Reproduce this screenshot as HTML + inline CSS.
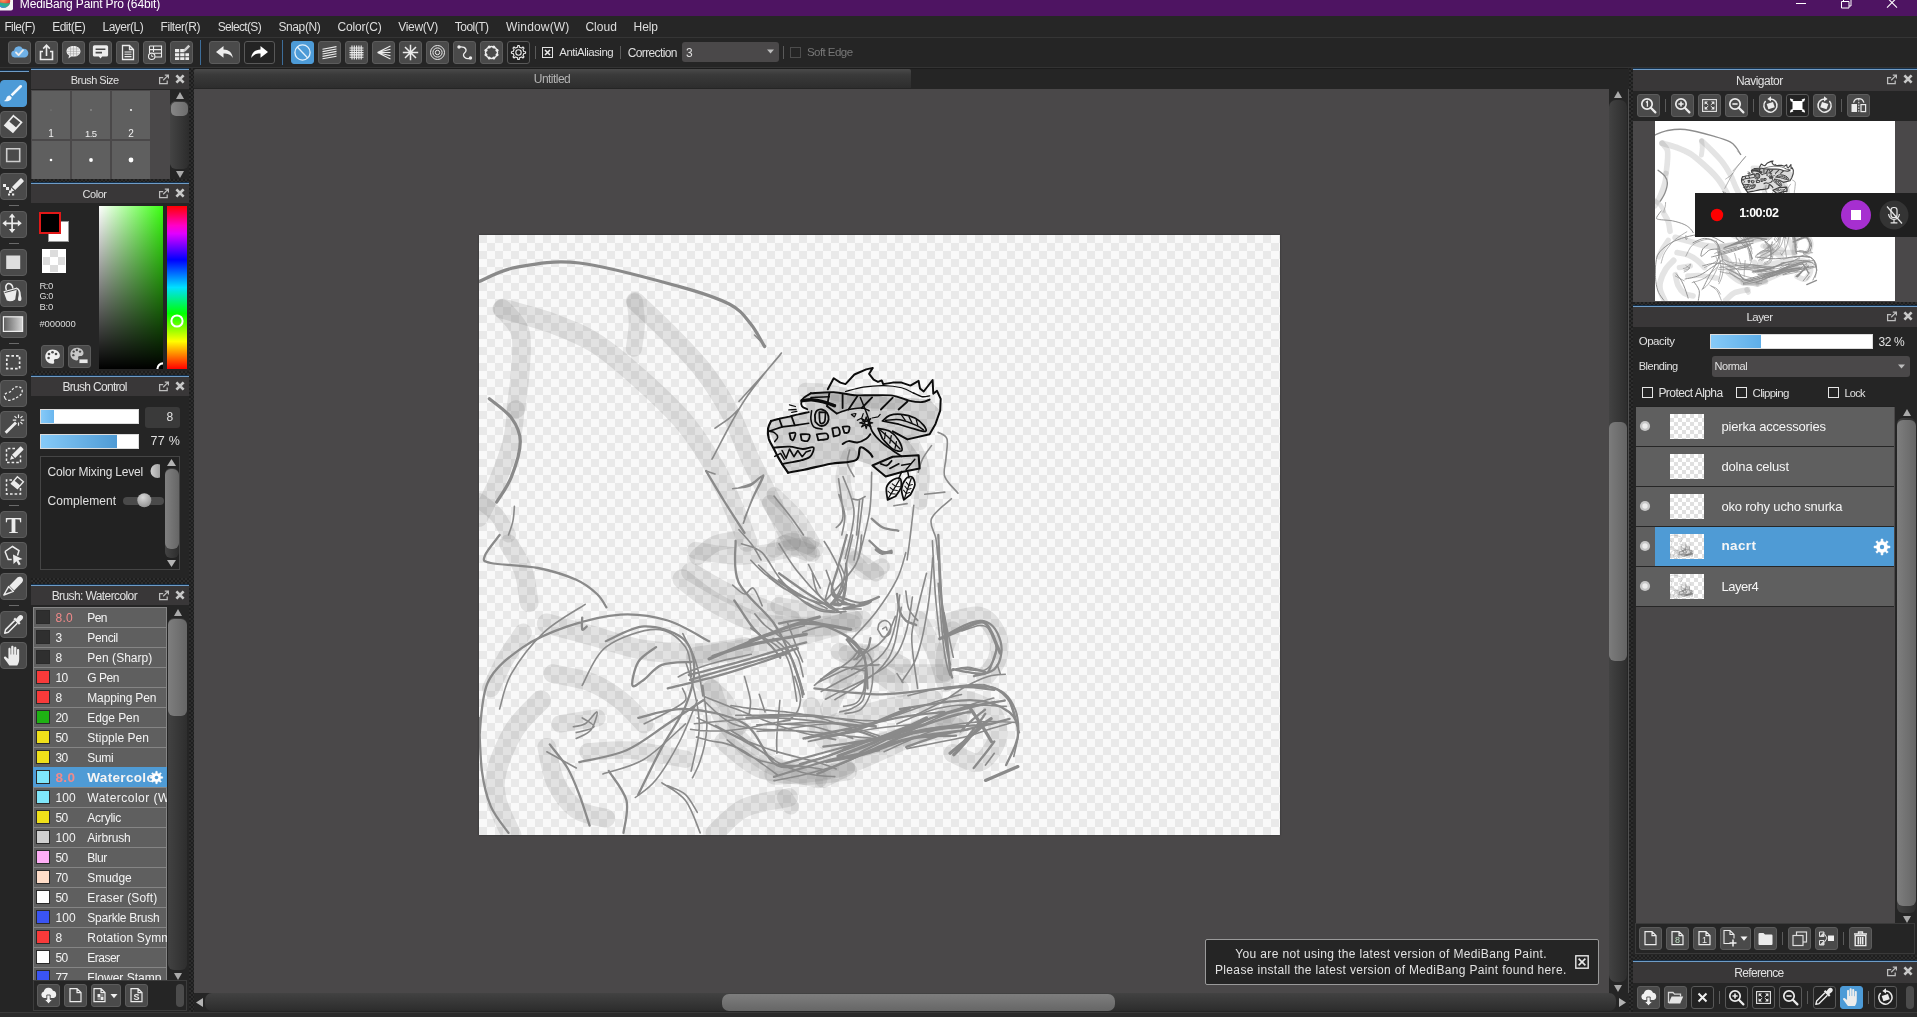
<!DOCTYPE html><html><head><meta charset="utf-8"><title>MediBang Paint Pro</title><style>
*{box-sizing:border-box}
html,body{margin:0;padding:0}
body{width:1917px;height:1017px;overflow:hidden;background:#252525;position:relative;font-family:"Liberation Sans",sans-serif;font-size:12px;color:#e6e6e6}
div,svg{position:absolute}
.b svg{left:-1px;top:-1px}
.t{white-space:nowrap}
.b{border-radius:3px;border:1px solid #5c5c5c;background:#4a4a4a}
.b.kd{background:#232323;border-color:#585858}
.b.kb{background:#4d9bd7;border-color:#4d9bd7}
.pt{background:#353334;border-top:0}
.bl{background:#3f78a6;height:1px}

.row{background:#5f5f5f;border:1px solid #858585}
.sw{border:1px solid #2a2a2a}
</style></head><body><div id="root" style="left:0;top:0;width:1917px;height:1017px;will-change:transform"><div style="left:0px;top:0px;width:1917px;height:16px;background:#4e1462"></div>
<svg style="left:0px;top:0px;" width="14" height="12" viewBox="0 0 14 12"><defs><radialGradient id="ai" cx=".45" cy=".3" r=".8"><stop offset="0" stop-color="#ffb060"/><stop offset=".45" stop-color="#e84a3a"/><stop offset="1" stop-color="#a02848"/></radialGradient><clipPath id="cpi"><circle cx="3.6" cy="1.2" r="6.6"/></clipPath></defs><path d="M0 0 h13 v8.5 a2 2 0 0 1 -2 2 h-11 z" fill="#f4f4f4"/><g clip-path="url(#cpi)"><rect x="-4" y="-6" width="16" height="16" fill="url(#ai)"/><path d="M-3 3 C1 1 5 5 10.5 2.5 V10 H-3 Z" fill="#2fae8e"/><path d="M-3 5 C0 4 3 8 8 6.5 V10 H-3 Z" fill="#3a8fd8"/></g></svg>
<div class="t" style="left:19.8px;top:-1.7px;font-size:12px;line-height:12px;color:#ffffff;letter-spacing:-0.15px;">MediBang Paint Pro (64bit)</div>
<svg style="left:1780px;top:0px;" width="137" height="16" viewBox="0 0 137 16"><path d="M16 3.5 h10" stroke="#fff" stroke-width="1"/><path d="M61.5 1.5 h7.5 v6.5 h-7.5 z M63.5 1.5 v-2.5 h7.5 v7 h-2" stroke="#fff" stroke-width="1" fill="none"/><path d="M107 -2.4 l10 10 M117 -2.4 l-10 10" stroke="#fff" stroke-width="1.1"/></svg>
<div style="left:0px;top:16px;width:1917px;height:21px;background:#262626"></div>
<div class="t" style="left:4.4px;top:21.0px;font-size:12px;line-height:12px;color:#dedede;letter-spacing:-0.60px;">File(F)</div>
<div class="t" style="left:52.3px;top:21.0px;font-size:12px;line-height:12px;color:#dedede;letter-spacing:-0.55px;">Edit(E)</div>
<div class="t" style="left:102.5px;top:21.0px;font-size:12px;line-height:12px;color:#dedede;letter-spacing:-0.50px;">Layer(L)</div>
<div class="t" style="left:160.5px;top:21.0px;font-size:12px;line-height:12px;color:#dedede;letter-spacing:-0.43px;">Filter(R)</div>
<div class="t" style="left:217.8px;top:21.0px;font-size:12px;line-height:12px;color:#dedede;letter-spacing:-0.69px;">Select(S)</div>
<div class="t" style="left:278.5px;top:21.0px;font-size:12px;line-height:12px;color:#dedede;letter-spacing:-0.41px;">Snap(N)</div>
<div class="t" style="left:337.4px;top:21.0px;font-size:12px;line-height:12px;color:#dedede;letter-spacing:-0.14px;">Color(C)</div>
<div class="t" style="left:398.3px;top:21.0px;font-size:12px;line-height:12px;color:#dedede;letter-spacing:-0.32px;">View(V)</div>
<div class="t" style="left:454.7px;top:21.0px;font-size:12px;line-height:12px;color:#dedede;letter-spacing:-0.49px;">Tool(T)</div>
<div class="t" style="left:506.0px;top:21.0px;font-size:12px;line-height:12px;color:#dedede;letter-spacing:0.17px;">Window(W)</div>
<div class="t" style="left:585.4px;top:21.0px;font-size:12px;line-height:12px;color:#dedede;letter-spacing:0.06px;">Cloud</div>
<div class="t" style="left:633.6px;top:21.0px;font-size:12px;line-height:12px;color:#dedede;letter-spacing:-0.10px;">Help</div>
<div style="left:0px;top:37px;width:1917px;height:1px;background:#353535"></div>
<div style="left:0px;top:38px;width:1917px;height:30px;background:#252525"></div>
<div style="left:0px;top:67px;width:1917px;height:1px;background:#333"></div>
<div class="b kg" style="left:8px;top:41px;width:23px;height:23px"><svg width="23" height="23" viewBox="0 0 23 23"><path d="M6.5 16.5 a3.6 3.6 0 0 1 -.4 -7.1 a4.6 4.6 0 0 1 8.6 -1.6 a4.2 4.2 0 0 1 2.3 8.7 z" fill="#6fb0e6" /><path d="M8 11.5 l2.6 2.6 l4.4 -5" fill="none" stroke="#ececec" stroke-width="1.8" stroke-linecap="round" stroke-linejoin="round"/></svg></div>
<div class="b kg" style="left:35px;top:41px;width:23px;height:23px"><svg width="23" height="23" viewBox="0 0 23 23"><path d="M8 10.5 h-2.5 v8 h12 v-8 h-2.5" fill="none" stroke="#ececec" stroke-width="1.6" /><path d="M11.5 15 v-10 M8.2 7.6 l3.3 -3.4 l3.3 3.4" fill="none" stroke="#ececec" stroke-width="1.6" /></svg></div>
<div class="b kg" style="left:62px;top:41px;width:23px;height:23px"><svg width="23" height="23" viewBox="0 0 23 23"><path d="M11.5 5 c4.2 0 7 2.3 7 5.3 s-2.8 5.3 -7 5.3 c-.8 0 -1.5 -.1 -2.2 -.2 l-3 2.2 l.9 -3 c-1.7 -1 -2.7 -2.5 -2.7 -4.3 c0 -3 2.8 -5.3 7 -5.3 z" fill="#ececec" /><path d="M6 8 h11 M5 10.4 h13 M6 12.8 h11 M8.5 5.5 v10 M11.5 5 v10.5 M14.5 5.5 v10" stroke="#9a9a9a" stroke-width=".5" fill="none"/></svg></div>
<div class="b kg" style="left:89px;top:41px;width:23px;height:23px"><svg width="23" height="23" viewBox="0 0 23 23"><path d="M5.5 4.2 h12 a1.6 1.6 0 0 1 1.6 1.6 v8.2 a1.6 1.6 0 0 1 -1.6 1.6 h-4.3 l-1.7 2 l-1.7 -2 h-4.3 a1.6 1.6 0 0 1 -1.6 -1.6 v-8.2 a1.6 1.6 0 0 1 1.6 -1.6 z" fill="#ececec" /><path d="M6.6 8.2 h9.8 M6.6 11.6 h6.4" stroke="#4a4a4a" stroke-width="1.6"/></svg></div>
<div class="b kg" style="left:116px;top:41px;width:23px;height:23px"><svg width="23" height="23" viewBox="0 0 23 23"><path d="M6.5 4.5 h7 l4 4 v10 h-11 z M13.5 4.5 v4 h4" fill="none" stroke="#ececec" stroke-width="1.3" /><path d="M8.5 11 h7 M8.5 13.3 h7 M8.5 15.6 h7" fill="none" stroke="#ececec" stroke-width="1.1" /></svg></div>
<div class="b kg" style="left:143px;top:41px;width:23px;height:23px"><svg width="23" height="23" viewBox="0 0 23 23"><path d="M6.5 5 h12 v11 h-7 M6.5 5 v7 M6.5 8.6 h12 M10.5 5 v6 M10.5 12.3 h8" fill="none" stroke="#ececec" stroke-width="1.1" /><circle cx="8.7" cy="15.3" r="3.2" fill="#4a4a4a" stroke="#ececec" stroke-width="1.1"/><path d="M8.7 13.5 v1.9 h1.6" fill="none" stroke="#ececec" stroke-width="0.9" /></svg></div>
<div class="b kg" style="left:170px;top:41px;width:23px;height:23px"><svg width="23" height="23" viewBox="0 0 23 23"><path d="M5 8 h4.2 v3.2 h-4.2 z M10.2 8 h4.2 v3.2 h-4.2 z M5 12.2 h4.2 v3 h-4.2 z M10.2 12.2 h4.2 v3 h-4.2 z M15.4 12.2 h3.6 v3 h-3.6 z M5 16.2 h4.2 v2.8 h-4.2 z M10.2 16.2 h4.2 v2.8 h-4.2 z M15.4 16.2 h3.6 v2.8 h-3.6 z" fill="#ececec" /><path d="M13.2 10.8 l.6 -2.4 l4.6 -4.6 l1.8 1.8 l-4.6 4.6 z" fill="#cfcfcf" /></svg></div>
<div style="left:200px;top:40px;width:1px;height:25px;background:#3d6d99"></div>
<div class="b kg" style="left:209px;top:41px;width:31px;height:23px"><svg width="31" height="23" viewBox="0 0 30 23"><path d="M6.5 11 l7.5 -6 v3.6 c5 .2 8.6 2.6 9.4 8.4 c-2.3 -3.3 -5 -4.4 -9.4 -4.4 v4.2 z" fill="#ececec" /></svg></div>
<div class="b kd" style="left:244px;top:41px;width:31px;height:23px"><svg width="31" height="23" viewBox="0 0 30 23"><path d="M23.5 11 l-7.5 -6 v3.6 c-5 .2 -8.6 2.6 -9.4 8.4 c2.3 -3.3 5 -4.4 9.4 -4.4 v4.2 z" fill="#ffffff" /></svg></div>
<div style="left:282px;top:40px;width:1px;height:25px;background:#3d6d99"></div>
<div class="b kb" style="left:291px;top:41px;width:23px;height:23px"><svg width="23" height="23" viewBox="0 0 23 23"><circle cx="11.5" cy="11.5" r="7.6" fill="none" stroke="#e4f1fb" stroke-width="1.3"/><path d="M6.3 6 l10.4 11" stroke="#e4f1fb" stroke-width="1.3"/></svg></div>
<div class="b kg" style="left:318px;top:41px;width:23px;height:23px"><svg width="23" height="23" viewBox="0 0 23 23"><path d="M4.5 8.2 l14 -2.6 M4.5 10.6 l14 -2.6 M4.5 13 l14 -2.6 M4.5 15.4 l14 -2.6 M4.5 17.8 l14 -2.6" fill="none" stroke="#ececec" stroke-width="1.1" /></svg></div>
<div class="b kg" style="left:345px;top:41px;width:23px;height:23px"><svg width="23" height="23" viewBox="0 0 23 23"><path d="M4.5 7 h14 M4.5 9.3 h14 M4.5 11.6 h14 M4.5 13.9 h14 M4.5 16.2 h14 M7 4.5 v14 M9.3 4.5 v14 M11.6 4.5 v14 M13.9 4.5 v14 M16.2 4.5 v14" fill="none" stroke="#ececec" stroke-width="1.1" /></svg></div>
<div class="b kg" style="left:372px;top:41px;width:23px;height:23px"><svg width="23" height="23" viewBox="0 0 23 23"><path d="M5.5 11.5 l13 -6.5 M5.5 11.5 l13 -3.2 M5.5 11.5 h13 M5.5 11.5 l13 3.2 M5.5 11.5 l13 6.5" fill="none" stroke="#ececec" stroke-width="1.1" /></svg></div>
<div class="b kg" style="left:399px;top:41px;width:23px;height:23px"><svg width="23" height="23" viewBox="0 0 23 23"><path d="M11.5 3.8 v15.4 M3.8 11.5 h15.4 M6 6 l11 11 M17 6 l-11 11" fill="none" stroke="#ececec" stroke-width="1.5" /></svg></div>
<div class="b kg" style="left:426px;top:41px;width:23px;height:23px"><svg width="23" height="23" viewBox="0 0 23 23"><circle cx="11.5" cy="11.5" r="2.2" fill="none" stroke="#ececec" stroke-width="1"/><circle cx="11.5" cy="11.5" r="4.6" fill="none" stroke="#ececec" stroke-width="1"/><circle cx="11.5" cy="11.5" r="7" fill="none" stroke="#ececec" stroke-width="1"/></svg></div>
<div class="b kg" style="left:453px;top:41px;width:23px;height:23px"><svg width="23" height="23" viewBox="0 0 23 23"><path d="M6 6 c8 -1 8 4 5.5 6 c-3 2.5 1 7 6 5.2" fill="none" stroke="#ececec" stroke-width="1.3" /><circle cx="6" cy="6" r="1.7" fill="#ececec"/><circle cx="17.5" cy="17" r="1.7" fill="#ececec"/></svg></div>
<div class="b kg" style="left:480px;top:41px;width:23px;height:23px"><svg width="23" height="23" viewBox="0 0 23 23"><circle cx="11.5" cy="11.5" r="6" fill="none" stroke="#ececec" stroke-width="1.4"/><circle cx="17.04" cy="13.80" r="1.5" fill="#ececec"/><circle cx="13.80" cy="17.04" r="1.5" fill="#ececec"/><circle cx="9.20" cy="17.04" r="1.5" fill="#ececec"/><circle cx="5.96" cy="13.80" r="1.5" fill="#ececec"/><circle cx="5.96" cy="9.20" r="1.5" fill="#ececec"/><circle cx="9.20" cy="5.96" r="1.5" fill="#ececec"/><circle cx="13.80" cy="5.96" r="1.5" fill="#ececec"/><circle cx="17.04" cy="9.20" r="1.5" fill="#ececec"/></svg></div>
<div class="b kd" style="left:507px;top:41px;width:23px;height:23px"><svg width="23" height="23" viewBox="0 0 23 23"><path d="M16.82 10.57 L18.56 10.72 L18.56 12.28 L16.82 12.43 L15.92 14.61 L17.04 15.94 L15.94 17.04 L14.61 15.92 L12.43 16.82 L12.28 18.56 L10.72 18.56 L10.57 16.82 L8.39 15.92 L7.06 17.04 L5.96 15.94 L7.08 14.61 L6.18 12.43 L4.44 12.28 L4.44 10.72 L6.18 10.57 L7.08 8.39 L5.96 7.06 L7.06 5.96 L8.39 7.08 L10.57 6.18 L10.72 4.44 L12.28 4.44 L12.43 6.18 L14.61 7.08 L15.94 5.96 L17.04 7.06 L15.92 8.39Z" fill="none" stroke="#ececec" stroke-width="1.1" stroke-linejoin="round"/><circle cx="11.5" cy="11.5" r="2.7" fill="none" stroke="#ececec" stroke-width="1.1"/></svg></div>
<div style="left:535px;top:46px;width:1px;height:13px;background:#5a5a5a"></div>
<svg style="left:542px;top:47px;" width="11" height="11" viewBox="0 0 11 11"><rect x=".5" y=".5" width="10" height="10" fill="none" stroke="#e0e0e0"/><path d="M3 3 l5 5 M8 3 l-5 5" stroke="#e8e8e8" stroke-width="1.6"/></svg>
<div class="t" style="left:559.3px;top:47.4px;font-size:11.5px;line-height:11.5px;color:#dedede;letter-spacing:-0.52px;">AntiAliasing</div>
<div style="left:620px;top:46px;width:1px;height:13px;background:#5a5a5a"></div>
<div class="t" style="left:627.7px;top:46.9px;font-size:12px;line-height:12px;color:#dedede;letter-spacing:-0.62px;">Correction</div>
<div style="left:682px;top:42px;width:97px;height:20px;background:#4a4849;border-radius:3px"></div>
<div class="t" style="left:686.0px;top:46.9px;font-size:12px;line-height:12px;color:#dedede;letter-spacing:0.00px;">3</div>
<svg style="left:767px;top:49px;" width="8" height="6" viewBox="0 0 8 6"><path d="M0 .5 h7 l-3.5 4 z" fill="#bdbdbd"/></svg>
<div style="left:783px;top:46px;width:1px;height:13px;background:#5a5a5a"></div>
<svg style="left:790px;top:47px;" width="11" height="11" viewBox="0 0 11 11"><rect x=".5" y=".5" width="10" height="10" fill="none" stroke="#4c4c4c"/></svg>
<div class="t" style="left:807.0px;top:47.4px;font-size:11.5px;line-height:11.5px;color:#777777;letter-spacing:-0.56px;">Soft Edge</div>
<div style="left:0px;top:68px;width:29px;height:944px;background:#252525"></div>
<div style="left:0px;top:70px;width:29px;height:1px;background:#14304c"></div>
<div style="left:0px;top:71px;width:29px;height:1px;background:#6f9cc6"></div>
<div class="b kb" style="left:0px;top:80px;width:27px;height:27px;border-radius:4px"><svg width="27" height="27" viewBox="0 0 27 27"><path d="M21.5 5.2 c.9 .6 .7 1.5 .2 2.1 l-9.2 9 l-1.9 -1.8 l8.9 -9 c.6 -.6 1.3 -.8 2 -.3 z" fill="#f4f9fd" /><path d="M9.6 15.4 l2 1.9 c.3 2.6 -2.6 4.6 -7.8 3.8 c1.7 -.8 2.2 -1.7 2.6 -3.2 c.4 -1.6 1.6 -2.5 3.2 -2.5 z" fill="#f4f9fd" /></svg></div>
<div class="b kg" style="left:0px;top:111px;width:27px;height:27px;border-radius:4px"><svg width="27" height="27" viewBox="0 0 27 27"><path d="M13.5 4.8 l8 6.6 l-8.6 9.6 l-8 -6.6 z" fill="none" stroke="#ececec" stroke-width="1.7" stroke-linejoin="miter"/><path d="M5.2 14.5 l3.7 -4.2 l7.9 6.6 l-3.8 4.2 z" fill="#ececec" /></svg></div>
<div class="b kg" style="left:0px;top:142px;width:27px;height:27px;border-radius:4px"><svg width="27" height="27" viewBox="0 0 27 27"><path d="M6.7 6.7 h13 v12.8 h-13 z" fill="none" stroke="#cdcdcd" stroke-width="1.6"/></svg></div>
<div class="b kg" style="left:0px;top:173px;width:27px;height:27px;border-radius:4px"><svg width="27" height="27" viewBox="0 0 27 27"><path d="M21.6 5.6 l1.9 1.9 c.4 .4 .4 .9 0 1.3 l-8.3 8.3 l-3.2 -3.2 l8.3 -8.3 c.4 -.4 .9 -.4 1.3 0 z" fill="#ececec" /><path d="M11.3 14.8 l2.9 2.9 l-3.9 1 z" fill="#ececec" /><path d="M3 11 h3 v3 h-3z M6 14 h3 v3 h-3z M9 17.5 h2.6 v2.6 h-2.6z M12 20.4 h2.2 v2.2 h-2.2z M8 20.4 h2 v2 h-2z" fill="#ececec" /></svg></div>
<div style="left:9px;top:205px;width:10px;height:1px;background:#6a6a6a"></div>
<div class="b kg" style="left:0px;top:211px;width:27px;height:27px;border-radius:4px"><svg width="27" height="27" viewBox="0 0 27 27"><g transform="translate(-.6,-.4) scale(.94)"><path d="M13.5 3.2 l3.4 4.2 h-2.5 v5.2 h5.2 v-2.5 l4.2 3.4 l-4.2 3.4 v-2.5 h-5.2 v5.2 h2.5 l-3.4 4.2 l-3.4 -4.2 h2.5 v-5.2 h-5.2 v2.5 l-4.2 -3.4 l4.2 -3.4 v2.5 h5.2 v-5.2 h-2.5 z" fill="#ececec" /></g></svg></div>
<div style="left:9px;top:243px;width:10px;height:1px;background:#6a6a6a"></div>
<div class="b kg" style="left:0px;top:249px;width:27px;height:27px;border-radius:4px"><svg width="27" height="27" viewBox="0 0 27 27"><path d="M6.2 6.5 h14 v13.5 h-14 z" fill="#dedede" /></svg></div>
<div class="b kg" style="left:0px;top:280px;width:27px;height:27px;border-radius:4px"><svg width="27" height="27" viewBox="0 0 27 27"><path d="M3.4 11.2 L17 7.4 L15.2 19.4 Q11 22.6 6.8 20.6 Z" fill="#ececec" /><path d="M4.6 12.6 L16.6 9.4" stroke="#4a4a4a" stroke-width="1" fill="none"/><path d="M6.4 10.2 C4.4 5.4 7.6 2.6 10.4 4 C12 4.8 12.8 6.8 12.8 8.4" fill="none" stroke="#ececec" stroke-width="1.4" /><path d="M16.6 7.6 C19.6 8.6 20.8 11.6 20.8 14.6 C20.8 16.6 21.8 17.8 21.4 19.4 A1.7 1.7 0 0 1 18 19.4 C18 17.4 18.9 16 18.7 13 C18.6 11 17.8 9.6 16.6 9 Z" fill="#ececec" /></svg></div>
<div class="b kg" style="left:0px;top:311px;width:27px;height:27px;border-radius:4px"><svg width="27" height="27" viewBox="0 0 27 27"><defs><linearGradient id="gr1" x1="0" x2="1"><stop offset="0" stop-color="#5e5e5e"/><stop offset="1" stop-color="#d6d6d6"/></linearGradient></defs><rect x="3.4" y="5.8" width="19.2" height="14.6" fill="url(#gr1)" stroke="#eeeeee" stroke-width="1.2"/></svg></div>
<div style="left:9px;top:343px;width:10px;height:1px;background:#6a6a6a"></div>
<div class="b kg" style="left:0px;top:349px;width:27px;height:27px;border-radius:4px"><svg width="27" height="27" viewBox="0 0 27 27"><path d="M6.8 6.8 h12.8 v12.8 h-12.8 z" fill="none" stroke="#ececec" stroke-width="1.7" stroke-dasharray="2.6 2"/></svg></div>
<div class="b kg" style="left:0px;top:380px;width:27px;height:27px;border-radius:4px"><svg width="27" height="27" viewBox="0 0 27 27"><path d="M5 18.2 C3 15 5.6 13 8.6 12.5 C11.6 12 12 9 14.6 7.4 C18 5.4 22.2 7 22.2 11 C22.2 15 18 17 15 18.5 C12 20 7 21.8 5 18.2 Z" fill="none" stroke="#ececec" stroke-width="1.3" stroke-dasharray="2.4 1.8"/></svg></div>
<div class="b kg" style="left:0px;top:411px;width:27px;height:27px;border-radius:4px"><svg width="27" height="27" viewBox="0 0 27 27"><path d="M4.6 20.8 l10.4 -10.4 l2 2 l-10.4 10.4 z" fill="#ececec" /><path d="M18.5 3.5 v3.4 M18.5 11.4 v3.4 M12.8 9.1 h3.4 M20.8 9.1 h3.4 M14.5 5.1 l2.1 2.1 M20.4 11 l2.1 2.1 M22.5 5.1 l-2.1 2.1" fill="none" stroke="#ececec" stroke-width="1.2" /></svg></div>
<div class="b kg" style="left:0px;top:442px;width:27px;height:27px;border-radius:4px"><svg width="27" height="27" viewBox="0 0 27 27"><path d="M15 6.5 h-8.5 v14 h14 v-7" fill="none" stroke="#ececec" stroke-width="1.5" stroke-dasharray="2.6 2"/><path d="M21 4.6 l2.2 2.2 c.4 .4 .4 .8 0 1.2 l-8 8 l-3.2 -3.2 l8 -8 c.4 -.4 .8 -.4 1 -.2 z" fill="#ececec" /><path d="M11.3 13.6 l3 3 l-4.2 1.2 z" fill="#ececec" /></svg></div>
<div class="b kg" style="left:0px;top:473px;width:27px;height:27px;border-radius:4px"><svg width="27" height="27" viewBox="0 0 27 27"><path d="M12 7 h-5.5 v14 h14 v-6" fill="none" stroke="#ececec" stroke-width="1.5" stroke-dasharray="2.6 2"/><path d="M17.4 3.8 l6 5 l-6 6.8 l-6 -5 z" fill="none" stroke="#ececec" stroke-width="1.4" /><path d="M11.7 10.4 l2.6 -3 l6 5 l-2.7 3 z" fill="#ececec" /></svg></div>
<div style="left:9px;top:505px;width:10px;height:1px;background:#6a6a6a"></div>
<div class="b kg" style="left:0px;top:511px;width:27px;height:27px;border-radius:4px"><svg width="27" height="27" viewBox="0 0 27 27"><text x="13.5" y="22" font-family="Liberation Serif" font-weight="bold" font-size="24" text-anchor="middle" fill="#ececec">T</text></svg></div>
<div class="b kg" style="left:0px;top:542px;width:27px;height:27px;border-radius:4px"><svg width="27" height="27" viewBox="0 0 27 27"><path d="M5 9.5 l7.5 -5 l6.5 4 l-1.5 5 M5 9.5 l3.2 8 h3.5" fill="none" stroke="#ececec" stroke-width="1.5" /><path d="M13 12.5 l9.5 4.6 l-4 1.2 l2.2 4 l-2 1 l-2.2 -4 l-3 2.6 z" fill="#ececec" /></svg></div>
<div class="b kg" style="left:0px;top:573px;width:27px;height:27px;border-radius:4px"><svg width="27" height="27" viewBox="0 0 27 27"><path d="M17.4 4.6 c1.6 -1.4 3.8 -.8 4.8 .4 c1 1.2 1.2 3 -.2 4.6 l-7.8 8 l-4.8 -4.8 z" fill="#ececec" /><path d="M8.6 13.6 l4.8 4.8 l-9.6 3.6 z" fill="none" stroke="#ececec" stroke-width="1.4" stroke-linejoin="round"/></svg></div>
<div style="left:9px;top:605px;width:10px;height:1px;background:#6a6a6a"></div>
<div class="b kg" style="left:0px;top:611px;width:27px;height:27px;border-radius:4px"><svg width="27" height="27" viewBox="0 0 27 27"><path d="M14.6 9.6 l-9 9 l-.9 3.6 l3.6 -.9 l9 -9" fill="none" stroke="#ececec" stroke-width="1.5" stroke-linejoin="round"/><path d="M13.4 8.2 l1.6 -1.6 l1.2 1.2 l2.4 -2.8 c1.2 -1.2 2.8 -1.2 3.8 -.2 c1 1 1 2.6 -.2 3.8 l-2.8 2.4 l1.2 1.2 l-1.6 1.6 z" fill="#ececec" /></svg></div>
<div class="b kg" style="left:0px;top:642px;width:27px;height:27px;border-radius:4px"><svg width="27" height="27" viewBox="0 0 27 27"><path d="M9.4 23.5 c-1.4 -1.8 -3 -4.4 -5.2 -7 c-1 -1.2 .4 -2.6 1.8 -1.6 l2.4 2 v-10 c0 -1.6 2.2 -1.6 2.2 0 v5.6 h.6 v-7.6 c0 -1.6 2.3 -1.6 2.3 0 v7.6 h.6 v-6.6 c0 -1.6 2.3 -1.6 2.3 0 v6.8 h.6 v-4.6 c0 -1.5 2.2 -1.5 2.2 0 v8.8 c0 3 -1 5 -2 6.6 z" fill="#ececec" /></svg></div>
<div style="left:189px;top:68px;width:5px;height:944px;background:repeating-conic-gradient(#2d2d2d 0 25%,#1e1e1e 0 50%) 0 0/4px 4px"></div>
<div style="left:31px;top:179px;width:158px;height:3px;background:repeating-conic-gradient(#2d2d2d 0 25%,#1e1e1e 0 50%) 0 0/4px 4px"></div>
<div style="left:31px;top:371px;width:158px;height:4px;background:repeating-conic-gradient(#2d2d2d 0 25%,#1e1e1e 0 50%) 0 0/4px 4px"></div>
<div style="left:31px;top:578px;width:158px;height:6px;background:repeating-conic-gradient(#2d2d2d 0 25%,#1e1e1e 0 50%) 0 0/4px 4px"></div>
<div style="left:31px;top:68px;width:158px;height:1px;background:#14304c"></div>
<div style="left:31px;top:69px;width:158px;height:1px;background:#6f9cc6"></div>
<div style="left:31px;top:70px;width:158px;height:19px;background:#393738"></div>
<div class="t" style="left:70.8px;top:75.3px;font-size:11.0px;line-height:11.0px;color:#e0e0e0;letter-spacing:-0.54px;">Brush Size</div>
<svg style="left:158px;top:74px;" width="11" height="11" viewBox="0 0 11 11"><path d="M5.2 3.6 H1.6 V9.6 H9.2 V6.6 M5.2 6.2 L10 1.4 M6.8 1 H10.4 V4.6" fill="none" stroke="#bebebe" stroke-width="1.25"/></svg>
<svg style="left:175px;top:74px;" width="10" height="10" viewBox="0 0 10 10"><path d="M1.4 1.4 l7.2 7.2 M8.6 1.4 l-7.2 7.2" stroke="#c9c9c9" stroke-width="2.7"/></svg>
<div style="left:31px;top:90px;width:158px;height:89px;background:#4a4849"></div>
<div style="left:32px;top:91px;width:38px;height:48px;background:#5f5f5f"></div>
<div style="left:72px;top:91px;width:38px;height:48px;background:#5f5f5f"></div>
<div style="left:112px;top:91px;width:38px;height:48px;background:#5f5f5f"></div>
<div style="left:32px;top:141px;width:38px;height:38px;background:#5f5f5f"></div>
<div style="left:72px;top:141px;width:38px;height:38px;background:#5f5f5f"></div>
<div style="left:112px;top:141px;width:38px;height:38px;background:#5f5f5f"></div>
<svg style="left:48px;top:107px;" width="6" height="6" viewBox="0 0 6 6"><circle cx="3" cy="3" r="0.6" fill="#8a8a8a"/></svg>
<div class="t" style="left:48.2px;top:128.7px;font-size:10px;line-height:10px;color:#f0f0f0;letter-spacing:0.00px;">1</div>
<svg style="left:88px;top:107px;" width="6" height="6" viewBox="0 0 6 6"><circle cx="3" cy="3" r="0.8" fill="#a5a5a5"/></svg>
<div class="t" style="left:85.0px;top:129.2px;font-size:9.5px;line-height:9.5px;color:#f0f0f0;letter-spacing:-0.60px;">1.5</div>
<svg style="left:128px;top:107px;" width="6" height="6" viewBox="0 0 6 6"><circle cx="3" cy="3" r="1.1" fill="#f0f0f0"/></svg>
<div class="t" style="left:128.2px;top:128.7px;font-size:10px;line-height:10px;color:#f0f0f0;letter-spacing:0.00px;">2</div>
<svg style="left:47px;top:156px;" width="8" height="8" viewBox="0 0 8 8"><circle cx="4" cy="4" r="1.3" fill="#fff"/></svg>
<svg style="left:87px;top:156px;" width="8" height="8" viewBox="0 0 8 8"><circle cx="4" cy="4" r="1.9" fill="#fff"/></svg>
<svg style="left:127px;top:156px;" width="8" height="8" viewBox="0 0 8 8"><circle cx="4" cy="4" r="2.4" fill="#fff"/></svg>
<div style="left:170px;top:90px;width:19px;height:89px;background:#252525"></div>
<svg style="left:175.5px;top:91.5px;" width="8" height="7" viewBox="0 0 8 7"><path d="M4 0 L8 7 H0 Z" fill="#aaaaaa"/></svg>
<svg style="left:175.5px;top:170.5px;" width="8" height="7" viewBox="0 0 8 7"><path d="M0 0 H8 L4 7 Z" fill="#aaaaaa"/></svg>
<div style="left:170px;top:101px;width:19px;height:67px;background:linear-gradient(90deg,#424242,#2e2e2e);border-radius:6px"></div>
<div style="left:170px;top:103px;width:19px;height:13px;background:linear-gradient(90deg,#7e7e7e,#666);border-radius:6px"></div>
<div style="left:170px;top:101px;width:19px;height:68px;background:linear-gradient(90deg,#444,#2c2c2c);border-radius:6px"></div>
<div style="left:171px;top:102px;width:17px;height:14px;background:linear-gradient(90deg,#868686,#6c6c6c);border-radius:5px"></div>
<div style="left:31px;top:182px;width:158px;height:1px;background:#14304c"></div>
<div style="left:31px;top:183px;width:158px;height:1px;background:#6f9cc6"></div>
<div style="left:31px;top:184px;width:158px;height:19px;background:#393738"></div>
<div class="t" style="left:82.6px;top:189.3px;font-size:11.0px;line-height:11.0px;color:#e0e0e0;letter-spacing:-0.47px;">Color</div>
<svg style="left:158px;top:188px;" width="11" height="11" viewBox="0 0 11 11"><path d="M5.2 3.6 H1.6 V9.6 H9.2 V6.6 M5.2 6.2 L10 1.4 M6.8 1 H10.4 V4.6" fill="none" stroke="#bebebe" stroke-width="1.25"/></svg>
<svg style="left:175px;top:188px;" width="10" height="10" viewBox="0 0 10 10"><path d="M1.4 1.4 l7.2 7.2 M8.6 1.4 l-7.2 7.2" stroke="#c9c9c9" stroke-width="2.7"/></svg>
<div style="left:31px;top:204px;width:158px;height:167px;background:#252525"></div>
<div style="left:48px;top:221px;width:21px;height:21px;background:#fff;border:1px solid #999"></div>
<div style="left:39px;top:212px;width:22px;height:22px;background:#000;border:2px solid #e01818"></div>
<div style="left:42px;top:249px;width:24px;height:24px;background:#fff;border:1px solid #fff;background-image:linear-gradient(45deg,#dcdcdc 25%,transparent 25%,transparent 75%,#dcdcdc 75%),linear-gradient(45deg,#dcdcdc 25%,transparent 25%,transparent 75%,#dcdcdc 75%);background-size:16px 16px;background-position:-1px -1px,7px 7px"></div>
<div class="t" style="left:39.4px;top:280.7px;font-size:9.5px;line-height:9.5px;color:#dcdcdc;letter-spacing:-0.49px;">R:0</div>
<div class="t" style="left:39.4px;top:291.9px;font-size:9.0px;line-height:9.0px;color:#dcdcdc;letter-spacing:-0.35px;">G:0</div>
<div class="t" style="left:39.4px;top:302.3px;font-size:9.5px;line-height:9.5px;color:#dcdcdc;letter-spacing:-0.23px;">B:0</div>
<div class="t" style="left:39.4px;top:319.4px;font-size:9.5px;line-height:9.5px;color:#dcdcdc;letter-spacing:-0.09px;">#000000</div>
<div class="b kg" style="left:41px;top:345px;width:23px;height:23px"><svg width="23" height="23" viewBox="0 0 23 23"><path d="M11.5 4.6 c4.4 0 7.4 2.8 7.4 6 c0 2.6 -2 3.6 -3.8 3.4 c-1.8 -.2 -2.6 .8 -2 2.2 c.6 1.6 -.4 2.6 -1.8 2.6 c-4 0 -7 -3 -7 -7 c0 -4 3.2 -7.2 7.2 -7.2 z" fill="#f0f0f0"/><circle cx="8" cy="9" r="1.3" fill="#4a4a4a"/><circle cx="11.5" cy="7.2" r="1.3" fill="#4a4a4a"/><circle cx="15" cy="9" r="1.3" fill="#4a4a4a"/><circle cx="7.6" cy="13" r="1.3" fill="#4a4a4a"/></svg></div>
<div class="b kg" style="left:68px;top:345px;width:23px;height:23px"><svg width="23" height="23" viewBox="0 0 23 23"><g transform="translate(-1.5,-1.5) scale(.9)"><path d="M11.5 4.6 c4.4 0 7.4 2.8 7.4 6 c0 2.6 -2 3.6 -3.8 3.4 c-1.8 -.2 -2.6 .8 -2 2.2 c.6 1.6 -.4 2.6 -1.8 2.6 c-4 0 -7 -3 -7 -7 c0 -4 3.2 -7.2 7.2 -7.2 z" fill="#c8c8c8"/><circle cx="8" cy="9" r="1.3" fill="#4a4a4a"/><circle cx="11.5" cy="7.2" r="1.3" fill="#4a4a4a"/><circle cx="15" cy="9" r="1.3" fill="#4a4a4a"/><circle cx="7.6" cy="13" r="1.3" fill="#4a4a4a"/></g><rect x="11" y="14" width="9" height="4.4" fill="#e8e8e8" stroke="#4a4a4a" stroke-width=".8"/></svg></div>
<div style="left:99px;top:206px;width:64px;height:163px;background:linear-gradient(to top,#000,rgba(0,0,0,0)),linear-gradient(to right,#fff,#3bff12)"></div>
<svg style="left:151px;top:357px;overflow:hidden" width="12" height="12" viewBox="0 0 12 12"><circle cx="12" cy="12" r="5.6" fill="none" stroke="#fff" stroke-width="2.1"/></svg>
<div style="left:167px;top:206px;width:20px;height:163px;background:linear-gradient(to bottom,#ff0000 0%,#ff00c8 12%,#e000ff 17%,#0000ff 33%,#00e0ff 50%,#00ff00 66%,#ffff00 83%,#ff0000 100%)"></div>
<svg style="left:169.3px;top:313.3px;" width="16" height="16" viewBox="0 0 16 16"><circle cx="8" cy="8" r="5.6" fill="none" stroke="#fff" stroke-width="2"/></svg>
<div style="left:31px;top:375px;width:158px;height:1px;background:#14304c"></div>
<div style="left:31px;top:376px;width:158px;height:1px;background:#6f9cc6"></div>
<div style="left:31px;top:377px;width:158px;height:19px;background:#393738"></div>
<div class="t" style="left:62.5px;top:381.4px;font-size:12px;line-height:12px;color:#e0e0e0;letter-spacing:-0.70px;">Brush Control</div>
<svg style="left:158px;top:381px;" width="11" height="11" viewBox="0 0 11 11"><path d="M5.2 3.6 H1.6 V9.6 H9.2 V6.6 M5.2 6.2 L10 1.4 M6.8 1 H10.4 V4.6" fill="none" stroke="#bebebe" stroke-width="1.25"/></svg>
<svg style="left:175px;top:381px;" width="10" height="10" viewBox="0 0 10 10"><path d="M1.4 1.4 l7.2 7.2 M8.6 1.4 l-7.2 7.2" stroke="#c9c9c9" stroke-width="2.7"/></svg>
<div style="left:31px;top:397px;width:158px;height:181px;background:#252525"></div>
<div style="left:40px;top:409px;width:99px;height:15px;background:#fff;border:1px solid #dcdcdc"></div>
<div style="left:41px;top:410px;width:13px;height:13px;background:linear-gradient(90deg,#86caf8,#6ab6ee)"></div>
<div style="left:145px;top:407px;width:35px;height:21px;background:#3a3a3a;border-radius:3px"></div>
<div class="t" style="left:166.5px;top:411.4px;font-size:12px;line-height:12px;color:#e0e0e0;letter-spacing:0.00px;">8</div>
<div style="left:40px;top:434px;width:99px;height:15px;background:#fff;border:1px solid #dcdcdc"></div>
<div style="left:41px;top:435px;width:76px;height:13px;background:linear-gradient(90deg,#86caf8,#4f9bd5)"></div>
<div class="t" style="left:150.5px;top:435.1px;font-size:12.5px;line-height:12.5px;color:#e0e0e0;letter-spacing:0.31px;">77 %</div>
<div style="left:40px;top:456px;width:140px;height:114px;border:1px solid #454545;background:#222"></div>
<div class="t" style="left:47.6px;top:465.8px;font-size:12px;line-height:12px;color:#e0e0e0;letter-spacing:-0.18px;">Color Mixing Level</div>
<div class="t" style="left:47.6px;top:495.4px;font-size:12px;line-height:12px;color:#e0e0e0;letter-spacing:0.05px;">Complement</div>
<svg style="left:150px;top:464px;overflow:hidden" width="10" height="14" viewBox="0 0 10 14"><defs><linearGradient id="kn" x1="0" x2="1"><stop offset="0" stop-color="#d0d0d0"/><stop offset="1" stop-color="#8a8a8a"/></linearGradient></defs><circle cx="7.5" cy="7" r="7" fill="url(#kn)"/></svg>
<div style="left:123px;top:497px;width:41px;height:8px;background:#4a4a4a;border-radius:4px"></div>
<svg style="left:136.7px;top:493px;" width="15" height="15" viewBox="0 0 15 15"><defs><radialGradient id="kn2" cx=".4" cy=".3" r=".8"><stop offset="0" stop-color="#d8d8d8"/><stop offset="1" stop-color="#8c8c8c"/></radialGradient></defs><circle cx="7.3" cy="7.2" r="7" fill="url(#kn2)"/></svg>
<svg style="left:167px;top:459px;" width="9" height="7" viewBox="0 0 9 7"><path d="M4.5 0 L9 7 H0 Z" fill="#b4b4b4"/></svg>
<svg style="left:167px;top:560px;" width="9" height="7" viewBox="0 0 9 7"><path d="M0 0 H9 L4.5 7 Z" fill="#b4b4b4"/></svg>
<div style="left:165px;top:468px;width:14px;height:90px;background:linear-gradient(90deg,#444,#2c2c2c);border-radius:6px"></div>
<div style="left:165px;top:469px;width:14px;height:80px;background:linear-gradient(90deg,#808080,#666);border-radius:6px"></div>
<div style="left:31px;top:584px;width:158px;height:1px;background:#14304c"></div>
<div style="left:31px;top:585px;width:158px;height:1px;background:#6f9cc6"></div>
<div style="left:31px;top:586px;width:158px;height:19px;background:#393738"></div>
<div class="t" style="left:51.7px;top:590.4px;font-size:12px;line-height:12px;color:#e0e0e0;letter-spacing:-0.60px;">Brush: Watercolor</div>
<svg style="left:158px;top:590px;" width="11" height="11" viewBox="0 0 11 11"><path d="M5.2 3.6 H1.6 V9.6 H9.2 V6.6 M5.2 6.2 L10 1.4 M6.8 1 H10.4 V4.6" fill="none" stroke="#bebebe" stroke-width="1.25"/></svg>
<svg style="left:175px;top:590px;" width="10" height="10" viewBox="0 0 10 10"><path d="M1.4 1.4 l7.2 7.2 M8.6 1.4 l-7.2 7.2" stroke="#c9c9c9" stroke-width="2.7"/></svg>
<div style="left:31px;top:606px;width:158px;height:406px;background:#252525"></div>
<div style="left:33px;top:607px;width:134px;height:373px;overflow:hidden"><div class="row" style="left:0;top:0px;width:134px;height:21px;"></div><div class="sw" style="left:3px;top:3px;width:14px;height:14px;background:#2f2f2f"></div><div class="t" style="left:22.4px;top:4.8px;font-size:12px;line-height:12px;color:#f08a8a;letter-spacing:0.36px;">8.0</div><div class="t" style="left:54.3px;top:4.8px;font-size:12px;line-height:12px;color:#f4f4f4;letter-spacing:-0.67px;">Pen</div><div class="row" style="left:0;top:20px;width:134px;height:21px;"></div><div class="sw" style="left:3px;top:23px;width:14px;height:14px;background:#2f2f2f"></div><div class="t" style="left:22.4px;top:24.8px;font-size:12px;line-height:12px;color:#f2f2f2;letter-spacing:0.00px;">3</div><div class="t" style="left:54.3px;top:24.8px;font-size:12px;line-height:12px;color:#f4f4f4;letter-spacing:-0.34px;">Pencil</div><div class="row" style="left:0;top:40px;width:134px;height:21px;"></div><div class="sw" style="left:3px;top:43px;width:14px;height:14px;background:#2f2f2f"></div><div class="t" style="left:22.4px;top:44.8px;font-size:12px;line-height:12px;color:#f2f2f2;letter-spacing:0.00px;">8</div><div class="t" style="left:54.3px;top:44.8px;font-size:12px;line-height:12px;color:#f4f4f4;letter-spacing:0.03px;">Pen (Sharp)</div><div class="row" style="left:0;top:60px;width:134px;height:21px;"></div><div class="sw" style="left:3px;top:63px;width:14px;height:14px;background:#f83a3a"></div><div class="t" style="left:22.4px;top:64.8px;font-size:12px;line-height:12px;color:#f2f2f2;letter-spacing:-0.44px;">10</div><div class="t" style="left:54.3px;top:64.8px;font-size:12px;line-height:12px;color:#f4f4f4;letter-spacing:-0.50px;">G Pen</div><div class="row" style="left:0;top:80px;width:134px;height:21px;"></div><div class="sw" style="left:3px;top:83px;width:14px;height:14px;background:#f83a3a"></div><div class="t" style="left:22.4px;top:84.8px;font-size:12px;line-height:12px;color:#f2f2f2;letter-spacing:0.00px;">8</div><div class="t" style="left:54.3px;top:84.8px;font-size:12px;line-height:12px;color:#f4f4f4;letter-spacing:-0.17px;">Mapping Pen</div><div class="row" style="left:0;top:100px;width:134px;height:21px;"></div><div class="sw" style="left:3px;top:103px;width:14px;height:14px;background:#1fb214"></div><div class="t" style="left:22.4px;top:104.8px;font-size:12px;line-height:12px;color:#f2f2f2;letter-spacing:-0.44px;">20</div><div class="t" style="left:54.3px;top:104.8px;font-size:12px;line-height:12px;color:#f4f4f4;letter-spacing:-0.10px;">Edge Pen</div><div class="row" style="left:0;top:120px;width:134px;height:21px;"></div><div class="sw" style="left:3px;top:123px;width:14px;height:14px;background:#efe01a"></div><div class="t" style="left:22.4px;top:124.8px;font-size:12px;line-height:12px;color:#f2f2f2;letter-spacing:-0.44px;">50</div><div class="t" style="left:54.3px;top:124.8px;font-size:12px;line-height:12px;color:#f4f4f4;letter-spacing:0.03px;">Stipple Pen</div><div class="row" style="left:0;top:140px;width:134px;height:21px;"></div><div class="sw" style="left:3px;top:143px;width:14px;height:14px;background:#efe01a"></div><div class="t" style="left:22.4px;top:144.8px;font-size:12px;line-height:12px;color:#f2f2f2;letter-spacing:-0.44px;">30</div><div class="t" style="left:54.3px;top:144.8px;font-size:12px;line-height:12px;color:#f4f4f4;letter-spacing:-0.31px;">Sumi</div><div class="row" style="left:0;top:160px;width:134px;height:21px;background:#4f9bd5;border-color:#4f9bd5;"></div><div class="sw" style="left:3px;top:163px;width:14px;height:14px;background:#7fe6fa"></div><div class="t" style="left:22.4px;top:163.6px;font-size:13.5px;line-height:13.5px;color:#f08a8a;letter-spacing:0.41px;font-weight:bold;">8.0</div><div class="t" style="left:54.3px;top:163.6px;font-size:13.5px;line-height:13.5px;color:#f4f4f4;letter-spacing:0.33px;font-weight:bold;">Watercolor</div><svg style="left:116px;top:163px" width="15" height="15" viewBox="0 0 15 15"><path d="M11.83 6.74 L13.66 6.82 L13.66 8.18 L11.83 8.26 L11.10 10.03 L12.34 11.38 L11.38 12.34 L10.03 11.10 L8.26 11.83 L8.18 13.66 L6.82 13.66 L6.74 11.83 L4.97 11.10 L3.62 12.34 L2.66 11.38 L3.90 10.03 L3.17 8.26 L1.34 8.18 L1.34 6.82 L3.17 6.74 L3.90 4.97 L2.66 3.62 L3.62 2.66 L4.97 3.90 L6.74 3.17 L6.82 1.34 L8.18 1.34 L8.26 3.17 L10.03 3.90 L11.38 2.66 L12.34 3.62 L11.10 4.97Z" fill="#ffffff" stroke="#ffffff" stroke-width="0.6" stroke-linejoin="round"/><circle cx="7.5" cy="7.5" r="1.8" fill="#4f9bd5"/></svg><div class="row" style="left:0;top:180px;width:134px;height:21px;"></div><div class="sw" style="left:3px;top:183px;width:14px;height:14px;background:#7fe6fa"></div><div class="t" style="left:22.4px;top:184.8px;font-size:12px;line-height:12px;color:#f2f2f2;letter-spacing:0.14px;">100</div><div class="t" style="left:54.3px;top:184.8px;font-size:12px;line-height:12px;color:#f4f4f4;letter-spacing:0.48px;">Watercolor (W</div><div class="row" style="left:0;top:200px;width:134px;height:21px;"></div><div class="sw" style="left:3px;top:203px;width:14px;height:14px;background:#efe01a"></div><div class="t" style="left:22.4px;top:204.8px;font-size:12px;line-height:12px;color:#f2f2f2;letter-spacing:-0.44px;">50</div><div class="t" style="left:54.3px;top:204.8px;font-size:12px;line-height:12px;color:#f4f4f4;letter-spacing:-0.22px;">Acrylic</div><div class="row" style="left:0;top:220px;width:134px;height:21px;"></div><div class="sw" style="left:3px;top:223px;width:14px;height:14px;background:#cfcfcf"></div><div class="t" style="left:22.4px;top:224.8px;font-size:12px;line-height:12px;color:#f2f2f2;letter-spacing:0.14px;">100</div><div class="t" style="left:54.3px;top:224.8px;font-size:12px;line-height:12px;color:#f4f4f4;letter-spacing:-0.18px;">Airbrush</div><div class="row" style="left:0;top:240px;width:134px;height:21px;"></div><div class="sw" style="left:3px;top:243px;width:14px;height:14px;background:#ffaef6"></div><div class="t" style="left:22.4px;top:244.8px;font-size:12px;line-height:12px;color:#f2f2f2;letter-spacing:-0.44px;">50</div><div class="t" style="left:54.3px;top:244.8px;font-size:12px;line-height:12px;color:#f4f4f4;letter-spacing:-0.45px;">Blur</div><div class="row" style="left:0;top:260px;width:134px;height:21px;"></div><div class="sw" style="left:3px;top:263px;width:14px;height:14px;background:#ffddc8"></div><div class="t" style="left:22.4px;top:264.8px;font-size:12px;line-height:12px;color:#f2f2f2;letter-spacing:-0.44px;">70</div><div class="t" style="left:54.3px;top:264.8px;font-size:12px;line-height:12px;color:#f4f4f4;letter-spacing:-0.06px;">Smudge</div><div class="row" style="left:0;top:280px;width:134px;height:21px;"></div><div class="sw" style="left:3px;top:283px;width:14px;height:14px;background:#ffffff"></div><div class="t" style="left:22.4px;top:284.8px;font-size:12px;line-height:12px;color:#f2f2f2;letter-spacing:-0.44px;">50</div><div class="t" style="left:54.3px;top:284.8px;font-size:12px;line-height:12px;color:#f4f4f4;letter-spacing:0.17px;">Eraser (Soft)</div><div class="row" style="left:0;top:300px;width:134px;height:21px;"></div><div class="sw" style="left:3px;top:303px;width:14px;height:14px;background:#3a54f2"></div><div class="t" style="left:22.4px;top:304.8px;font-size:12px;line-height:12px;color:#f2f2f2;letter-spacing:0.14px;">100</div><div class="t" style="left:54.3px;top:304.8px;font-size:12px;line-height:12px;color:#f4f4f4;letter-spacing:-0.25px;">Sparkle Brush</div><div class="row" style="left:0;top:320px;width:134px;height:21px;"></div><div class="sw" style="left:3px;top:323px;width:14px;height:14px;background:#f83a3a"></div><div class="t" style="left:22.4px;top:324.8px;font-size:12px;line-height:12px;color:#f2f2f2;letter-spacing:0.00px;">8</div><div class="t" style="left:54.3px;top:324.8px;font-size:12px;line-height:12px;color:#f4f4f4;letter-spacing:0.17px;">Rotation Symm</div><div class="row" style="left:0;top:340px;width:134px;height:21px;"></div><div class="sw" style="left:3px;top:343px;width:14px;height:14px;background:#ffffff"></div><div class="t" style="left:22.4px;top:344.8px;font-size:12px;line-height:12px;color:#f2f2f2;letter-spacing:-0.44px;">50</div><div class="t" style="left:54.3px;top:344.8px;font-size:12px;line-height:12px;color:#f4f4f4;letter-spacing:-0.51px;">Eraser</div><div class="row" style="left:0;top:360px;width:134px;height:21px;"></div><div class="sw" style="left:3px;top:363px;width:14px;height:14px;background:#3a54f2"></div><div class="t" style="left:22.4px;top:364.8px;font-size:12px;line-height:12px;color:#f2f2f2;letter-spacing:-0.44px;">77</div><div class="t" style="left:54.3px;top:364.8px;font-size:12px;line-height:12px;color:#f4f4f4;letter-spacing:-0.00px;">Flower Stamp</div></div>
<div style="left:168px;top:607px;width:19px;height:374px;background:#252525"></div>
<svg style="left:173.5px;top:608.5px;" width="8" height="7" viewBox="0 0 8 7"><path d="M4 0 L8 7 H0 Z" fill="#aaaaaa"/></svg>
<svg style="left:173.5px;top:972.5px;" width="8" height="7" viewBox="0 0 8 7"><path d="M0 0 H8 L4 7 Z" fill="#aaaaaa"/></svg>
<div style="left:168px;top:618px;width:19px;height:352px;background:linear-gradient(90deg,#424242,#2e2e2e);border-radius:6px"></div>
<div style="left:168px;top:619px;width:19px;height:97px;background:linear-gradient(90deg,#7e7e7e,#666);border-radius:6px"></div>
<div style="left:33px;top:980px;width:154px;height:31px;border:1px solid #3c3c3c"></div>
<div class="b kg" style="left:37px;top:984px;width:23px;height:23px"><svg width="23" height="23" viewBox="0 0 23 23"><path d="M7 14 a3.4 3.4 0 0 1 -.2 -6.6 a4.8 4.8 0 0 1 9.2 -.6 a3.7 3.7 0 0 1 .6 7.2 z" fill="#f0f0f0"/><path d="M9.8 11 h3.4 v4.4 h2.6 l-4.3 4.4 l-4.3 -4.4 h2.6 z" fill="#f0f0f0" stroke="#4a4a4a" stroke-width=".9"/></svg></div>
<div class="b kg" style="left:64px;top:984px;width:23px;height:23px"><svg width="23" height="23" viewBox="0 0 23 23"><path d="M6 4.6 h7 l4 4 v9 h-11 z M13 4.6 v4 h4" fill="none" stroke="#ececec" stroke-width="1.2" /></svg></div>
<div class="b kg" style="left:91px;top:984px;width:30px;height:23px"><svg width="30" height="23" viewBox="0 0 30 23"><g transform="translate(-3,0)"><path d="M6 4.6 h7 l4 4 v9 h-11 z M13 4.6 v4 h4" fill="none" stroke="#ececec" stroke-width="1.2" /><path d="M9.5 10 h3 v3 h-3z M12.5 13 h3 v3 h-3z" fill="#ececec"/><path d="M12.5 10 h3 v3 h-3z M9.5 13 h3 v3 h-3z" fill="#858585"/></g><path d="M19.5 10 h7 l-3.5 4.2 z" fill="#f0f0f0"/></svg></div>
<div class="b kg" style="left:125px;top:984px;width:23px;height:23px"><svg width="23" height="23" viewBox="0 0 23 23"><path d="M6 4.6 h7 l4 4 v9 h-11 z M13 4.6 v4 h4" fill="none" stroke="#ececec" stroke-width="1.2" /><text x="11.5" y="16.2" font-size="9" font-weight="bold" text-anchor="middle" fill="#ececec" font-family="Liberation Sans">S</text></svg></div>
<div style="left:176px;top:984px;width:8px;height:23px;background:#4c4c4c;border-radius:4px"></div>
<div style="left:194px;top:68px;width:1434px;height:21px;background:#252525"></div>
<div style="left:194px;top:68px;width:1434px;height:1px;background:#1c1c1c"></div>
<div style="left:194px;top:69px;width:717px;height:19px;background:linear-gradient(#4a4a4a,#3a3a3a 30%,#2d2d2d);border-radius:2px 2px 0 0"></div>
<div class="t" style="left:533.8px;top:72.7px;font-size:12px;line-height:12px;color:#b4b4b4;letter-spacing:-0.54px;">Untitled</div>
<div style="left:194px;top:89px;width:1415px;height:904px;background:#4a4849"></div>
<div style="left:479px;top:235px;width:801px;height:600px;background-color:#f9f9f9;background-image:linear-gradient(45deg,#e9e9e9 25%,transparent 25%,transparent 75%,#e9e9e9 75%),linear-gradient(45deg,#e9e9e9 25%,transparent 25%,transparent 75%,#e9e9e9 75%);background-size:16px 16px;background-position:8px 0,0 8px;overflow:hidden;box-shadow:0 0 2px rgba(0,0,0,.35)"><svg style="left:0;top:0" width="801" height="600" viewBox="0 0 801 600"><path d="M23.6 73.7 C32.0 76.2 58.0 82.6 73.7 88.5 C89.5 94.4 102.8 99.3 118.0 109.1 C133.2 119.0 150.4 134.2 165.2 147.5 C179.9 160.8 194.7 174.5 206.5 188.8 C218.3 203.0 227.6 218.3 236.0 233.0 C244.3 247.8 251.2 265.0 256.6 277.3 C262.0 289.6 266.5 301.9 268.4 306.8" fill="none" stroke="#6e6e6e" stroke-opacity="0.165" stroke-width="20.0" stroke-linecap="round" stroke-linejoin="round"/><path d="M23.6 73.7 C26.5 77.7 38.3 87.0 41.3 97.3 C44.2 107.7 42.0 122.9 41.3 135.7 C40.6 148.5 37.6 167.6 36.9 174.0" fill="none" stroke="#6e6e6e" stroke-opacity="0.165" stroke-width="18.75" stroke-linecap="round" stroke-linejoin="round"/><path d="M156.3 66.4 C161.8 71.5 177.5 85.8 188.8 97.3 C200.1 108.9 213.9 122.4 224.2 135.7 C234.5 149.0 242.9 162.2 250.7 177.0 C258.6 191.7 264.0 208.5 271.4 224.2 C278.8 239.9 288.1 257.6 295.0 271.4 C301.9 285.2 309.7 300.9 312.7 306.8" fill="none" stroke="#6e6e6e" stroke-opacity="0.165" stroke-width="18.75" stroke-linecap="round" stroke-linejoin="round"/><path d="M155.8 66.4 C156.1 70.1 158.0 80.6 157.8 88.5 C157.7 96.4 155.4 109.4 154.9 113.6" fill="none" stroke="#6e6e6e" stroke-opacity="0.165" stroke-width="16.25" stroke-linecap="round" stroke-linejoin="round"/><path d="M36.9 174.0 C36.1 179.4 35.6 194.2 32.4 206.5 C29.3 218.8 23.1 235.0 17.7 247.8 C12.3 260.6 2.9 277.3 0.0 283.2" fill="none" stroke="#6e6e6e" stroke-opacity="0.165" stroke-width="17.5" stroke-linecap="round" stroke-linejoin="round"/><path d="M0.0 265.5 C2.9 267.9 12.8 274.5 17.7 280.2 C22.6 286.0 27.5 296.7 29.5 300.0" fill="none" stroke="#6e6e6e" stroke-opacity="0.165" stroke-width="15.0" stroke-linecap="round" stroke-linejoin="round"/><path d="M295.0 259.6 C298.9 263.5 312.2 275.3 318.6 283.2 C325.0 291.1 330.9 302.9 333.3 306.8" fill="none" stroke="#6e6e6e" stroke-opacity="0.165" stroke-width="15.0" stroke-linecap="round" stroke-linejoin="round"/><path d="M29.5 308.8 C32.0 313.3 40.8 325.6 44.2 335.4 C47.7 345.2 49.2 362.4 50.1 367.8" fill="none" stroke="#6e6e6e" stroke-opacity="0.165" stroke-width="18.75" stroke-linecap="round" stroke-linejoin="round"/><path d="M67.8 388.5 C75.2 390.5 95.9 395.9 112.1 400.3 C128.3 404.7 146.5 412.1 165.2 415.0 C183.9 418.0 207.5 418.5 224.2 418.0 C240.9 417.5 258.6 413.1 265.5 412.1" fill="none" stroke="#6e6e6e" stroke-opacity="0.165" stroke-width="20.0" stroke-linecap="round" stroke-linejoin="round"/><path d="M44.2 397.3 C41.3 401.8 32.0 414.6 26.5 423.9 C21.1 433.2 14.3 448.5 11.8 453.4" fill="none" stroke="#6e6e6e" stroke-opacity="0.165" stroke-width="17.5" stroke-linecap="round" stroke-linejoin="round"/><path d="M73.7 438.6 C80.1 440.1 100.8 443.1 112.1 447.5 C123.4 451.9 132.7 458.3 141.6 465.2 C150.4 472.1 161.3 484.9 165.2 488.8" fill="none" stroke="#6e6e6e" stroke-opacity="0.165" stroke-width="18.75" stroke-linecap="round" stroke-linejoin="round"/><path d="M61.9 465.2 C57.5 470.1 42.8 482.9 35.4 494.7 C28.0 506.5 20.6 524.2 17.7 536.0 C14.7 547.8 15.2 554.8 17.7 565.5 C20.2 576.2 30.0 594.2 32.4 600.0" fill="none" stroke="#6e6e6e" stroke-opacity="0.165" stroke-width="20.0" stroke-linecap="round" stroke-linejoin="round"/><path d="M81.1 488.8 L118.0 482.9" fill="none" stroke="#6e6e6e" stroke-opacity="0.165" stroke-width="17.5" stroke-linecap="round" stroke-linejoin="round"/><path d="M109.1 516.8 C116.5 516.6 137.2 514.1 153.4 515.3 C169.6 516.6 197.6 522.7 206.5 524.2" fill="none" stroke="#6e6e6e" stroke-opacity="0.165" stroke-width="17.5" stroke-linecap="round" stroke-linejoin="round"/><path d="M67.8 512.4 C69.3 518.3 71.8 537.5 76.7 547.8 C81.6 558.1 89.0 568.4 97.3 574.3 C105.7 580.2 121.9 581.7 126.8 583.2" fill="none" stroke="#6e6e6e" stroke-opacity="0.165" stroke-width="18.75" stroke-linecap="round" stroke-linejoin="round"/><path d="M236.0 597.9 C240.9 593.8 253.2 578.8 265.5 572.9 C277.8 567.0 302.4 564.3 309.7 562.5" fill="none" stroke="#6e6e6e" stroke-opacity="0.165" stroke-width="18.75" stroke-linecap="round" stroke-linejoin="round"/><path d="M203.5 344.2 C208.9 348.2 222.7 360.5 236.0 367.8 C249.3 375.2 266.0 384.6 283.2 388.5 C300.4 392.4 322.5 391.9 339.2 391.4 C355.9 391.0 376.1 386.5 383.5 385.5" fill="none" stroke="#6e6e6e" stroke-opacity="0.165" stroke-width="20.0" stroke-linecap="round" stroke-linejoin="round"/><path d="M218.3 322.1 C221.2 319.9 229.6 311.8 236.0 308.8 C242.4 305.9 253.2 305.2 256.6 304.4" fill="none" stroke="#6e6e6e" stroke-opacity="0.165" stroke-width="16.25" stroke-linecap="round" stroke-linejoin="round"/><path d="M295.0 314.7 C297.9 313.3 305.8 305.9 312.7 305.9 C319.6 305.9 332.4 313.3 336.3 314.7" fill="none" stroke="#6e6e6e" stroke-opacity="0.165" stroke-width="16.25" stroke-linecap="round" stroke-linejoin="round"/><path d="M224.2 447.5 C227.6 450.4 238.9 457.8 244.8 465.2 C250.7 472.6 257.1 487.3 259.6 491.7" fill="none" stroke="#6e6e6e" stroke-opacity="0.165" stroke-width="17.5" stroke-linecap="round" stroke-linejoin="round"/><path d="M244.8 506.5 C250.7 510.9 267.0 527.4 280.2 533.0 C293.5 538.7 309.7 539.9 324.5 540.4 C339.2 540.9 361.4 536.7 368.7 536.0" fill="none" stroke="#6e6e6e" stroke-opacity="0.165" stroke-width="18.75" stroke-linecap="round" stroke-linejoin="round"/><path d="M305.9 308.8 L329.5 317.7" fill="none" stroke="#6e6e6e" stroke-opacity="0.165" stroke-width="17.5" stroke-linecap="round" stroke-linejoin="round"/><path d="M376.7 323.6 L397.3 338.3" fill="none" stroke="#6e6e6e" stroke-opacity="0.165" stroke-width="16.25" stroke-linecap="round" stroke-linejoin="round"/><path d="M300.0 370.8 C304.9 371.8 317.2 373.7 329.5 376.7 C341.8 379.6 366.4 386.5 373.7 388.5" fill="none" stroke="#6e6e6e" stroke-opacity="0.165" stroke-width="17.5" stroke-linecap="round" stroke-linejoin="round"/><path d="M367.8 418.0 C372.8 418.0 388.0 416.0 397.3 418.0 C406.7 420.0 419.5 427.8 423.9 429.8" fill="none" stroke="#6e6e6e" stroke-opacity="0.165" stroke-width="16.25" stroke-linecap="round" stroke-linejoin="round"/><path d="M359.0 444.5 C363.9 443.6 377.2 439.6 388.5 438.6 C399.8 437.7 414.1 438.6 426.8 438.6 C439.6 438.6 458.8 438.6 465.2 438.6" fill="none" stroke="#6e6e6e" stroke-opacity="0.165" stroke-width="18.75" stroke-linecap="round" stroke-linejoin="round"/><path d="M465.2 388.5 C471.1 387.3 491.7 379.2 500.6 381.1 C509.4 383.1 515.3 393.2 518.3 400.3 C521.2 407.4 520.3 417.0 518.3 423.9 C516.3 430.8 508.5 438.6 506.5 441.6" fill="none" stroke="#6e6e6e" stroke-opacity="0.165" stroke-width="18.75" stroke-linecap="round" stroke-linejoin="round"/><path d="M465.2 438.6 C465.2 435.2 463.7 425.4 465.2 418.0 C466.7 410.6 472.6 398.3 474.0 394.4" fill="none" stroke="#6e6e6e" stroke-opacity="0.165" stroke-width="16.25" stroke-linecap="round" stroke-linejoin="round"/><path d="M332.4 471.1 C334.9 477.0 338.8 499.6 347.2 506.5 C355.6 513.4 376.7 511.4 382.6 512.4" fill="none" stroke="#6e6e6e" stroke-opacity="0.165" stroke-width="17.5" stroke-linecap="round" stroke-linejoin="round"/><path d="M382.6 512.4 C390.5 510.4 414.1 504.0 429.8 500.6 C445.5 497.1 469.1 493.2 477.0 491.7" fill="none" stroke="#6e6e6e" stroke-opacity="0.165" stroke-width="18.75" stroke-linecap="round" stroke-linejoin="round"/><path d="M465.2 482.9 C468.1 479.9 475.0 466.2 482.9 465.2 C490.8 464.2 506.5 470.6 512.4 477.0 C518.3 483.4 520.3 495.2 518.3 503.5 C516.3 511.9 508.0 524.7 500.6 527.1 C493.2 529.6 478.5 519.8 474.0 518.3" fill="none" stroke="#6e6e6e" stroke-opacity="0.165" stroke-width="18.75" stroke-linecap="round" stroke-linejoin="round"/><path d="M344.2 544.8 L367.8 533.0" fill="none" stroke="#6e6e6e" stroke-opacity="0.165" stroke-width="16.25" stroke-linecap="round" stroke-linejoin="round"/><path d="M305.9 562.5 L311.8 571.4" fill="none" stroke="#6e6e6e" stroke-opacity="0.165" stroke-width="16.25" stroke-linecap="round" stroke-linejoin="round"/><path d="M326.4 155.3 C330.8 155.7 343.3 155.7 352.9 157.5 C362.5 159.4 378.7 164.9 383.9 166.4" fill="none" stroke="#6e6e6e" stroke-opacity="0.165" stroke-width="15.0" stroke-linecap="round" stroke-linejoin="round"/><path d="M370.6 219.5 C369.5 223.2 364.4 233.5 364.0 241.6 C363.6 249.7 367.7 263.7 368.4 268.1" fill="none" stroke="#6e6e6e" stroke-opacity="0.165" stroke-width="15.0" stroke-linecap="round" stroke-linejoin="round"/><path d="M432.6 206.2 C434.4 210.6 442.2 222.4 443.6 232.7 C445.1 243.1 441.8 262.2 441.4 268.1" fill="none" stroke="#6e6e6e" stroke-opacity="0.165" stroke-width="13.75" stroke-linecap="round" stroke-linejoin="round"/><path d="M291.0 268.1 C293.9 272.6 301.7 286.2 308.7 294.7 C315.7 303.2 329.0 315.0 333.0 319.0" fill="none" stroke="#6e6e6e" stroke-opacity="0.165" stroke-width="16.25" stroke-linecap="round" stroke-linejoin="round"/><path d="M216.9 421.8 C227.5 420.0 258.5 416.1 280.6 411.2 C302.8 406.3 334.2 397.0 349.7 392.6 C365.1 388.2 369.6 386.0 373.6 384.6" fill="none" stroke="#6e6e6e" stroke-opacity="0.165" stroke-width="20.0" stroke-linecap="round" stroke-linejoin="round"/><path d="M296.6 538.6 C307.2 537.3 336.4 537.7 360.3 530.6 C384.2 523.6 420.0 504.5 439.9 496.1 C459.8 487.7 473.1 482.9 479.7 480.2" fill="none" stroke="#6e6e6e" stroke-opacity="0.165" stroke-width="22.5" stroke-linecap="round" stroke-linejoin="round"/><path d="M349.7 490.8 C358.5 488.2 385.5 479.3 402.8 474.9 C420.0 470.5 444.8 466.0 453.2 464.3" fill="none" stroke="#6e6e6e" stroke-opacity="0.165" stroke-width="20.0" stroke-linecap="round" stroke-linejoin="round"/><path d="M360.3 416.5 C364.7 418.7 376.6 423.6 386.8 429.8 C397.0 436.0 415.6 449.7 421.3 453.7" fill="none" stroke="#6e6e6e" stroke-opacity="0.165" stroke-width="17.5" stroke-linecap="round" stroke-linejoin="round"/><path d="M349.7 474.9 C352.3 469.6 359.4 452.3 365.6 443.0 C371.8 433.7 383.3 423.1 386.8 419.1" fill="none" stroke="#6e6e6e" stroke-opacity="0.165" stroke-width="17.5" stroke-linecap="round" stroke-linejoin="round"/><path d="M439.9 384.6 C442.6 389.9 451.4 405.9 455.8 416.5 C460.3 427.1 464.7 443.0 466.5 448.4" fill="none" stroke="#6e6e6e" stroke-opacity="0.165" stroke-width="17.5" stroke-linecap="round" stroke-linejoin="round"/><path d="M211.6 336.9 C218.7 340.8 237.3 352.8 254.1 360.7 C270.9 368.7 302.8 380.7 312.5 384.6" fill="none" stroke="#6e6e6e" stroke-opacity="0.165" stroke-width="18.75" stroke-linecap="round" stroke-linejoin="round"/><path d="M216.9 315.6 C224.9 316.5 246.1 321.8 264.7 320.9 C283.3 320.0 317.8 312.1 328.4 310.3" fill="none" stroke="#6e6e6e" stroke-opacity="0.165" stroke-width="17.5" stroke-linecap="round" stroke-linejoin="round"/><path d="M232.9 453.7 C235.5 459.9 239.5 478.4 248.8 490.8 C258.1 503.2 273.6 519.1 288.6 528.0 C303.6 536.8 330.6 541.3 339.0 543.9" fill="none" stroke="#6e6e6e" stroke-opacity="0.165" stroke-width="18.75" stroke-linecap="round" stroke-linejoin="round"/><path d="M370.9 320.9 C373.6 323.6 381.5 335.1 386.8 336.9 C392.1 338.6 400.1 332.4 402.8 331.5" fill="none" stroke="#6e6e6e" stroke-opacity="0.165" stroke-width="16.25" stroke-linecap="round" stroke-linejoin="round"/><path d="M302.4 118.0 C296.2 125.9 277.0 147.5 265.5 165.2 C253.9 182.9 238.4 214.4 233.0 224.2 M236.0 193.2 C238.4 191.5 246.8 186.1 250.7 182.9 C254.7 179.7 258.1 175.5 259.6 174.0 M227.1 236.0 L236.0 238.9 M253.7 253.7 C256.6 253.2 266.2 252.9 271.4 250.7 C276.5 248.5 284.2 238.4 284.7 240.4 C285.2 242.4 277.5 255.4 274.3 262.5 C271.1 269.7 267.0 279.7 265.5 283.2 M35.4 271.4 C35.2 273.8 34.9 281.4 33.9 286.1 C32.9 290.9 30.2 297.7 29.5 300.0 M295.0 261.1 C297.9 264.7 307.8 276.7 312.7 283.2 C317.6 289.7 322.5 297.2 324.5 300.0 M359.9 259.6 C360.9 263.0 365.3 273.5 365.8 280.2 C366.3 287.0 363.3 296.7 362.8 300.0 M380.5 265.5 L377.6 300.0 M106.2 369.3 C99.3 374.0 77.2 385.8 64.9 397.3 C52.6 408.9 39.8 425.9 32.4 438.6 C25.1 451.4 22.6 468.1 20.6 474.0 M103.2 450.4 C107.2 444.1 114.6 421.4 126.8 412.1 C139.1 402.8 163.7 394.4 177.0 394.4 C190.3 394.4 200.6 404.2 206.5 412.1 C212.4 420.0 211.4 436.7 212.4 441.6 M67.8 516.8 L97.3 533.0 M123.9 538.9 C130.8 536.5 151.4 532.5 165.2 524.2 C179.0 515.8 199.6 494.7 206.5 488.8 M165.2 488.8 C169.1 486.8 181.9 480.9 188.8 477.0 C195.7 473.1 204.0 469.1 206.5 465.2 C208.9 461.3 204.0 455.4 203.5 453.4 M182.9 547.8 C186.8 550.7 200.1 557.1 206.5 565.5 C212.9 573.8 218.8 592.5 221.2 597.9 M156.3 562.5 C159.8 559.6 169.6 554.2 177.0 544.8 C184.4 535.5 193.7 519.8 200.6 506.5 C207.5 493.2 215.3 472.1 218.3 465.2 M253.7 350.1 C255.7 351.6 262.0 358.5 265.5 359.0 C268.9 359.5 271.4 351.1 274.3 353.1 C277.3 355.1 281.7 367.8 283.2 370.8 M262.5 308.8 C266.0 310.3 275.8 310.8 283.2 317.7 C290.6 324.6 296.0 340.8 306.8 350.1 C317.6 359.5 341.2 369.8 348.1 373.7 M215.3 488.8 C228.6 487.8 267.0 482.4 295.0 482.9 C323.0 483.4 368.7 490.3 383.5 491.7 M224.2 465.2 C229.1 469.1 241.9 483.9 253.7 488.8 C265.5 493.7 278.3 494.7 295.0 494.7 C311.7 494.7 336.5 487.8 354.0 488.8 C371.5 489.8 392.3 498.6 400.0 500.6 M218.3 482.9 C226.2 486.8 252.7 499.6 265.5 506.5 C278.3 513.4 290.1 521.2 295.0 524.2 M94.4 491.7 C96.4 491.2 102.3 491.2 106.2 488.8 C110.1 486.3 117.0 476.0 118.0 477.0 C119.0 478.0 115.5 490.3 112.1 494.7 C108.7 499.1 99.8 502.1 97.3 503.5 M103.2 482.9 C105.2 484.4 116.0 489.3 115.0 491.7 C114.1 494.2 100.3 496.7 97.3 497.6 M265.5 441.6 C266.5 445.5 270.6 458.8 271.4 465.2 C272.1 471.6 270.2 477.5 269.9 479.9 M280.2 459.3 L286.1 477.0 M300.9 465.2 C300.4 471.1 298.4 491.7 297.9 500.6 C297.4 509.4 297.9 515.3 297.9 518.3 M315.6 441.6 C316.6 445.5 322.0 458.3 321.5 465.2 C321.0 472.1 318.1 479.0 312.7 482.9 C307.3 486.8 293.0 487.8 289.1 488.8 M188.8 550.7 C191.7 552.2 201.6 555.2 206.5 559.6 C211.4 564.0 216.3 574.3 218.3 577.3 M333.3 338.3 C334.3 341.8 334.8 352.6 339.2 359.0 C343.7 365.4 356.4 373.7 359.9 376.7 M339.2 447.5 C344.6 445.0 361.6 435.7 371.7 432.7 C381.8 429.8 395.3 430.3 400.0 429.8 M373.7 300.0 C372.8 304.4 369.6 317.7 367.8 326.5 C366.1 335.4 364.2 348.7 363.4 353.1 M382.6 300.0 C381.6 304.9 382.6 318.7 376.7 329.5 C370.8 340.3 352.1 359.0 347.2 364.9 M453.4 305.9 C453.9 314.7 455.1 342.8 456.3 359.0 C457.6 375.2 460.0 395.9 460.8 403.2 M447.5 338.3 C446.0 344.2 441.1 362.9 438.6 373.7 C436.2 384.6 432.7 390.0 432.7 403.2 C432.7 416.5 437.7 445.0 438.6 453.4 M426.8 317.7 C425.4 322.1 422.9 334.4 418.0 344.2 C413.1 354.1 404.7 366.9 397.3 376.7 C390.0 386.5 377.7 398.8 373.7 403.2 M518.3 429.8 L521.2 438.6 M300.0 488.8 C305.9 489.3 323.1 489.3 335.4 491.7 C347.7 494.2 367.4 501.6 373.7 503.5 M329.5 506.5 C339.3 504.5 369.8 497.6 388.5 494.7 C407.2 491.7 432.7 489.8 441.6 488.8 M506.5 530.1 L515.3 518.3 M398.8 394.4 C399.1 393.4 399.1 390.0 400.3 388.5 C401.5 387.0 404.3 385.3 406.2 385.5 C408.1 385.8 410.8 387.8 411.5 390.0 C412.2 392.2 411.9 396.9 410.6 398.8 C409.3 400.8 405.8 402.5 403.8 401.8 C401.9 401.0 399.7 395.6 398.8 394.4 M403.8 393.8 C404.3 393.5 406.1 391.8 406.8 392.0 C407.5 392.2 407.8 394.5 408.0 395.0 M426.8 356.0 C427.3 359.0 427.8 368.8 429.8 373.7 C431.8 378.7 437.2 383.6 438.6 385.5 M335.4 450.4 C339.3 447.5 350.6 435.2 359.0 432.7 C367.4 430.3 381.1 435.2 385.5 435.7 M314.7 429.8 C315.7 432.7 319.2 442.1 320.6 447.5 C322.1 452.9 323.1 459.8 323.6 462.2 M323.6 397.3 C327.0 396.4 336.4 391.9 344.2 391.4 C352.1 391.0 366.4 393.9 370.8 394.4 M308.8 388.5 C310.3 392.4 315.2 405.7 317.7 412.1 C320.2 418.5 322.6 424.4 323.6 426.8 M418.0 438.6 L423.9 447.5 M530.1 465.2 C531.1 468.1 534.3 477.5 536.0 482.9 C537.7 488.3 539.7 495.2 540.4 497.6 M347.2 335.4 L359.0 367.8 M329.5 329.5 L341.3 353.1 M300.0 308.8 C302.9 313.3 310.3 326.1 317.7 335.4 C325.1 344.7 336.9 357.8 344.2 364.9 C351.6 372.0 359.0 376.0 361.9 378.2 M302.0 118.8 C298.7 122.7 289.1 134.1 282.1 142.0 C275.1 150.0 263.7 162.3 260.0 166.4 M275.5 100.0 L286.5 111.1 M260.0 252.7 C262.2 251.9 269.4 250.1 273.3 248.2 C277.1 246.4 283.2 239.0 283.2 241.6 C283.2 244.2 276.4 256.0 273.3 263.7 C270.1 271.5 265.9 284.0 264.4 288.1 M260.0 294.7 C262.2 297.3 269.6 305.1 273.3 310.2 C277.0 315.2 280.6 322.5 282.1 325.0 M459.1 197.3 C460.6 198.5 466.7 199.6 468.0 204.0 C469.3 208.4 467.2 217.6 466.9 223.9 C466.5 230.2 463.7 235.9 465.8 241.6 C467.8 247.3 476.8 255.4 479.0 258.2 M445.8 259.3 L465.8 257.1 M472.4 263.7 C469.1 267.0 455.1 277.0 452.5 283.6 C449.9 290.3 455.8 296.6 456.9 303.5 C458.0 310.4 458.7 321.4 459.1 325.0 M414.9 270.8 L428.1 268.6 M364.0 241.6 C365.8 247.5 374.7 263.3 375.0 277.0 C375.4 290.6 367.7 315.7 366.2 323.5 M359.6 243.8 C360.3 250.1 364.4 273.3 364.0 281.4 C363.6 289.5 358.5 290.6 357.3 292.5 M392.7 237.2 C392.4 243.8 392.7 262.6 390.5 277.0 C388.3 291.4 381.3 315.7 379.5 323.5 M383.9 263.7 C383.2 269.6 380.9 288.9 379.5 299.1 C378.0 309.3 375.8 320.7 375.0 325.0 M434.8 270.4 C434.2 275.1 432.6 290.0 431.5 299.1 C430.4 308.2 428.7 320.7 428.1 325.0 M452.5 210.6 C451.0 212.8 445.8 219.5 443.6 223.9 C441.4 228.3 439.9 235.0 439.2 237.2 M372.8 263.7 C373.9 263.9 377.3 265.2 379.5 264.8 C381.7 264.5 385.0 262.1 386.1 261.5 M370.6 215.0 C370.3 217.3 367.7 223.9 368.4 228.3 C369.1 232.7 373.9 239.4 375.0 241.6 M320.7 528.7 C327.0 526.9 345.5 522.3 358.6 517.9 C371.7 513.6 385.9 507.6 399.2 502.5 C412.6 497.4 427.2 491.3 438.7 487.4 C450.1 483.4 459.2 481.1 468.1 478.7 C477.1 476.2 484.4 474.6 492.4 472.5 C500.3 470.5 511.8 467.5 515.7 466.5 M417.9 488.9 C423.6 486.6 441.9 478.4 452.1 475.3 C462.3 472.2 470.4 471.1 479.1 470.3 C487.9 469.4 496.4 470.1 504.5 470.3 C512.5 470.5 523.5 471.2 527.4 471.3 M295.0 545.6 C299.8 544.6 312.5 542.8 323.7 540.0 C334.9 537.2 349.2 533.6 362.4 528.7 C375.5 523.8 389.6 516.8 402.6 510.6 C415.6 504.4 429.3 496.9 440.2 491.6 C451.1 486.3 459.6 482.4 468.2 478.8 C476.7 475.2 483.8 472.4 491.6 469.8 C499.4 467.2 510.9 464.2 514.8 463.1 M405.1 516.7 C411.5 513.9 432.1 504.2 443.2 499.8 C454.3 495.4 462.7 492.6 471.5 490.5 C480.4 488.4 488.2 487.8 496.4 487.1 C504.6 486.5 513.9 486.6 521.0 486.7 C528.1 486.7 535.9 487.3 538.9 487.5 M436.0 480.2 C440.8 477.8 456.1 470.8 464.5 466.0 C472.9 461.2 479.1 455.6 486.5 451.5 C494.0 447.4 502.5 443.5 509.1 441.4 C515.7 439.4 523.5 439.7 526.3 439.3 M427.9 513.6 C433.6 512.5 452.2 508.7 462.1 506.7 C472.1 504.7 479.6 503.6 487.7 501.5 C495.9 499.4 503.6 496.3 510.9 494.1 C518.3 491.8 528.2 489.1 531.7 488.1 M396.1 487.2 C400.0 485.9 411.9 482.1 419.5 479.6 C427.1 477.0 435.2 473.9 441.8 471.7 C448.4 469.4 454.0 467.5 459.2 465.9 C464.3 464.3 468.8 463.0 472.7 461.9 C476.6 460.9 480.9 459.9 482.5 459.5 M251.5 495.4 C254.0 496.9 261.4 501.1 266.7 504.8 C272.0 508.4 277.6 513.1 283.3 517.1 C289.0 521.1 294.8 525.5 301.2 528.8 C307.6 532.1 314.9 534.9 321.7 536.9 C328.5 538.9 336.2 540.0 341.9 540.8 C347.6 541.6 353.5 541.5 355.8 541.6 M236.5 490.4 C238.8 491.6 245.5 495.5 250.5 498.0 C255.5 500.5 260.7 503.0 266.5 505.4 C272.2 507.7 278.7 510.2 284.9 512.4 C291.2 514.6 297.4 516.6 304.0 518.4 C310.6 520.3 317.7 521.9 324.4 523.6 C331.0 525.3 338.6 527.1 344.0 528.9 C349.5 530.6 355.0 533.1 357.2 534.0 M251.9 470.5 C254.7 470.9 262.7 472.3 268.7 473.1 C274.7 473.8 281.5 474.4 287.9 475.1 C294.2 475.7 300.8 476.3 306.8 476.9 C312.7 477.6 317.6 478.1 323.5 479.2 C329.5 480.3 336.6 481.9 342.5 483.5 C348.5 485.1 356.6 487.8 359.4 488.7 M226.0 461.8 C227.8 462.6 233.0 464.7 237.2 466.3 C241.5 468.0 246.4 469.9 251.4 471.9 C256.3 473.8 261.4 475.7 266.9 477.9 C272.4 480.1 278.4 482.6 284.3 484.9 C290.2 487.1 296.3 489.5 302.1 491.5 C308.0 493.5 313.3 495.1 319.5 496.7 C325.7 498.3 333.1 499.8 339.3 501.1 C345.5 502.5 353.7 504.1 356.6 504.6 M217.4 502.1 C219.6 502.7 226.1 504.7 231.0 505.8 C235.9 506.9 241.4 507.1 246.8 508.6 C252.1 510.1 257.4 511.9 262.9 514.9 C268.4 517.9 274.1 522.4 280.0 526.5 C285.9 530.6 295.2 537.5 298.2 539.7 M248.1 504.9 C250.5 506.7 257.1 512.6 262.5 516.0 C267.9 519.4 274.1 522.9 280.5 525.2 C286.9 527.4 293.9 528.7 300.9 529.7 C308.0 530.7 315.8 530.5 322.8 531.3 C329.8 532.0 339.7 533.8 343.1 534.3 M277.8 489.9 C281.4 489.8 292.3 489.6 299.8 489.3 C307.2 489.0 314.7 488.2 322.4 487.9 C330.1 487.5 337.7 487.1 346.2 487.3 C354.7 487.5 365.1 488.4 373.6 489.2 C382.0 490.0 393.0 491.6 396.9 492.1 M278.1 496.2 C281.8 496.1 292.8 495.4 300.2 495.4 C307.6 495.3 314.9 495.6 322.3 496.1 C329.7 496.5 336.5 497.4 344.6 498.3 C352.7 499.1 362.6 500.6 370.9 501.4 C379.2 502.2 390.5 503.0 394.4 503.3 M256.7 480.2 C260.1 480.2 270.1 480.4 277.2 480.3 C284.2 480.2 291.5 479.7 299.1 479.6 C306.6 479.5 314.5 479.1 322.5 479.4 C330.5 479.8 338.4 480.5 347.1 481.7 C355.7 482.8 365.8 484.9 374.1 486.5 C382.5 488.1 393.3 490.3 397.2 491.1 M267.1 482.5 C270.6 482.4 280.7 481.8 288.0 481.5 C295.3 481.2 303.0 481.0 310.7 481.0 C318.4 481.0 325.9 481.0 334.3 481.5 C342.6 481.9 351.8 482.9 360.7 483.6 C369.5 484.3 379.8 485.3 387.4 485.6 C395.0 486.0 403.0 485.7 406.2 485.7 M211.6 494.4 C213.9 494.6 219.9 495.6 225.6 495.8 C231.4 496.0 239.0 496.2 245.9 495.8 C252.9 495.4 260.3 494.5 267.4 493.3 C274.5 492.2 281.3 490.2 288.6 488.9 C295.8 487.6 307.2 485.9 310.9 485.3 M251.5 415.5 C254.8 414.0 265.0 409.3 271.4 406.8 C277.7 404.3 283.5 402.4 289.6 400.5 C295.7 398.6 301.9 397.1 307.9 395.5 C313.9 393.8 322.5 391.5 325.4 390.7 M199.2 441.9 C200.9 441.1 205.0 438.8 209.1 437.1 C213.1 435.3 218.3 433.2 223.5 431.5 C228.7 429.7 234.7 427.9 240.3 426.5 C245.9 425.0 251.9 423.8 257.2 422.6 C262.5 421.4 269.7 419.8 272.2 419.3 M345.2 306.4 C346.2 308.1 349.1 312.4 351.3 316.4 C353.6 320.5 356.7 326.1 358.7 330.9 C360.6 335.6 362.9 340.5 363.1 344.9 C363.3 349.4 361.4 353.8 359.8 357.4 C358.3 361.1 355.0 364.6 353.7 366.6 C352.4 368.5 351.0 368.3 352.1 369.0 C353.1 369.7 358.8 370.5 360.2 370.8 M365.9 352.6 C365.3 355.0 363.5 363.8 362.8 366.7 C362.0 369.6 362.4 370.7 361.4 370.0 C360.3 369.3 355.4 363.5 356.4 362.5 C357.4 361.5 365.8 363.7 367.6 364.0 M351.0 347.4 C350.5 349.0 349.0 353.6 348.2 357.1 C347.4 360.5 345.3 365.4 346.2 368.2 C347.0 370.9 349.9 372.5 353.4 373.5 C357.0 374.5 362.8 373.8 367.6 373.9 C372.4 374.0 379.8 374.0 382.2 374.0 M361.4 330.2 C362.3 332.6 366.2 339.9 367.0 345.1 C367.7 350.2 366.7 356.6 365.7 360.9 C364.8 365.1 362.6 370.2 361.2 370.7 C359.9 371.1 358.3 364.8 357.7 363.6 M459.2 348.3 C459.5 351.6 460.2 361.1 460.7 367.9 C461.3 374.7 461.8 382.3 462.4 389.0 C463.0 395.8 463.7 403.0 464.3 408.7 C465.0 414.4 465.7 419.0 466.4 423.2 C467.1 427.3 467.9 430.5 468.7 433.4 C469.5 436.2 470.7 439.2 471.1 440.3 M459.6 310.5 C459.6 313.4 459.5 321.5 459.7 327.7 C459.9 334.0 460.1 341.5 460.7 348.2 C461.2 354.8 462.0 360.9 463.0 367.7 C464.1 374.4 465.6 381.8 467.0 388.5 C468.3 395.2 470.0 402.3 471.2 407.9 C472.4 413.5 473.8 419.9 474.3 422.3 M420.8 360.0 C420.3 363.6 419.0 375.2 417.9 381.7 C416.7 388.2 415.5 393.7 413.9 398.9 C412.3 404.1 410.7 408.6 408.3 412.7 C405.8 416.8 403.5 419.9 399.1 423.7 C394.7 427.4 388.3 431.2 381.6 435.2 C374.9 439.1 365.5 443.6 358.9 447.2 C352.3 450.8 345.0 455.1 342.2 456.6 M422.3 372.2 C421.8 375.4 420.1 385.5 419.0 391.5 C417.9 397.4 417.2 402.7 415.7 407.9 C414.1 413.0 412.9 417.6 409.9 422.5 C406.9 427.3 403.3 432.0 397.7 437.0 C392.1 441.9 383.4 447.5 376.4 452.1 C369.5 456.7 359.3 462.6 355.9 464.7 M416.4 381.3 C415.2 384.0 412.2 393.0 409.6 397.5 C406.9 402.1 403.6 405.7 400.5 408.6 C397.3 411.6 394.8 412.6 390.5 415.3 C386.3 418.0 377.5 423.2 374.9 424.7 M453.7 322.9 C453.5 325.8 453.0 333.1 452.4 340.1 C451.8 347.0 451.0 356.8 449.9 364.9 C448.9 373.1 447.4 381.8 446.0 388.9 C444.7 396.1 443.7 401.3 442.0 407.6 C440.2 413.9 438.8 420.3 435.6 426.8 C432.3 433.3 424.8 443.4 422.7 446.7 M433.4 362.1 C432.8 365.9 431.3 378.1 429.9 384.8 C428.6 391.5 427.3 396.9 425.4 402.5 C423.5 408.0 421.6 413.2 418.5 418.0 C415.4 422.8 412.1 427.0 406.9 431.3 C401.6 435.5 394.3 439.6 387.1 443.7 C379.8 447.7 370.2 452.0 363.4 455.4 C356.7 458.8 349.3 462.7 346.5 464.2 M372.6 434.5 C374.3 432.7 380.9 425.8 382.9 423.4 C385.0 420.9 384.2 417.1 384.9 419.9 C385.6 422.7 387.0 432.8 386.9 440.2 C386.8 447.6 386.8 458.8 384.3 464.4 C381.9 470.0 376.4 471.6 372.4 473.7 C368.5 475.8 362.7 476.3 360.7 476.9 M385.1 419.4 C385.3 420.7 386.5 421.5 386.5 427.2 C386.4 432.9 386.3 447.0 384.9 453.8 C383.4 460.5 381.2 464.7 377.8 467.7 C374.5 470.6 366.8 470.8 364.6 471.4 M341.6 444.3 C344.7 442.5 355.1 436.7 360.3 433.3 C365.6 429.9 369.3 427.2 373.0 423.9 C376.7 420.7 379.3 413.3 382.7 413.8 C386.0 414.3 391.5 420.0 393.1 426.9 C394.7 433.7 394.0 447.0 392.2 454.9 C390.4 462.8 386.6 470.2 382.2 474.2 C377.9 478.1 368.8 477.9 366.1 478.6 M482.9 395.9 C485.8 395.0 496.1 390.8 500.6 390.5 C505.2 390.2 507.4 391.0 510.1 394.0 C512.8 397.0 515.9 403.4 516.7 408.4 C517.6 413.4 517.2 419.3 515.3 423.8 C513.4 428.2 511.0 433.5 505.4 435.2 C499.9 436.8 485.9 433.8 482.0 433.5 M294.1 403.3 C296.0 404.9 302.0 409.0 305.2 412.6 C308.5 416.2 311.1 420.0 313.6 425.0 C316.1 430.0 318.1 437.0 320.0 442.6 C321.8 448.3 323.9 456.2 324.7 458.9 M271.8 393.0 C274.0 394.6 280.6 399.6 284.9 402.5 C289.1 405.4 293.7 407.6 297.3 410.5 C300.9 413.4 304.0 415.8 306.6 419.8 C309.1 423.9 310.9 429.3 312.4 434.8 C313.9 440.3 314.9 447.6 315.8 452.8 C316.7 458.0 317.5 463.9 317.8 466.1 M275.8 378.8 C277.4 380.7 282.0 386.6 285.6 390.0 C289.3 393.4 293.7 396.0 297.7 399.2 C301.8 402.3 306.3 405.0 309.9 408.9 C313.5 412.9 316.7 417.4 319.1 422.9 C321.5 428.4 323.4 438.5 324.2 441.7 M271.8 325.2 C273.9 327.3 279.8 333.7 284.1 337.4 C288.3 341.2 292.6 344.1 297.4 347.6 C302.2 351.1 307.7 354.8 312.8 358.2 C317.9 361.6 323.2 365.2 328.0 367.8 C332.7 370.4 336.7 372.6 341.2 373.9 C345.8 375.3 352.8 375.7 355.1 376.1 M290.4 342.8 C292.7 344.6 299.4 350.3 304.6 353.4 C309.8 356.5 316.4 359.2 321.7 361.4 C327.0 363.5 332.0 365.1 336.5 366.5 C341.0 367.9 346.6 369.1 348.7 369.6 M299.6 344.9 C301.8 347.0 308.6 353.5 313.3 357.5 C317.9 361.5 322.8 365.8 327.4 368.9 C332.0 371.9 336.3 374.3 340.9 375.8 C345.5 377.2 350.8 377.2 355.1 377.4 C359.5 377.5 365.0 376.6 366.9 376.4 M279.4 330.0 C281.5 331.9 287.2 337.8 291.6 341.4 C296.1 344.9 301.0 348.1 306.1 351.3 C311.1 354.6 317.0 358.1 322.1 360.7 C327.1 363.4 331.8 365.7 336.3 367.1 C340.7 368.5 344.5 368.9 348.7 369.3 C352.9 369.6 357.5 369.2 361.2 369.1 C364.9 369.0 369.3 368.7 370.9 368.7 M206.8 427.3 C207.7 430.0 210.2 437.5 211.9 443.4 C213.5 449.3 215.4 456.4 216.7 462.9 C218.1 469.4 219.4 476.2 219.9 482.3 C220.4 488.4 220.4 493.1 219.8 499.2 C219.1 505.2 217.4 512.4 216.1 518.5 C214.8 524.7 212.8 533.1 212.1 536.1 M203.8 398.6 C204.7 400.4 207.2 405.5 209.2 409.7 C211.2 413.9 214.0 418.8 215.8 424.0 C217.7 429.1 219.0 434.6 220.4 440.8 C221.7 446.9 223.3 457.7 223.8 461.0 M223.7 450.2 C224.2 453.7 225.7 464.5 226.4 471.3 C227.0 478.0 228.0 484.3 227.9 490.8 C227.7 497.3 226.8 504.0 225.5 510.4 C224.1 516.9 221.7 524.4 219.7 529.8 C217.6 535.2 214.5 540.7 213.4 542.9 M429.0 460.6 C433.0 459.6 445.2 456.4 453.5 454.8 C461.7 453.3 470.0 452.0 478.5 451.2 C487.0 450.4 496.8 448.8 504.5 450.0 C512.2 451.1 519.4 454.0 524.7 458.2 C530.0 462.4 534.0 468.7 536.4 475.1 C538.9 481.5 538.8 493.1 539.3 496.7 M504.6 449.6 C508.0 451.0 519.7 453.5 525.1 457.8 C530.4 462.0 534.2 468.5 536.6 475.0 C539.1 481.5 539.8 488.9 539.5 496.7 C539.2 504.4 535.6 517.3 534.8 521.5" fill="none" stroke="#8a8a8a" stroke-width="1.6099999999999999" stroke-linecap="round" stroke-linejoin="round"/><path d="M227.1 236.0 C230.1 240.9 238.4 255.2 244.8 265.5 C251.2 275.8 262.0 292.5 265.5 297.9 M20.6 300.0 C18.2 303.4 7.4 316.0 5.9 320.6 C4.4 325.3 2.9 326.0 11.8 328.0 C20.6 330.1 44.7 330.2 59.0 333.0 C73.3 335.8 87.5 340.5 97.3 344.8 C107.2 349.2 113.0 354.4 118.0 359.0 C123.0 363.6 125.9 370.1 127.4 372.3 M0.0 506.5 C1.5 496.7 1.5 463.2 8.8 447.5 C16.2 431.8 31.0 421.4 44.2 412.1 C57.5 402.8 72.3 396.9 88.5 391.4 C104.7 386.0 124.9 380.6 141.6 379.6 C158.3 378.7 174.0 381.1 188.8 385.5 C203.5 390.0 223.2 402.8 230.1 406.2 M103.2 382.6 C103.2 384.6 102.5 392.9 103.2 394.4 C104.0 395.9 106.9 391.9 107.7 391.4 M126.8 406.2 C133.2 403.7 152.4 391.9 165.2 391.4 C178.0 391.0 195.2 396.4 203.5 403.2 C211.9 410.1 214.8 421.4 215.3 432.7 C215.8 444.1 211.9 457.8 206.5 471.1 C201.1 484.4 190.8 497.6 182.9 512.4 C175.0 527.1 163.2 551.7 159.3 559.6 M177.0 412.1 C174.0 414.6 163.2 420.5 159.3 426.8 C155.4 433.2 152.4 447.5 153.4 450.4 C154.4 453.4 160.3 448.0 165.2 444.5 C170.1 441.1 175.0 432.7 182.9 429.8 C190.8 426.8 207.5 427.3 212.4 426.8 M188.8 453.4 C196.7 451.4 223.2 445.0 236.0 441.6 C248.8 438.2 253.2 436.7 265.5 432.7 C277.8 428.8 302.4 420.5 309.7 418.0 M0.0 482.9 C0.5 491.7 1.0 521.2 2.9 536.0 C4.9 550.7 7.4 561.1 11.8 571.4 C16.2 581.7 26.5 593.5 29.5 597.9 M70.8 509.4 C73.7 513.4 83.6 524.7 88.5 533.0 C93.4 541.4 96.6 550.0 100.3 559.6 C104.0 569.2 108.9 585.4 110.6 590.6 M129.8 536.0 C132.7 540.9 145.0 555.2 147.5 565.5 C150.0 575.8 145.0 592.5 144.5 597.9 M100.3 527.1 C108.2 525.2 132.7 521.7 147.5 515.3 C162.2 508.9 176.0 497.1 188.8 488.8 C201.6 480.4 218.3 469.1 224.2 465.2 M159.3 482.9 C167.2 481.4 188.8 473.1 206.5 474.0 C224.2 475.0 250.2 479.4 265.5 488.8 C280.7 498.1 285.6 524.2 297.9 530.1 C310.2 536.0 325.0 528.1 339.2 524.2 C353.5 520.3 376.1 509.4 383.5 506.5 M256.6 305.9 C257.1 312.8 253.2 333.4 259.6 347.2 C266.0 361.0 286.1 375.7 295.0 388.5 C303.8 401.3 307.8 412.1 312.7 423.9 C317.6 435.7 322.5 453.4 324.5 459.3 M295.0 541.9 C304.8 538.9 336.5 528.6 354.0 524.2 C371.5 519.8 392.3 516.8 400.0 515.3 M354.0 359.0 C358.4 360.5 372.9 367.4 380.5 367.8 C388.2 368.3 396.8 362.9 400.0 361.9 M324.5 503.5 C331.9 502.1 356.1 494.7 368.7 494.7 C381.3 494.7 394.8 502.1 400.0 503.5 M368.7 403.2 C370.7 405.2 379.1 411.6 380.5 415.0 C382.0 418.5 378.1 422.4 377.6 423.9 M367.8 300.0 C366.4 305.4 361.5 322.6 359.0 332.4 C356.5 342.3 350.6 352.6 353.1 359.0 C355.6 365.4 370.3 368.8 373.7 370.8 M459.3 300.0 C459.7 308.4 460.7 333.9 461.7 350.1 C462.6 366.4 463.6 384.1 465.2 397.3 C466.8 410.6 470.1 424.4 471.1 429.8 M518.3 412.1 C517.3 415.0 514.4 425.4 512.4 429.8 C510.4 434.2 510.4 437.4 506.5 438.6 C502.6 439.9 494.2 437.9 488.8 437.2 C483.4 436.4 476.5 434.7 474.0 434.2 M335.4 453.4 C346.7 454.4 379.6 459.5 403.2 459.3 C426.8 459.0 458.3 452.7 477.0 451.9 C495.7 451.2 508.9 454.4 515.3 454.9 M420.9 474.0 C432.7 472.6 473.5 464.7 491.7 465.2 C509.9 465.7 522.2 471.1 530.1 477.0 C538.0 482.9 539.4 491.7 538.9 500.6 C538.4 509.4 529.1 525.2 527.1 530.1 M300.0 530.1 C314.7 526.2 359.0 512.9 388.5 506.5 C418.0 500.1 462.2 494.2 477.0 491.7 M338.3 538.9 C351.6 533.5 392.9 513.9 418.0 506.5 C443.1 499.1 477.0 496.7 488.8 494.7 M326.5 503.5 C341.8 500.1 394.9 487.3 418.0 482.9 C441.1 478.5 457.3 478.0 465.2 477.0 M347.2 527.1 C354.1 525.7 374.2 522.2 388.5 518.3 C402.8 514.4 418.0 506.5 432.7 503.5 C447.5 500.6 469.6 501.1 477.0 500.6 M494.7 533.0 C496.7 530.6 503.0 522.7 506.5 518.3 C509.9 513.9 513.9 508.5 515.3 506.5 M418.0 359.0 C418.5 361.9 419.5 372.3 420.9 376.7 C422.4 381.1 424.1 383.3 426.8 385.5 C429.5 387.8 435.4 389.2 437.2 390.0 M300.0 338.3 C304.9 341.8 319.7 352.6 329.5 359.0 C339.3 365.4 354.1 373.7 359.0 376.7 M300.0 388.5 C304.9 388.0 317.7 383.1 329.5 385.5 C341.3 388.0 361.5 396.9 370.8 403.2 C380.1 409.6 382.6 415.5 385.5 423.9 C388.5 432.3 388.0 448.5 388.5 453.4 M367.8 404.7 C369.8 406.9 376.2 416.5 379.6 418.0 C383.1 419.5 386.5 416.0 388.5 413.6 C390.5 411.1 391.0 405.0 391.4 403.2 M471.1 435.7 C474.0 435.2 482.9 432.5 488.8 432.7 C494.7 433.0 503.5 436.4 506.5 437.2 M392.7 283.6 C394.6 285.1 399.4 290.4 403.8 292.5 C408.2 294.5 416.7 295.2 419.3 295.8 M390.5 305.8 C392.4 307.4 397.9 313.7 401.6 315.7 C405.3 317.7 410.8 317.6 412.7 317.9 M381.7 519.8 C388.6 516.8 410.5 506.4 423.1 501.8 C435.8 497.3 447.3 494.4 457.6 492.6 C467.9 490.8 476.2 491.6 484.9 491.1 C493.5 490.5 505.5 489.5 509.6 489.1 M380.8 517.7 C387.6 514.4 409.1 503.4 421.4 497.5 C433.6 491.6 444.5 486.1 454.3 482.2 C464.1 478.3 471.9 476.3 480.2 474.1 C488.5 471.9 496.6 470.7 504.2 469.2 C511.8 467.8 522.2 466.1 525.8 465.5 M427.2 512.0 C432.7 510.1 450.4 503.6 460.2 500.7 C470.0 497.9 477.7 496.8 485.9 494.9 C494.2 493.0 502.2 491.3 509.7 489.4 C517.1 487.6 527.1 484.7 530.6 483.8 M344.4 511.6 C348.0 511.2 358.6 510.0 366.1 508.9 C373.5 507.8 381.3 506.6 389.1 505.0 C396.8 503.4 404.7 501.3 412.6 499.1 C420.5 496.9 429.3 494.2 436.6 492.0 C444.0 489.8 450.9 487.7 456.7 486.0 C462.6 484.2 467.4 482.9 471.9 481.7 C476.3 480.4 480.3 479.3 483.5 478.5 C486.8 477.6 490.1 476.7 491.4 476.4 M389.1 505.3 C393.1 504.4 405.0 502.3 413.0 500.2 C421.0 498.2 429.7 495.3 437.0 493.0 C444.3 490.6 451.0 488.1 456.8 486.2 C462.6 484.2 467.3 482.5 471.7 481.2 C476.1 479.8 480.1 478.7 483.4 478.1 C486.7 477.4 490.3 477.4 491.7 477.3 M209.9 440.0 C212.4 439.4 219.5 437.7 224.8 436.3 C230.2 435.0 236.2 433.4 241.9 431.9 C247.5 430.4 253.3 428.8 258.5 427.4 C263.8 425.9 268.3 424.5 273.4 423.0 C278.4 421.5 283.8 419.9 289.0 418.3 C294.2 416.8 299.6 415.1 304.4 413.7 C309.2 412.3 313.9 410.9 317.8 409.8 C321.6 408.8 325.7 407.8 327.2 407.4 M211.2 444.9 C213.7 444.1 220.7 442.0 226.0 440.4 C231.3 438.9 237.3 437.1 242.9 435.5 C248.5 433.9 254.3 432.3 259.5 430.8 C264.8 429.3 269.3 428.0 274.4 426.6 C279.5 425.1 284.9 423.6 290.1 422.0 C295.3 420.5 300.8 418.9 305.5 417.4 C310.3 416.0 316.6 414.0 318.8 413.3 M367.1 328.6 C367.2 331.4 368.4 340.1 367.5 345.1 C366.5 350.0 363.5 354.7 361.4 358.4 C359.4 362.1 356.4 365.8 355.1 367.3 C353.7 368.8 352.7 367.3 353.6 367.6 C354.4 367.8 356.7 368.4 360.3 368.8 C363.9 369.1 372.8 369.7 375.3 369.9 M464.7 378.0 C465.2 381.5 466.8 392.5 467.6 398.8 C468.4 405.2 468.9 411.2 469.3 416.2 C469.8 421.1 470.0 424.9 470.3 428.4 C470.7 431.9 471.1 434.7 471.5 437.1 C472.0 439.4 472.9 441.7 473.2 442.6 M468.7 398.9 C472.6 397.0 485.8 389.6 492.3 387.6 C498.7 385.6 503.2 385.3 507.6 387.0 C511.9 388.7 515.9 392.9 518.4 397.9 C520.8 402.8 523.0 410.7 522.5 416.7 C521.9 422.8 519.8 430.3 515.2 434.4 C510.7 438.5 498.3 440.1 495.0 441.2 M483.0 509.1 C483.9 507.9 486.7 504.3 488.5 502.1 C490.2 499.8 492.1 497.5 493.6 495.6 C495.1 493.7 496.3 492.3 497.6 490.7 C498.8 489.1 500.0 487.7 501.0 486.2 C502.1 484.8 503.1 483.4 504.0 482.2 C504.8 480.9 505.9 479.3 506.3 478.8 M481.5 496.5 C482.5 495.5 485.5 492.2 487.2 490.5 C488.9 488.7 490.4 487.4 492.0 486.1 C493.5 484.7 495.0 483.5 496.4 482.4 C497.8 481.2 499.2 480.2 500.4 479.2 C501.6 478.2 502.7 477.3 503.7 476.6 C504.6 475.8 505.6 475.0 506.0 474.6 M255.3 365.5 C256.7 367.6 260.9 374.0 263.9 378.3 C266.8 382.7 269.9 387.5 273.2 391.7 C276.6 395.9 280.6 399.8 284.1 403.5 C287.6 407.1 291.5 410.2 294.4 413.4 C297.3 416.7 300.1 421.2 301.3 422.8 M466.2 454.1 C470.5 453.6 483.5 451.3 491.7 451.1 C500.0 451.0 509.0 450.5 515.5 453.1 C522.0 455.7 527.2 461.2 530.8 466.6 C534.3 471.9 535.9 482.2 536.9 485.3" fill="none" stroke="#8a8a8a" stroke-width="2.3" stroke-linecap="round" stroke-linejoin="round"/><path d="M0.0 46.6 C6.1 44.2 20.2 35.5 36.9 32.4 C53.6 29.4 73.0 24.8 100.3 28.0 C127.6 31.2 175.5 44.7 200.6 51.6 C225.7 58.5 238.9 63.2 250.7 69.3 C262.5 75.5 265.6 81.5 271.4 88.5 C277.2 95.5 283.2 107.7 285.5 111.5 M10.3 163.7 C14.0 166.9 27.3 175.8 32.4 182.9 C37.6 190.0 41.3 196.7 41.3 206.5 C41.3 216.3 36.4 231.8 32.4 241.9 C28.5 252.0 20.2 262.8 17.7 267.0 M230.1 423.9 C238.4 420.5 264.5 409.1 280.2 403.2 C296.0 397.3 309.2 390.0 324.5 388.5 C339.7 387.0 363.8 393.4 371.7 394.4 M460.8 403.8 C464.5 402.3 475.8 397.2 482.9 394.4 C490.0 391.6 498.6 386.5 503.5 387.0 C508.5 387.5 509.9 393.2 512.4 397.3 C514.8 401.5 517.3 409.6 518.3 412.1 M512.4 397.3 L521.2 418.0 M491.7 474.0 C493.7 477.0 500.1 486.3 503.5 491.7 C507.0 497.1 510.9 504.0 512.4 506.5 M506.5 545.4 L538.9 531.6 M359.0 521.2 C365.4 518.8 382.6 512.9 397.3 506.5 C412.1 500.1 439.1 486.8 447.5 482.9 M409.1 503.5 C415.5 502.1 435.2 496.7 447.5 494.7 C459.8 492.7 477.0 492.2 482.9 491.7 M471.1 518.3 C474.0 515.8 482.9 508.5 488.8 503.5 C494.7 498.6 503.5 491.2 506.5 488.8 M397.3 314.7 C398.3 315.3 400.8 318.0 403.2 318.3 C405.7 318.5 410.6 316.6 412.1 316.2 M364.9 373.7 C368.3 373.0 381.1 370.6 385.5 369.3 C390.0 368.1 390.5 366.9 391.4 366.4 M343.0 502.4 C346.5 501.7 357.0 500.1 364.1 498.3 C371.3 496.6 378.5 494.4 385.7 491.8 C392.9 489.2 400.0 485.9 407.4 482.8 C414.8 479.7 426.5 474.8 430.3 473.2 M271.0 405.7 C274.0 404.6 283.2 401.4 289.3 399.3 C295.3 397.1 301.3 394.8 307.2 392.6 C313.1 390.5 318.9 388.3 324.4 386.5 C329.9 384.7 337.6 382.7 340.3 382.0 M233.9 421.3 C236.8 420.3 245.1 417.4 251.5 415.5 C257.9 413.5 265.7 411.2 272.3 409.6 C278.9 408.0 284.8 406.9 291.0 405.7 C297.3 404.6 303.6 403.6 309.6 402.5 C315.7 401.4 324.4 399.7 327.3 399.2 M474.8 519.8 C475.5 519.2 477.2 517.5 478.8 515.9 C480.3 514.2 482.2 512.0 484.1 509.9 C486.0 507.8 488.1 505.4 489.9 503.2 C491.8 501.1 493.8 498.9 495.5 497.2 C497.2 495.4 498.6 494.1 500.0 492.7 C501.5 491.4 503.0 490.1 504.4 489.0 C505.8 487.9 507.2 486.9 508.5 486.0 C509.8 485.1 511.5 484.0 512.1 483.6" fill="none" stroke="#8a8a8a" stroke-width="3.2199999999999998" stroke-linecap="round" stroke-linejoin="round"/><path d="M292.1 186.0 L329.7 177.1 L323.8 163.9 L331.9 158.0 L393.1 160.2 L450.6 164.6 L461.2 175.7 L450.6 199.3 L428.5 204.4 L439.6 219.9 L440.3 233.2 L406.4 241.3 L393.1 230.2 L376.9 225.1 L309.0 237.6 L289.1 193.4 Z" fill="#7c7c7c" fill-opacity=".3"/><path d="M331.9 158.3 L393.1 160.2 L430.0 165.6 L419.6 174.5 L382.8 173.0 L357.7 178.6 L348.1 171.2 Z" fill="#6c6c6c" fill-opacity=".2"/><path d="M348.8 154.3 L354.7 143.2 L361.4 147.6 L366.5 149.1 L375.4 139.5 L387.2 134.4 L393.8 132.9 L390.1 138.8 L394.6 144.7 L399.0 146.9 L402.7 145.4 L404.2 149.1 L413.7 147.6 L422.6 147.6 L431.4 150.6 L439.6 145.9 L441.0 153.5 L444.7 156.5 L453.6 145.0 L454.3 158.7 L458.0 155.8 L461.7 163.9 L461.2 175.7 L456.5 188.9 L450.6 199.3 L428.5 204.4 L413.7 196.3" fill="none" stroke="#0c0c0c" stroke-width="1.9549999999999998" stroke-linecap="round" stroke-linejoin="round"/><path d="M331.9 158.3 C335.7 158.1 347.5 156.9 354.7 157.2 C362.0 157.6 369.0 159.7 375.4 160.2 C381.8 160.7 386.7 160.1 393.1 160.2 C399.5 160.3 407.6 159.7 413.7 160.6 C419.9 161.5 425.1 164.6 430.0 165.6 C434.9 166.7 439.8 167.3 443.2 167.1 C446.7 166.9 449.4 165.0 450.6 164.6" fill="none" stroke="#0c0c0c" stroke-width="1.9549999999999998" stroke-linecap="round" stroke-linejoin="round"/><path d="M331.9 158.3 C330.8 159.0 326.8 161.2 325.2 162.4 C323.7 163.6 323.0 164.2 322.6 165.6 C322.2 167.1 322.1 169.8 323.0 171.2 C324.0 172.7 327.3 173.7 328.2 174.2" fill="none" stroke="#0c0c0c" stroke-width="1.8399999999999999" stroke-linecap="round" stroke-linejoin="round"/><path d="M323.0 165.6 C324.6 165.5 329.1 164.6 332.6 164.8 C336.2 165.0 340.6 165.8 344.4 166.8 C348.2 167.8 353.6 170.0 355.5 170.7" fill="none" stroke="#0c0c0c" stroke-width="3.4499999999999997" stroke-linecap="round" stroke-linejoin="round"/><path d="M292.1 186.0 C293.4 185.6 297.1 184.5 300.2 183.8 C303.2 183.0 307.3 182.3 310.5 181.6 C313.7 180.8 316.2 180.1 319.3 179.4 C322.5 178.6 328.0 177.5 329.7 177.1" fill="none" stroke="#0c0c0c" stroke-width="1.9549999999999998" stroke-linecap="round" stroke-linejoin="round"/><path d="M292.1 186.0 C291.6 187.2 289.5 190.4 289.1 193.4 C288.7 196.3 288.9 200.3 289.8 203.7 C290.8 207.1 293.5 211.1 295.0 214.0 C296.5 217.0 297.3 218.9 298.7 221.4 C300.1 223.9 301.4 226.1 303.1 228.8 C304.8 231.5 308.0 236.1 309.0 237.6" fill="none" stroke="#0c0c0c" stroke-width="2.1849999999999996" stroke-linecap="round" stroke-linejoin="round"/><path d="M309.0 237.6 C311.7 237.1 318.1 236.1 325.2 234.7 C332.4 233.2 343.2 230.4 351.8 228.8 C360.4 227.2 372.0 227.8 376.9 225.1 C381.8 222.4 379.1 213.8 381.3 212.5 C383.5 211.2 388.1 215.7 390.1 217.3 C392.2 218.8 392.8 221.0 393.4 221.7" fill="none" stroke="#0c0c0c" stroke-width="2.1849999999999996" stroke-linecap="round" stroke-linejoin="round"/><path d="M295.7 212.5 C298.2 212.4 305.8 211.4 310.5 211.7 C315.2 211.9 319.8 213.9 323.8 214.0 C327.8 214.1 333.1 211.0 334.4 212.3 C335.7 213.5 333.4 219.2 331.4 221.4 C329.5 223.6 326.1 224.2 322.6 225.2 C319.1 226.3 313.7 227.0 310.5 227.6 C307.3 228.2 304.4 228.8 303.1 229.1" fill="none" stroke="#0c0c0c" stroke-width="1.8399999999999999" stroke-linecap="round" stroke-linejoin="round"/><path d="M303.1 215.5 L307.0 223.2 L310.5 214.0 L314.9 221.7 L318.8 215.5 L323.2 221.7 L327.0 217.0 L331.4 215.5" fill="none" stroke="#0c0c0c" stroke-width="1.6099999999999999" stroke-linecap="round" stroke-linejoin="round"/><path d="M300.2 183.8 L303.1 191.9 L290.1 196.3" fill="none" stroke="#0c0c0c" stroke-width="1.7249999999999999" stroke-linecap="round" stroke-linejoin="round"/><path d="M312.7 181.9 L315.8 190.4 L303.1 191.9" fill="none" stroke="#0c0c0c" stroke-width="1.7249999999999999" stroke-linecap="round" stroke-linejoin="round"/><path d="M315.8 190.4 L329.7 188.2" fill="none" stroke="#0c0c0c" stroke-width="1.6099999999999999" stroke-linecap="round" stroke-linejoin="round"/><path d="M290.1 196.3 C291.1 196.6 294.3 196.8 295.7 197.8 C297.2 198.8 298.7 200.7 298.7 202.2 C298.7 203.7 296.2 205.9 295.7 206.6" fill="none" stroke="#0c0c0c" stroke-width="1.4949999999999999" stroke-linecap="round" stroke-linejoin="round"/><path d="M295.7 221.4 L301.6 218.4 L305.3 224.3" fill="none" stroke="#0c0c0c" stroke-width="1.4949999999999999" stroke-linecap="round" stroke-linejoin="round"/><path d="M335.9 180.1 C336.2 179.4 336.6 176.6 337.8 175.7 C339.0 174.7 341.2 174.1 342.9 174.5 C344.7 174.9 347.0 176.2 348.1 177.9 C349.2 179.6 349.8 182.6 349.6 184.5 C349.3 186.5 348.1 188.7 346.6 189.7 C345.2 190.7 342.5 191.2 340.7 190.7 C339.0 190.2 337.0 187.4 336.3 186.7 Z" fill="none" stroke="#0c0c0c" stroke-width="1.8399999999999999" stroke-linecap="round" stroke-linejoin="round"/><path d="M340.3 177.1 C340.4 178.9 340.3 186.2 341.2 187.8 C342.1 189.3 344.7 188.3 345.6 186.6 C346.5 184.9 346.3 179.0 346.5 177.4 Z" fill="none" stroke="#0c0c0c" stroke-width="1.7249999999999999" stroke-linecap="round" stroke-linejoin="round"/><path d="M332.6 175.7 C332.5 177.1 331.5 181.8 331.9 184.5 C332.3 187.2 333.0 190.3 334.8 191.9 C336.7 193.5 341.6 193.7 342.9 194.1" fill="none" stroke="#0c0c0c" stroke-width="1.6099999999999999" stroke-linecap="round" stroke-linejoin="round"/><path d="M310.5 198.5 C311.5 198.5 315.8 197.0 316.4 198.1 C317.0 199.1 315.0 203.9 314.2 204.9 C313.4 205.9 312.1 204.1 311.7 204.0 Z" fill="none" stroke="#0c0c0c" stroke-width="1.8399999999999999" stroke-linecap="round" stroke-linejoin="round"/><path d="M321.6 199.3 C323.0 199.3 329.3 198.5 330.4 199.6 C331.6 200.7 329.8 205.0 328.5 205.9 C327.2 206.8 323.6 205.3 322.6 205.2 Z" fill="none" stroke="#0c0c0c" stroke-width="1.8399999999999999" stroke-linecap="round" stroke-linejoin="round"/><path d="M337.8 199.3 C339.4 199.1 345.6 197.8 347.4 198.5 C349.2 199.3 349.9 202.6 348.6 203.7 C347.2 204.8 340.8 204.9 339.3 205.2 Z" fill="none" stroke="#0c0c0c" stroke-width="1.8399999999999999" stroke-linecap="round" stroke-linejoin="round"/><path d="M353.3 193.4 C354.3 193.2 357.9 191.7 359.2 192.6 C360.4 193.6 361.4 197.8 360.6 199.3 C359.9 200.7 355.7 201.1 354.7 201.5 Z" fill="none" stroke="#0c0c0c" stroke-width="1.8399999999999999" stroke-linecap="round" stroke-linejoin="round"/><path d="M363.6 191.9 C364.7 191.8 369.3 190.7 370.2 191.6 C371.2 192.5 370.0 196.5 369.2 197.5 C368.4 198.5 366.0 197.7 365.4 197.8 Z" fill="none" stroke="#0c0c0c" stroke-width="1.8399999999999999" stroke-linecap="round" stroke-linejoin="round"/><path d="M363.6 209.0 C364.6 208.5 367.0 206.3 369.5 206.1 C372.0 205.8 375.4 207.9 378.3 207.5 C381.3 207.1 385.0 205.1 387.2 203.7 C389.4 202.3 390.6 200.0 391.3 199.3" fill="none" stroke="#0c0c0c" stroke-width="1.9549999999999998" stroke-linecap="round" stroke-linejoin="round"/><path d="M393.4 230.5 L413.7 221.7 L439.6 220.2 L440.6 233.5 L422.9 237.0 L406.7 241.5 Z" fill="none" stroke="#0c0c0c" stroke-width="2.07" stroke-linecap="round" stroke-linejoin="round"/><path d="M401.9 228.8 C402.9 229.1 406.1 231.0 407.8 230.5 C409.6 230.0 411.8 226.6 412.6 225.8" fill="none" stroke="#0c0c0c" stroke-width="1.8399999999999999" stroke-linecap="round" stroke-linejoin="round"/><path d="M410.8 233.5 L419.9 228.8" fill="none" stroke="#0c0c0c" stroke-width="1.6099999999999999" stroke-linecap="round" stroke-linejoin="round"/><path d="M422.6 230.2 L431.4 228.8" fill="none" stroke="#0c0c0c" stroke-width="1.38" stroke-linecap="round" stroke-linejoin="round"/><path d="M427.0 234.7 L435.9 224.3" fill="none" stroke="#0c0c0c" stroke-width="1.38" stroke-linecap="round" stroke-linejoin="round"/><path d="M403.4 186.0 C404.6 185.1 407.6 181.5 410.8 180.4 C414.0 179.3 418.4 178.9 422.6 179.4 C426.8 179.8 432.2 181.2 435.9 183.0 C439.6 184.9 442.9 188.2 444.7 190.4 C446.5 192.6 448.2 195.8 446.5 196.3 C444.8 196.9 438.9 194.8 434.4 193.7 C429.9 192.5 422.1 190.0 419.6 189.2 Z" fill="none" stroke="#0c0c0c" stroke-width="1.7249999999999999" stroke-linecap="round" stroke-linejoin="round"/><path d="M406.4 185.3 C408.8 185.2 416.0 184.0 421.1 184.8 C426.3 185.7 433.4 188.7 437.3 190.4 C441.3 192.1 443.5 194.4 444.7 195.1" fill="none" stroke="#0c0c0c" stroke-width="1.38" stroke-linecap="round" stroke-linejoin="round"/><path d="M422.6 180.1 L426.3 185.3" fill="none" stroke="#0c0c0c" stroke-width="1.265" stroke-linecap="round" stroke-linejoin="round"/><path d="M430.0 181.9 L432.9 187.5" fill="none" stroke="#0c0c0c" stroke-width="1.265" stroke-linecap="round" stroke-linejoin="round"/><path d="M437.3 184.8 L438.8 190.4" fill="none" stroke="#0c0c0c" stroke-width="1.265" stroke-linecap="round" stroke-linejoin="round"/><path d="M399.0 193.4 C401.0 193.9 407.4 194.4 410.8 196.3 C414.2 198.3 417.6 202.0 419.6 205.2 C421.7 208.4 423.9 214.0 422.9 215.5 C421.9 217.0 417.0 216.0 413.7 214.0 C410.5 212.1 405.1 205.4 403.4 203.7 Z" fill="none" stroke="#0c0c0c" stroke-width="1.7249999999999999" stroke-linecap="round" stroke-linejoin="round"/><path d="M401.2 195.1 C402.8 196.6 407.5 200.5 410.8 203.7 C414.1 206.8 419.4 212.3 421.1 214.0" fill="none" stroke="#0c0c0c" stroke-width="1.38" stroke-linecap="round" stroke-linejoin="round"/><path d="M406.4 197.8 L405.6 203.7" fill="none" stroke="#0c0c0c" stroke-width="1.265" stroke-linecap="round" stroke-linejoin="round"/><path d="M412.3 200.7 L410.8 208.1" fill="none" stroke="#0c0c0c" stroke-width="1.265" stroke-linecap="round" stroke-linejoin="round"/><path d="M417.4 206.6 L416.0 213.3" fill="none" stroke="#0c0c0c" stroke-width="1.265" stroke-linecap="round" stroke-linejoin="round"/><path d="M390.1 186.0 C390.6 187.7 391.1 192.9 393.1 196.3 C395.1 199.8 398.5 203.5 401.9 206.6 C405.4 209.8 410.3 213.0 413.7 215.5 C417.2 218.0 421.1 220.4 422.6 221.4" fill="none" stroke="#0c0c0c" stroke-width="1.7249999999999999" stroke-linecap="round" stroke-linejoin="round"/><path d="M393.7 187.8 L389.6 188.7 L391.8 191.9 L388.2 190.0 L387.2 193.6 L386.2 190.0 L382.6 191.9 L384.7 188.7 L380.7 187.8 L384.7 186.9 L382.6 183.6 L386.2 185.6 L387.2 181.9 L388.2 185.6 L391.8 183.6 L389.6 186.9 Z" fill="none" stroke="#0c0c0c" stroke-width="1.265" stroke-linecap="round" stroke-linejoin="round"/><path d="M385.4 186.7 C386.0 186.6 388.0 185.6 388.7 186.0 C389.3 186.4 389.8 188.6 389.4 189.2 C389.0 189.9 386.6 189.6 386.0 189.7 Z" fill="none" stroke="#0c0c0c" stroke-width="1.4949999999999999" stroke-linecap="round" stroke-linejoin="round"/><path d="M378.3 185.3 L382.8 183.0 L384.2 178.6" fill="none" stroke="#0c0c0c" stroke-width="1.15" stroke-linecap="round" stroke-linejoin="round"/><path d="M393.1 183.0 L399.0 181.9 L401.2 179.4" fill="none" stroke="#0c0c0c" stroke-width="1.15" stroke-linecap="round" stroke-linejoin="round"/><path d="M408.6 264.9 C408.4 262.8 406.7 255.7 407.5 252.4 C408.4 249.1 411.5 246.5 413.7 245.0 C416.0 243.5 419.8 242.3 421.1 243.5 C422.5 244.7 422.6 249.4 421.9 252.4 C421.1 255.3 417.6 259.7 416.7 261.2 Z" fill="none" stroke="#0c0c0c" stroke-width="1.7249999999999999" stroke-linecap="round" stroke-linejoin="round"/><path d="M424.8 264.9 C424.4 263.1 422.2 257.4 422.6 253.8 C423.0 250.3 425.3 245.8 427.0 243.8 C428.7 241.8 431.4 241.1 432.9 242.0 C434.4 243.0 436.1 246.8 435.9 249.7 C435.6 252.7 432.2 258.1 431.4 259.7 Z" fill="none" stroke="#0c0c0c" stroke-width="1.7249999999999999" stroke-linecap="round" stroke-linejoin="round"/><path d="M409.3 263.4 L420.4 245.0" fill="none" stroke="#0c0c0c" stroke-width="1.265" stroke-linecap="round" stroke-linejoin="round"/><path d="M425.5 263.4 L432.2 243.5" fill="none" stroke="#0c0c0c" stroke-width="1.265" stroke-linecap="round" stroke-linejoin="round"/><path d="M408.8 256.2 L412.1 258.8 L416.2 259.1" fill="none" stroke="#0c0c0c" stroke-width="1.035" stroke-linecap="round" stroke-linejoin="round"/><path d="M424.5 255.2 L427.2 258.5 L430.7 257.6" fill="none" stroke="#0c0c0c" stroke-width="1.035" stroke-linecap="round" stroke-linejoin="round"/><path d="M411.1 252.5 L414.3 255.1 L418.4 255.4" fill="none" stroke="#0c0c0c" stroke-width="1.035" stroke-linecap="round" stroke-linejoin="round"/><path d="M425.9 251.2 L428.5 254.5 L432.1 253.6" fill="none" stroke="#0c0c0c" stroke-width="1.035" stroke-linecap="round" stroke-linejoin="round"/><path d="M413.3 248.8 L416.5 251.4 L420.6 251.7" fill="none" stroke="#0c0c0c" stroke-width="1.035" stroke-linecap="round" stroke-linejoin="round"/><path d="M427.2 247.2 L429.9 250.5 L433.4 249.6" fill="none" stroke="#0c0c0c" stroke-width="1.035" stroke-linecap="round" stroke-linejoin="round"/><path d="M422.9 236.4 L419.6 243.8" fill="none" stroke="#0c0c0c" stroke-width="1.4949999999999999" stroke-linecap="round" stroke-linejoin="round"/><path d="M428.8 237.0 L430.0 242.9" fill="none" stroke="#0c0c0c" stroke-width="1.4949999999999999" stroke-linecap="round" stroke-linejoin="round"/><path d="M350.3 158.3 L348.1 171.2" fill="none" stroke="#0c0c0c" stroke-width="1.8399999999999999" stroke-linecap="round" stroke-linejoin="round"/><path d="M348.1 171.2 L357.7 178.6" fill="none" stroke="#0c0c0c" stroke-width="1.8399999999999999" stroke-linecap="round" stroke-linejoin="round"/><path d="M363.6 159.7 L363.6 173.0" fill="none" stroke="#0c0c0c" stroke-width="1.8399999999999999" stroke-linecap="round" stroke-linejoin="round"/><path d="M378.3 161.2 L369.5 174.5" fill="none" stroke="#0c0c0c" stroke-width="1.8399999999999999" stroke-linecap="round" stroke-linejoin="round"/><path d="M393.1 162.4 L382.8 173.0" fill="none" stroke="#0c0c0c" stroke-width="1.8399999999999999" stroke-linecap="round" stroke-linejoin="round"/><path d="M413.7 162.7 L401.9 174.5" fill="none" stroke="#0c0c0c" stroke-width="1.8399999999999999" stroke-linecap="round" stroke-linejoin="round"/><path d="M428.5 166.5 L419.6 174.5" fill="none" stroke="#0c0c0c" stroke-width="1.8399999999999999" stroke-linecap="round" stroke-linejoin="round"/><path d="M331.9 162.4 L350.3 161.8" fill="none" stroke="#0c0c0c" stroke-width="1.4949999999999999" stroke-linecap="round" stroke-linejoin="round"/><path d="M357.7 178.6 C359.7 177.9 365.3 175.4 369.5 174.5 C373.7 173.6 379.3 172.8 382.8 173.0 C386.2 173.2 388.9 175.2 390.1 175.7" fill="none" stroke="#0c0c0c" stroke-width="1.4949999999999999" stroke-linecap="round" stroke-linejoin="round"/><path d="M381.3 162.4 C382.3 164.9 385.7 173.2 387.2 177.1 C388.7 181.1 389.9 184.8 390.4 186.3" fill="none" stroke="#0c0c0c" stroke-width="1.4949999999999999" stroke-linecap="round" stroke-linejoin="round"/><path d="M310.5 169.8 L316.4 171.5" fill="none" stroke="#0c0c0c" stroke-width="1.265" stroke-linecap="round" stroke-linejoin="round"/><path d="M309.8 174.9 L317.1 174.5" fill="none" stroke="#0c0c0c" stroke-width="1.265" stroke-linecap="round" stroke-linejoin="round"/><path d="M312.7 177.4 L317.9 176.4" fill="none" stroke="#0c0c0c" stroke-width="1.265" stroke-linecap="round" stroke-linejoin="round"/><path d="M372.4 179.4 C373.2 179.2 376.4 178.2 376.9 178.6 C377.4 179.0 375.6 181.3 375.4 181.9 Z" fill="none" stroke="#0c0c0c" stroke-width="1.265" stroke-linecap="round" stroke-linejoin="round"/><path d="M366.5 156.5 C369.5 155.8 377.9 153.1 384.2 152.1 C390.6 151.1 398.5 150.5 404.9 150.6 C411.3 150.7 417.7 151.6 422.6 152.8 C427.5 154.0 432.4 157.1 434.4 158.0" fill="none" stroke="#0c0c0c" stroke-width="1.15" stroke-linecap="round" stroke-linejoin="round"/><path d="M434.4 158.0 C435.9 158.6 440.5 161.2 443.2 161.7 C445.9 162.2 449.4 161.0 450.6 160.9" fill="none" stroke="#0c0c0c" stroke-width="1.38" stroke-linecap="round" stroke-linejoin="round"/></svg></div>
<div style="left:1609px;top:89px;width:19px;height:904px;background:#252525"></div>
<svg style="left:1613.5px;top:90.5px;" width="8" height="7" viewBox="0 0 8 7"><path d="M4 0 L8 7 H0 Z" fill="#aaaaaa"/></svg>
<svg style="left:1613.5px;top:984.5px;" width="8" height="7" viewBox="0 0 8 7"><path d="M0 0 H8 L4 7 Z" fill="#aaaaaa"/></svg>
<div style="left:1609px;top:100px;width:18px;height:882px;background:linear-gradient(90deg,#424242,#2e2e2e);border-radius:7px"></div>
<div style="left:1609px;top:422px;width:18px;height:239px;background:linear-gradient(90deg,#7c7c7c,#646464);border-radius:6px"></div>
<div style="left:194px;top:993px;width:1434px;height:19px;background:#252525"></div>
<svg style="left:196px;top:998px;" width="7" height="9" viewBox="0 0 7 9"><path d="M0 4.5 L7 0 V9 Z" fill="#b4b4b4"/></svg>
<svg style="left:1619px;top:998px;" width="7" height="9" viewBox="0 0 7 9"><path d="M7 4.5 L0 0 V9 Z" fill="#b4b4b4"/></svg>
<div style="left:205px;top:993px;width:1411px;height:18px;background:linear-gradient(#424242,#2c2c2c);border-radius:7px"></div>
<div style="left:722px;top:994px;width:393px;height:17px;background:linear-gradient(#7e7e7e,#666);border-radius:7px"></div>
<div style="left:1205px;top:939px;width:394px;height:46px;background:#252525;border:1px solid #9a9a9a;border-radius:2px"></div>
<div class="t" style="left:1235.3px;top:948.3px;font-size:12px;line-height:12px;color:#e2e2e2;letter-spacing:0.36px;">You are not using the latest version of MediBang Paint.</div>
<div class="t" style="left:1215.0px;top:964.4px;font-size:12px;line-height:12px;color:#e2e2e2;letter-spacing:0.34px;">Please install the latest version of MediBang Paint found here.</div>
<svg style="left:1575px;top:955px;" width="14" height="14" viewBox="0 0 14 14"><rect x=".8" y=".8" width="12.4" height="12.4" fill="none" stroke="#e8e8e8" stroke-width="1.4"/><path d="M3.6 3.6 l6.8 6.8 M10.4 3.6 l-6.8 6.8" stroke="#e8e8e8" stroke-width="1.6"/></svg>
<div style="left:1628px;top:89px;width:1px;height:904px;background:#505050"></div>
<div style="left:1629px;top:68px;width:4px;height:944px;background:repeating-conic-gradient(#2d2d2d 0 25%,#1e1e1e 0 50%) 0 0/4px 4px"></div>
<div style="left:1633px;top:68px;width:284px;height:1px;background:#14304c"></div>
<div style="left:1633px;top:69px;width:284px;height:1px;background:#6f9cc6"></div>
<div style="left:1633px;top:70px;width:284px;height:21px;background:#393738"></div>
<div class="t" style="left:1735.9px;top:74.8px;font-size:12px;line-height:12px;color:#e0e0e0;letter-spacing:-0.51px;">Navigator</div>
<svg style="left:1886px;top:74px;" width="11" height="11" viewBox="0 0 11 11"><path d="M5.2 3.6 H1.6 V9.6 H9.2 V6.6 M5.2 6.2 L10 1.4 M6.8 1 H10.4 V4.6" fill="none" stroke="#bebebe" stroke-width="1.25"/></svg>
<svg style="left:1903px;top:74px;" width="10" height="10" viewBox="0 0 10 10"><path d="M1.4 1.4 l7.2 7.2 M8.6 1.4 l-7.2 7.2" stroke="#c9c9c9" stroke-width="2.7"/></svg>
<div style="left:1633px;top:91px;width:284px;height:30px;background:#252525"></div>
<div class="b kg" style="left:1637px;top:94px;width:23px;height:23px"><svg width="23" height="23" viewBox="0 0 23 23"><circle cx="10" cy="10" r="5.2" fill="none" stroke="#ececec" stroke-width="1.7"/><path d="M13.8 13.8 l4.6 4.6" stroke="#ececec" stroke-width="2.2" stroke-linecap="round"/><path d="M9 8.4 l1.4 -1 v5.4" stroke="#ececec" stroke-width="1.3" fill="none"/></svg></div>
<div style="left:1665px;top:99px;width:1px;height:13px;background:#5a5a5a"></div>
<div class="b kg" style="left:1671px;top:94px;width:23px;height:23px"><svg width="23" height="23" viewBox="0 0 23 23"><circle cx="10" cy="10" r="5.2" fill="none" stroke="#ececec" stroke-width="1.7"/><path d="M13.8 13.8 l4.6 4.6" stroke="#ececec" stroke-width="2.2" stroke-linecap="round"/><path d="M7.4 10 h5.2 M10 7.4 v5.2" stroke="#ececec" stroke-width="1.6"/></svg></div>
<div class="b kg" style="left:1698px;top:94px;width:23px;height:23px"><svg width="23" height="23" viewBox="0 0 23 23"><rect x="4.6" y="5.6" width="13.8" height="11.8" fill="none" stroke="#e6e6e6" stroke-width="1.1"/><path d="M6.6 7.6 h3.4 l-3.4 3.2z M16.4 7.6 h-3.4 l3.4 3.2z M6.6 15.4 h3.4 l-3.4 -3.2z M16.4 15.4 h-3.4 l3.4 -3.2z" fill="#ececec"/><path d="M8 9 l2.2 1.8 M15 9 l-2.2 1.8 M8 14 l2.2 -1.8 M15 14 l-2.2 -1.8" stroke="#ececec" stroke-width="1"/></svg></div>
<div class="b kg" style="left:1725px;top:94px;width:23px;height:23px"><svg width="23" height="23" viewBox="0 0 23 23"><circle cx="10" cy="10" r="5.2" fill="none" stroke="#ececec" stroke-width="1.7"/><path d="M13.8 13.8 l4.6 4.6" stroke="#ececec" stroke-width="2.2" stroke-linecap="round"/><path d="M7.4 10 h5.2" stroke="#ececec" stroke-width="1.6"/></svg></div>
<div style="left:1753px;top:99px;width:1px;height:13px;background:#5a5a5a"></div>
<div class="b kg" style="left:1759px;top:94px;width:23px;height:23px"><svg width="23" height="23" viewBox="0 0 23 23"><path d="M6.6 7 a6.6 6.6 0 1 0 4.9 -2.1" fill="none" stroke="#ececec" stroke-width="1.5"/><path d="M12 2.2 v5.4 l-3.6 -2.7 z" fill="#ececec"/><rect x="8.4" y="8.8" width="6.6" height="5.6" fill="#ececec" transform="rotate(-18 11.7 11.6)"/></svg></div>
<div class="b kd" style="left:1786px;top:94px;width:23px;height:23px"><svg width="23" height="23" viewBox="0 0 23 23"><rect x="6.5" y="7" width="10" height="9" fill="#fff"/><path d="M4 4.5 l3.5 1 l-2.5 2.5z M19 4.5 l-3.5 1 l2.5 2.5z M4 18.5 l3.5 -1 l-2.5 -2.5z M19 18.5 l-3.5 -1 l2.5 -2.5z" fill="#fff"/><path d="M4.5 5 l3 3 M18.5 5 l-3 3 M4.5 18 l3 -3 M18.5 18 l-3 -3" stroke="#fff" stroke-width="1.2"/></svg></div>
<div class="b kg" style="left:1813px;top:94px;width:23px;height:23px"><svg width="23" height="23" viewBox="0 0 23 23"><g transform="translate(23,0) scale(-1,1)"><path d="M6.6 7 a6.6 6.6 0 1 0 4.9 -2.1" fill="none" stroke="#ececec" stroke-width="1.5"/><path d="M12 2.2 v5.4 l-3.6 -2.7 z" fill="#ececec"/><rect x="8.4" y="8.8" width="6.6" height="5.6" fill="#ececec" transform="rotate(-18 11.7 11.6)"/></g></svg></div>
<div style="left:1841px;top:99px;width:1px;height:13px;background:#5a5a5a"></div>
<div class="b kg" style="left:1847px;top:94px;width:23px;height:23px"><svg width="23" height="23" viewBox="0 0 23 23"><rect x="4.5" y="10" width="5.5" height="8" fill="#ececec"/><rect x="14" y="10.6" width="4.6" height="7" fill="none" stroke="#ececec" stroke-width="1.2"/><path d="M11.8 5 v14" stroke="#ececec" stroke-width="1" stroke-dasharray="1.6 1.2"/><path d="M6.5 8.6 a5.4 5.4 0 0 1 10.4 0" fill="none" stroke="#ececec" stroke-width="1.3"/></svg></div>
<div style="left:1633px;top:121px;width:284px;height:181px;background:#4a4849"></div>
<div style="left:1655px;top:121px;width:240px;height:180px;background:#fff;overflow:hidden"><svg style="left:0;top:0" width="240" height="180" viewBox="0 0 801 600"><g opacity=".85"><path d="M23.6 73.7 C32.0 76.2 58.0 82.6 73.7 88.5 C89.5 94.4 102.8 99.3 118.0 109.1 C133.2 119.0 150.4 134.2 165.2 147.5 C179.9 160.8 194.7 174.5 206.5 188.8 C218.3 203.0 227.6 218.3 236.0 233.0 C244.3 247.8 251.2 265.0 256.6 277.3 C262.0 289.6 266.5 301.9 268.4 306.8" fill="none" stroke="#6e6e6e" stroke-opacity="0.22" stroke-width="20.0" stroke-linecap="round" stroke-linejoin="round"/><path d="M23.6 73.7 C26.5 77.7 38.3 87.0 41.3 97.3 C44.2 107.7 42.0 122.9 41.3 135.7 C40.6 148.5 37.6 167.6 36.9 174.0" fill="none" stroke="#6e6e6e" stroke-opacity="0.22" stroke-width="18.75" stroke-linecap="round" stroke-linejoin="round"/><path d="M156.3 66.4 C161.8 71.5 177.5 85.8 188.8 97.3 C200.1 108.9 213.9 122.4 224.2 135.7 C234.5 149.0 242.9 162.2 250.7 177.0 C258.6 191.7 264.0 208.5 271.4 224.2 C278.8 239.9 288.1 257.6 295.0 271.4 C301.9 285.2 309.7 300.9 312.7 306.8" fill="none" stroke="#6e6e6e" stroke-opacity="0.22" stroke-width="18.75" stroke-linecap="round" stroke-linejoin="round"/><path d="M155.8 66.4 C156.1 70.1 158.0 80.6 157.8 88.5 C157.7 96.4 155.4 109.4 154.9 113.6" fill="none" stroke="#6e6e6e" stroke-opacity="0.22" stroke-width="16.25" stroke-linecap="round" stroke-linejoin="round"/><path d="M36.9 174.0 C36.1 179.4 35.6 194.2 32.4 206.5 C29.3 218.8 23.1 235.0 17.7 247.8 C12.3 260.6 2.9 277.3 0.0 283.2" fill="none" stroke="#6e6e6e" stroke-opacity="0.22" stroke-width="17.5" stroke-linecap="round" stroke-linejoin="round"/><path d="M0.0 265.5 C2.9 267.9 12.8 274.5 17.7 280.2 C22.6 286.0 27.5 296.7 29.5 300.0" fill="none" stroke="#6e6e6e" stroke-opacity="0.22" stroke-width="15.0" stroke-linecap="round" stroke-linejoin="round"/><path d="M295.0 259.6 C298.9 263.5 312.2 275.3 318.6 283.2 C325.0 291.1 330.9 302.9 333.3 306.8" fill="none" stroke="#6e6e6e" stroke-opacity="0.22" stroke-width="15.0" stroke-linecap="round" stroke-linejoin="round"/><path d="M29.5 308.8 C32.0 313.3 40.8 325.6 44.2 335.4 C47.7 345.2 49.2 362.4 50.1 367.8" fill="none" stroke="#6e6e6e" stroke-opacity="0.22" stroke-width="18.75" stroke-linecap="round" stroke-linejoin="round"/><path d="M67.8 388.5 C75.2 390.5 95.9 395.9 112.1 400.3 C128.3 404.7 146.5 412.1 165.2 415.0 C183.9 418.0 207.5 418.5 224.2 418.0 C240.9 417.5 258.6 413.1 265.5 412.1" fill="none" stroke="#6e6e6e" stroke-opacity="0.22" stroke-width="20.0" stroke-linecap="round" stroke-linejoin="round"/><path d="M44.2 397.3 C41.3 401.8 32.0 414.6 26.5 423.9 C21.1 433.2 14.3 448.5 11.8 453.4" fill="none" stroke="#6e6e6e" stroke-opacity="0.22" stroke-width="17.5" stroke-linecap="round" stroke-linejoin="round"/><path d="M73.7 438.6 C80.1 440.1 100.8 443.1 112.1 447.5 C123.4 451.9 132.7 458.3 141.6 465.2 C150.4 472.1 161.3 484.9 165.2 488.8" fill="none" stroke="#6e6e6e" stroke-opacity="0.22" stroke-width="18.75" stroke-linecap="round" stroke-linejoin="round"/><path d="M61.9 465.2 C57.5 470.1 42.8 482.9 35.4 494.7 C28.0 506.5 20.6 524.2 17.7 536.0 C14.7 547.8 15.2 554.8 17.7 565.5 C20.2 576.2 30.0 594.2 32.4 600.0" fill="none" stroke="#6e6e6e" stroke-opacity="0.22" stroke-width="20.0" stroke-linecap="round" stroke-linejoin="round"/><path d="M81.1 488.8 L118.0 482.9" fill="none" stroke="#6e6e6e" stroke-opacity="0.22" stroke-width="17.5" stroke-linecap="round" stroke-linejoin="round"/><path d="M109.1 516.8 C116.5 516.6 137.2 514.1 153.4 515.3 C169.6 516.6 197.6 522.7 206.5 524.2" fill="none" stroke="#6e6e6e" stroke-opacity="0.22" stroke-width="17.5" stroke-linecap="round" stroke-linejoin="round"/><path d="M67.8 512.4 C69.3 518.3 71.8 537.5 76.7 547.8 C81.6 558.1 89.0 568.4 97.3 574.3 C105.7 580.2 121.9 581.7 126.8 583.2" fill="none" stroke="#6e6e6e" stroke-opacity="0.22" stroke-width="18.75" stroke-linecap="round" stroke-linejoin="round"/><path d="M236.0 597.9 C240.9 593.8 253.2 578.8 265.5 572.9 C277.8 567.0 302.4 564.3 309.7 562.5" fill="none" stroke="#6e6e6e" stroke-opacity="0.22" stroke-width="18.75" stroke-linecap="round" stroke-linejoin="round"/><path d="M203.5 344.2 C208.9 348.2 222.7 360.5 236.0 367.8 C249.3 375.2 266.0 384.6 283.2 388.5 C300.4 392.4 322.5 391.9 339.2 391.4 C355.9 391.0 376.1 386.5 383.5 385.5" fill="none" stroke="#6e6e6e" stroke-opacity="0.22" stroke-width="20.0" stroke-linecap="round" stroke-linejoin="round"/><path d="M218.3 322.1 C221.2 319.9 229.6 311.8 236.0 308.8 C242.4 305.9 253.2 305.2 256.6 304.4" fill="none" stroke="#6e6e6e" stroke-opacity="0.22" stroke-width="16.25" stroke-linecap="round" stroke-linejoin="round"/><path d="M295.0 314.7 C297.9 313.3 305.8 305.9 312.7 305.9 C319.6 305.9 332.4 313.3 336.3 314.7" fill="none" stroke="#6e6e6e" stroke-opacity="0.22" stroke-width="16.25" stroke-linecap="round" stroke-linejoin="round"/><path d="M224.2 447.5 C227.6 450.4 238.9 457.8 244.8 465.2 C250.7 472.6 257.1 487.3 259.6 491.7" fill="none" stroke="#6e6e6e" stroke-opacity="0.22" stroke-width="17.5" stroke-linecap="round" stroke-linejoin="round"/><path d="M244.8 506.5 C250.7 510.9 267.0 527.4 280.2 533.0 C293.5 538.7 309.7 539.9 324.5 540.4 C339.2 540.9 361.4 536.7 368.7 536.0" fill="none" stroke="#6e6e6e" stroke-opacity="0.22" stroke-width="18.75" stroke-linecap="round" stroke-linejoin="round"/><path d="M305.9 308.8 L329.5 317.7" fill="none" stroke="#6e6e6e" stroke-opacity="0.22" stroke-width="17.5" stroke-linecap="round" stroke-linejoin="round"/><path d="M376.7 323.6 L397.3 338.3" fill="none" stroke="#6e6e6e" stroke-opacity="0.22" stroke-width="16.25" stroke-linecap="round" stroke-linejoin="round"/><path d="M300.0 370.8 C304.9 371.8 317.2 373.7 329.5 376.7 C341.8 379.6 366.4 386.5 373.7 388.5" fill="none" stroke="#6e6e6e" stroke-opacity="0.22" stroke-width="17.5" stroke-linecap="round" stroke-linejoin="round"/><path d="M367.8 418.0 C372.8 418.0 388.0 416.0 397.3 418.0 C406.7 420.0 419.5 427.8 423.9 429.8" fill="none" stroke="#6e6e6e" stroke-opacity="0.22" stroke-width="16.25" stroke-linecap="round" stroke-linejoin="round"/><path d="M359.0 444.5 C363.9 443.6 377.2 439.6 388.5 438.6 C399.8 437.7 414.1 438.6 426.8 438.6 C439.6 438.6 458.8 438.6 465.2 438.6" fill="none" stroke="#6e6e6e" stroke-opacity="0.22" stroke-width="18.75" stroke-linecap="round" stroke-linejoin="round"/><path d="M465.2 388.5 C471.1 387.3 491.7 379.2 500.6 381.1 C509.4 383.1 515.3 393.2 518.3 400.3 C521.2 407.4 520.3 417.0 518.3 423.9 C516.3 430.8 508.5 438.6 506.5 441.6" fill="none" stroke="#6e6e6e" stroke-opacity="0.22" stroke-width="18.75" stroke-linecap="round" stroke-linejoin="round"/><path d="M465.2 438.6 C465.2 435.2 463.7 425.4 465.2 418.0 C466.7 410.6 472.6 398.3 474.0 394.4" fill="none" stroke="#6e6e6e" stroke-opacity="0.22" stroke-width="16.25" stroke-linecap="round" stroke-linejoin="round"/><path d="M332.4 471.1 C334.9 477.0 338.8 499.6 347.2 506.5 C355.6 513.4 376.7 511.4 382.6 512.4" fill="none" stroke="#6e6e6e" stroke-opacity="0.22" stroke-width="17.5" stroke-linecap="round" stroke-linejoin="round"/><path d="M382.6 512.4 C390.5 510.4 414.1 504.0 429.8 500.6 C445.5 497.1 469.1 493.2 477.0 491.7" fill="none" stroke="#6e6e6e" stroke-opacity="0.22" stroke-width="18.75" stroke-linecap="round" stroke-linejoin="round"/><path d="M465.2 482.9 C468.1 479.9 475.0 466.2 482.9 465.2 C490.8 464.2 506.5 470.6 512.4 477.0 C518.3 483.4 520.3 495.2 518.3 503.5 C516.3 511.9 508.0 524.7 500.6 527.1 C493.2 529.6 478.5 519.8 474.0 518.3" fill="none" stroke="#6e6e6e" stroke-opacity="0.22" stroke-width="18.75" stroke-linecap="round" stroke-linejoin="round"/><path d="M344.2 544.8 L367.8 533.0" fill="none" stroke="#6e6e6e" stroke-opacity="0.22" stroke-width="16.25" stroke-linecap="round" stroke-linejoin="round"/><path d="M305.9 562.5 L311.8 571.4" fill="none" stroke="#6e6e6e" stroke-opacity="0.22" stroke-width="16.25" stroke-linecap="round" stroke-linejoin="round"/><path d="M326.4 155.3 C330.8 155.7 343.3 155.7 352.9 157.5 C362.5 159.4 378.7 164.9 383.9 166.4" fill="none" stroke="#6e6e6e" stroke-opacity="0.22" stroke-width="15.0" stroke-linecap="round" stroke-linejoin="round"/><path d="M370.6 219.5 C369.5 223.2 364.4 233.5 364.0 241.6 C363.6 249.7 367.7 263.7 368.4 268.1" fill="none" stroke="#6e6e6e" stroke-opacity="0.22" stroke-width="15.0" stroke-linecap="round" stroke-linejoin="round"/><path d="M432.6 206.2 C434.4 210.6 442.2 222.4 443.6 232.7 C445.1 243.1 441.8 262.2 441.4 268.1" fill="none" stroke="#6e6e6e" stroke-opacity="0.22" stroke-width="13.75" stroke-linecap="round" stroke-linejoin="round"/><path d="M291.0 268.1 C293.9 272.6 301.7 286.2 308.7 294.7 C315.7 303.2 329.0 315.0 333.0 319.0" fill="none" stroke="#6e6e6e" stroke-opacity="0.22" stroke-width="16.25" stroke-linecap="round" stroke-linejoin="round"/><path d="M216.9 421.8 C227.5 420.0 258.5 416.1 280.6 411.2 C302.8 406.3 334.2 397.0 349.7 392.6 C365.1 388.2 369.6 386.0 373.6 384.6" fill="none" stroke="#6e6e6e" stroke-opacity="0.22" stroke-width="20.0" stroke-linecap="round" stroke-linejoin="round"/><path d="M296.6 538.6 C307.2 537.3 336.4 537.7 360.3 530.6 C384.2 523.6 420.0 504.5 439.9 496.1 C459.8 487.7 473.1 482.9 479.7 480.2" fill="none" stroke="#6e6e6e" stroke-opacity="0.22" stroke-width="22.5" stroke-linecap="round" stroke-linejoin="round"/><path d="M349.7 490.8 C358.5 488.2 385.5 479.3 402.8 474.9 C420.0 470.5 444.8 466.0 453.2 464.3" fill="none" stroke="#6e6e6e" stroke-opacity="0.22" stroke-width="20.0" stroke-linecap="round" stroke-linejoin="round"/><path d="M360.3 416.5 C364.7 418.7 376.6 423.6 386.8 429.8 C397.0 436.0 415.6 449.7 421.3 453.7" fill="none" stroke="#6e6e6e" stroke-opacity="0.22" stroke-width="17.5" stroke-linecap="round" stroke-linejoin="round"/><path d="M349.7 474.9 C352.3 469.6 359.4 452.3 365.6 443.0 C371.8 433.7 383.3 423.1 386.8 419.1" fill="none" stroke="#6e6e6e" stroke-opacity="0.22" stroke-width="17.5" stroke-linecap="round" stroke-linejoin="round"/><path d="M439.9 384.6 C442.6 389.9 451.4 405.9 455.8 416.5 C460.3 427.1 464.7 443.0 466.5 448.4" fill="none" stroke="#6e6e6e" stroke-opacity="0.22" stroke-width="17.5" stroke-linecap="round" stroke-linejoin="round"/><path d="M211.6 336.9 C218.7 340.8 237.3 352.8 254.1 360.7 C270.9 368.7 302.8 380.7 312.5 384.6" fill="none" stroke="#6e6e6e" stroke-opacity="0.22" stroke-width="18.75" stroke-linecap="round" stroke-linejoin="round"/><path d="M216.9 315.6 C224.9 316.5 246.1 321.8 264.7 320.9 C283.3 320.0 317.8 312.1 328.4 310.3" fill="none" stroke="#6e6e6e" stroke-opacity="0.22" stroke-width="17.5" stroke-linecap="round" stroke-linejoin="round"/><path d="M232.9 453.7 C235.5 459.9 239.5 478.4 248.8 490.8 C258.1 503.2 273.6 519.1 288.6 528.0 C303.6 536.8 330.6 541.3 339.0 543.9" fill="none" stroke="#6e6e6e" stroke-opacity="0.22" stroke-width="18.75" stroke-linecap="round" stroke-linejoin="round"/><path d="M370.9 320.9 C373.6 323.6 381.5 335.1 386.8 336.9 C392.1 338.6 400.1 332.4 402.8 331.5" fill="none" stroke="#6e6e6e" stroke-opacity="0.22" stroke-width="16.25" stroke-linecap="round" stroke-linejoin="round"/><path d="M302.4 118.0 C296.2 125.9 277.0 147.5 265.5 165.2 C253.9 182.9 238.4 214.4 233.0 224.2 M236.0 193.2 C238.4 191.5 246.8 186.1 250.7 182.9 C254.7 179.7 258.1 175.5 259.6 174.0 M227.1 236.0 L236.0 238.9 M253.7 253.7 C256.6 253.2 266.2 252.9 271.4 250.7 C276.5 248.5 284.2 238.4 284.7 240.4 C285.2 242.4 277.5 255.4 274.3 262.5 C271.1 269.7 267.0 279.7 265.5 283.2 M35.4 271.4 C35.2 273.8 34.9 281.4 33.9 286.1 C32.9 290.9 30.2 297.7 29.5 300.0 M295.0 261.1 C297.9 264.7 307.8 276.7 312.7 283.2 C317.6 289.7 322.5 297.2 324.5 300.0 M359.9 259.6 C360.9 263.0 365.3 273.5 365.8 280.2 C366.3 287.0 363.3 296.7 362.8 300.0 M380.5 265.5 L377.6 300.0 M106.2 369.3 C99.3 374.0 77.2 385.8 64.9 397.3 C52.6 408.9 39.8 425.9 32.4 438.6 C25.1 451.4 22.6 468.1 20.6 474.0 M103.2 450.4 C107.2 444.1 114.6 421.4 126.8 412.1 C139.1 402.8 163.7 394.4 177.0 394.4 C190.3 394.4 200.6 404.2 206.5 412.1 C212.4 420.0 211.4 436.7 212.4 441.6 M67.8 516.8 L97.3 533.0 M123.9 538.9 C130.8 536.5 151.4 532.5 165.2 524.2 C179.0 515.8 199.6 494.7 206.5 488.8 M165.2 488.8 C169.1 486.8 181.9 480.9 188.8 477.0 C195.7 473.1 204.0 469.1 206.5 465.2 C208.9 461.3 204.0 455.4 203.5 453.4 M182.9 547.8 C186.8 550.7 200.1 557.1 206.5 565.5 C212.9 573.8 218.8 592.5 221.2 597.9 M156.3 562.5 C159.8 559.6 169.6 554.2 177.0 544.8 C184.4 535.5 193.7 519.8 200.6 506.5 C207.5 493.2 215.3 472.1 218.3 465.2 M253.7 350.1 C255.7 351.6 262.0 358.5 265.5 359.0 C268.9 359.5 271.4 351.1 274.3 353.1 C277.3 355.1 281.7 367.8 283.2 370.8 M262.5 308.8 C266.0 310.3 275.8 310.8 283.2 317.7 C290.6 324.6 296.0 340.8 306.8 350.1 C317.6 359.5 341.2 369.8 348.1 373.7 M215.3 488.8 C228.6 487.8 267.0 482.4 295.0 482.9 C323.0 483.4 368.7 490.3 383.5 491.7 M224.2 465.2 C229.1 469.1 241.9 483.9 253.7 488.8 C265.5 493.7 278.3 494.7 295.0 494.7 C311.7 494.7 336.5 487.8 354.0 488.8 C371.5 489.8 392.3 498.6 400.0 500.6 M218.3 482.9 C226.2 486.8 252.7 499.6 265.5 506.5 C278.3 513.4 290.1 521.2 295.0 524.2 M94.4 491.7 C96.4 491.2 102.3 491.2 106.2 488.8 C110.1 486.3 117.0 476.0 118.0 477.0 C119.0 478.0 115.5 490.3 112.1 494.7 C108.7 499.1 99.8 502.1 97.3 503.5 M103.2 482.9 C105.2 484.4 116.0 489.3 115.0 491.7 C114.1 494.2 100.3 496.7 97.3 497.6 M265.5 441.6 C266.5 445.5 270.6 458.8 271.4 465.2 C272.1 471.6 270.2 477.5 269.9 479.9 M280.2 459.3 L286.1 477.0 M300.9 465.2 C300.4 471.1 298.4 491.7 297.9 500.6 C297.4 509.4 297.9 515.3 297.9 518.3 M315.6 441.6 C316.6 445.5 322.0 458.3 321.5 465.2 C321.0 472.1 318.1 479.0 312.7 482.9 C307.3 486.8 293.0 487.8 289.1 488.8 M188.8 550.7 C191.7 552.2 201.6 555.2 206.5 559.6 C211.4 564.0 216.3 574.3 218.3 577.3 M333.3 338.3 C334.3 341.8 334.8 352.6 339.2 359.0 C343.7 365.4 356.4 373.7 359.9 376.7 M339.2 447.5 C344.6 445.0 361.6 435.7 371.7 432.7 C381.8 429.8 395.3 430.3 400.0 429.8 M373.7 300.0 C372.8 304.4 369.6 317.7 367.8 326.5 C366.1 335.4 364.2 348.7 363.4 353.1 M382.6 300.0 C381.6 304.9 382.6 318.7 376.7 329.5 C370.8 340.3 352.1 359.0 347.2 364.9 M453.4 305.9 C453.9 314.7 455.1 342.8 456.3 359.0 C457.6 375.2 460.0 395.9 460.8 403.2 M447.5 338.3 C446.0 344.2 441.1 362.9 438.6 373.7 C436.2 384.6 432.7 390.0 432.7 403.2 C432.7 416.5 437.7 445.0 438.6 453.4 M426.8 317.7 C425.4 322.1 422.9 334.4 418.0 344.2 C413.1 354.1 404.7 366.9 397.3 376.7 C390.0 386.5 377.7 398.8 373.7 403.2 M518.3 429.8 L521.2 438.6 M300.0 488.8 C305.9 489.3 323.1 489.3 335.4 491.7 C347.7 494.2 367.4 501.6 373.7 503.5 M329.5 506.5 C339.3 504.5 369.8 497.6 388.5 494.7 C407.2 491.7 432.7 489.8 441.6 488.8 M506.5 530.1 L515.3 518.3 M398.8 394.4 C399.1 393.4 399.1 390.0 400.3 388.5 C401.5 387.0 404.3 385.3 406.2 385.5 C408.1 385.8 410.8 387.8 411.5 390.0 C412.2 392.2 411.9 396.9 410.6 398.8 C409.3 400.8 405.8 402.5 403.8 401.8 C401.9 401.0 399.7 395.6 398.8 394.4 M403.8 393.8 C404.3 393.5 406.1 391.8 406.8 392.0 C407.5 392.2 407.8 394.5 408.0 395.0 M426.8 356.0 C427.3 359.0 427.8 368.8 429.8 373.7 C431.8 378.7 437.2 383.6 438.6 385.5 M335.4 450.4 C339.3 447.5 350.6 435.2 359.0 432.7 C367.4 430.3 381.1 435.2 385.5 435.7 M314.7 429.8 C315.7 432.7 319.2 442.1 320.6 447.5 C322.1 452.9 323.1 459.8 323.6 462.2 M323.6 397.3 C327.0 396.4 336.4 391.9 344.2 391.4 C352.1 391.0 366.4 393.9 370.8 394.4 M308.8 388.5 C310.3 392.4 315.2 405.7 317.7 412.1 C320.2 418.5 322.6 424.4 323.6 426.8 M418.0 438.6 L423.9 447.5 M530.1 465.2 C531.1 468.1 534.3 477.5 536.0 482.9 C537.7 488.3 539.7 495.2 540.4 497.6 M347.2 335.4 L359.0 367.8 M329.5 329.5 L341.3 353.1 M300.0 308.8 C302.9 313.3 310.3 326.1 317.7 335.4 C325.1 344.7 336.9 357.8 344.2 364.9 C351.6 372.0 359.0 376.0 361.9 378.2 M302.0 118.8 C298.7 122.7 289.1 134.1 282.1 142.0 C275.1 150.0 263.7 162.3 260.0 166.4 M275.5 100.0 L286.5 111.1 M260.0 252.7 C262.2 251.9 269.4 250.1 273.3 248.2 C277.1 246.4 283.2 239.0 283.2 241.6 C283.2 244.2 276.4 256.0 273.3 263.7 C270.1 271.5 265.9 284.0 264.4 288.1 M260.0 294.7 C262.2 297.3 269.6 305.1 273.3 310.2 C277.0 315.2 280.6 322.5 282.1 325.0 M459.1 197.3 C460.6 198.5 466.7 199.6 468.0 204.0 C469.3 208.4 467.2 217.6 466.9 223.9 C466.5 230.2 463.7 235.9 465.8 241.6 C467.8 247.3 476.8 255.4 479.0 258.2 M445.8 259.3 L465.8 257.1 M472.4 263.7 C469.1 267.0 455.1 277.0 452.5 283.6 C449.9 290.3 455.8 296.6 456.9 303.5 C458.0 310.4 458.7 321.4 459.1 325.0 M414.9 270.8 L428.1 268.6 M364.0 241.6 C365.8 247.5 374.7 263.3 375.0 277.0 C375.4 290.6 367.7 315.7 366.2 323.5 M359.6 243.8 C360.3 250.1 364.4 273.3 364.0 281.4 C363.6 289.5 358.5 290.6 357.3 292.5 M392.7 237.2 C392.4 243.8 392.7 262.6 390.5 277.0 C388.3 291.4 381.3 315.7 379.5 323.5 M383.9 263.7 C383.2 269.6 380.9 288.9 379.5 299.1 C378.0 309.3 375.8 320.7 375.0 325.0 M434.8 270.4 C434.2 275.1 432.6 290.0 431.5 299.1 C430.4 308.2 428.7 320.7 428.1 325.0 M452.5 210.6 C451.0 212.8 445.8 219.5 443.6 223.9 C441.4 228.3 439.9 235.0 439.2 237.2 M372.8 263.7 C373.9 263.9 377.3 265.2 379.5 264.8 C381.7 264.5 385.0 262.1 386.1 261.5 M370.6 215.0 C370.3 217.3 367.7 223.9 368.4 228.3 C369.1 232.7 373.9 239.4 375.0 241.6 M320.7 528.7 C327.0 526.9 345.5 522.3 358.6 517.9 C371.7 513.6 385.9 507.6 399.2 502.5 C412.6 497.4 427.2 491.3 438.7 487.4 C450.1 483.4 459.2 481.1 468.1 478.7 C477.1 476.2 484.4 474.6 492.4 472.5 C500.3 470.5 511.8 467.5 515.7 466.5 M417.9 488.9 C423.6 486.6 441.9 478.4 452.1 475.3 C462.3 472.2 470.4 471.1 479.1 470.3 C487.9 469.4 496.4 470.1 504.5 470.3 C512.5 470.5 523.5 471.2 527.4 471.3 M295.0 545.6 C299.8 544.6 312.5 542.8 323.7 540.0 C334.9 537.2 349.2 533.6 362.4 528.7 C375.5 523.8 389.6 516.8 402.6 510.6 C415.6 504.4 429.3 496.9 440.2 491.6 C451.1 486.3 459.6 482.4 468.2 478.8 C476.7 475.2 483.8 472.4 491.6 469.8 C499.4 467.2 510.9 464.2 514.8 463.1 M405.1 516.7 C411.5 513.9 432.1 504.2 443.2 499.8 C454.3 495.4 462.7 492.6 471.5 490.5 C480.4 488.4 488.2 487.8 496.4 487.1 C504.6 486.5 513.9 486.6 521.0 486.7 C528.1 486.7 535.9 487.3 538.9 487.5 M436.0 480.2 C440.8 477.8 456.1 470.8 464.5 466.0 C472.9 461.2 479.1 455.6 486.5 451.5 C494.0 447.4 502.5 443.5 509.1 441.4 C515.7 439.4 523.5 439.7 526.3 439.3 M427.9 513.6 C433.6 512.5 452.2 508.7 462.1 506.7 C472.1 504.7 479.6 503.6 487.7 501.5 C495.9 499.4 503.6 496.3 510.9 494.1 C518.3 491.8 528.2 489.1 531.7 488.1 M396.1 487.2 C400.0 485.9 411.9 482.1 419.5 479.6 C427.1 477.0 435.2 473.9 441.8 471.7 C448.4 469.4 454.0 467.5 459.2 465.9 C464.3 464.3 468.8 463.0 472.7 461.9 C476.6 460.9 480.9 459.9 482.5 459.5 M251.5 495.4 C254.0 496.9 261.4 501.1 266.7 504.8 C272.0 508.4 277.6 513.1 283.3 517.1 C289.0 521.1 294.8 525.5 301.2 528.8 C307.6 532.1 314.9 534.9 321.7 536.9 C328.5 538.9 336.2 540.0 341.9 540.8 C347.6 541.6 353.5 541.5 355.8 541.6 M236.5 490.4 C238.8 491.6 245.5 495.5 250.5 498.0 C255.5 500.5 260.7 503.0 266.5 505.4 C272.2 507.7 278.7 510.2 284.9 512.4 C291.2 514.6 297.4 516.6 304.0 518.4 C310.6 520.3 317.7 521.9 324.4 523.6 C331.0 525.3 338.6 527.1 344.0 528.9 C349.5 530.6 355.0 533.1 357.2 534.0 M251.9 470.5 C254.7 470.9 262.7 472.3 268.7 473.1 C274.7 473.8 281.5 474.4 287.9 475.1 C294.2 475.7 300.8 476.3 306.8 476.9 C312.7 477.6 317.6 478.1 323.5 479.2 C329.5 480.3 336.6 481.9 342.5 483.5 C348.5 485.1 356.6 487.8 359.4 488.7 M226.0 461.8 C227.8 462.6 233.0 464.7 237.2 466.3 C241.5 468.0 246.4 469.9 251.4 471.9 C256.3 473.8 261.4 475.7 266.9 477.9 C272.4 480.1 278.4 482.6 284.3 484.9 C290.2 487.1 296.3 489.5 302.1 491.5 C308.0 493.5 313.3 495.1 319.5 496.7 C325.7 498.3 333.1 499.8 339.3 501.1 C345.5 502.5 353.7 504.1 356.6 504.6 M217.4 502.1 C219.6 502.7 226.1 504.7 231.0 505.8 C235.9 506.9 241.4 507.1 246.8 508.6 C252.1 510.1 257.4 511.9 262.9 514.9 C268.4 517.9 274.1 522.4 280.0 526.5 C285.9 530.6 295.2 537.5 298.2 539.7 M248.1 504.9 C250.5 506.7 257.1 512.6 262.5 516.0 C267.9 519.4 274.1 522.9 280.5 525.2 C286.9 527.4 293.9 528.7 300.9 529.7 C308.0 530.7 315.8 530.5 322.8 531.3 C329.8 532.0 339.7 533.8 343.1 534.3 M277.8 489.9 C281.4 489.8 292.3 489.6 299.8 489.3 C307.2 489.0 314.7 488.2 322.4 487.9 C330.1 487.5 337.7 487.1 346.2 487.3 C354.7 487.5 365.1 488.4 373.6 489.2 C382.0 490.0 393.0 491.6 396.9 492.1 M278.1 496.2 C281.8 496.1 292.8 495.4 300.2 495.4 C307.6 495.3 314.9 495.6 322.3 496.1 C329.7 496.5 336.5 497.4 344.6 498.3 C352.7 499.1 362.6 500.6 370.9 501.4 C379.2 502.2 390.5 503.0 394.4 503.3 M256.7 480.2 C260.1 480.2 270.1 480.4 277.2 480.3 C284.2 480.2 291.5 479.7 299.1 479.6 C306.6 479.5 314.5 479.1 322.5 479.4 C330.5 479.8 338.4 480.5 347.1 481.7 C355.7 482.8 365.8 484.9 374.1 486.5 C382.5 488.1 393.3 490.3 397.2 491.1 M267.1 482.5 C270.6 482.4 280.7 481.8 288.0 481.5 C295.3 481.2 303.0 481.0 310.7 481.0 C318.4 481.0 325.9 481.0 334.3 481.5 C342.6 481.9 351.8 482.9 360.7 483.6 C369.5 484.3 379.8 485.3 387.4 485.6 C395.0 486.0 403.0 485.7 406.2 485.7 M211.6 494.4 C213.9 494.6 219.9 495.6 225.6 495.8 C231.4 496.0 239.0 496.2 245.9 495.8 C252.9 495.4 260.3 494.5 267.4 493.3 C274.5 492.2 281.3 490.2 288.6 488.9 C295.8 487.6 307.2 485.9 310.9 485.3 M251.5 415.5 C254.8 414.0 265.0 409.3 271.4 406.8 C277.7 404.3 283.5 402.4 289.6 400.5 C295.7 398.6 301.9 397.1 307.9 395.5 C313.9 393.8 322.5 391.5 325.4 390.7 M199.2 441.9 C200.9 441.1 205.0 438.8 209.1 437.1 C213.1 435.3 218.3 433.2 223.5 431.5 C228.7 429.7 234.7 427.9 240.3 426.5 C245.9 425.0 251.9 423.8 257.2 422.6 C262.5 421.4 269.7 419.8 272.2 419.3 M345.2 306.4 C346.2 308.1 349.1 312.4 351.3 316.4 C353.6 320.5 356.7 326.1 358.7 330.9 C360.6 335.6 362.9 340.5 363.1 344.9 C363.3 349.4 361.4 353.8 359.8 357.4 C358.3 361.1 355.0 364.6 353.7 366.6 C352.4 368.5 351.0 368.3 352.1 369.0 C353.1 369.7 358.8 370.5 360.2 370.8 M365.9 352.6 C365.3 355.0 363.5 363.8 362.8 366.7 C362.0 369.6 362.4 370.7 361.4 370.0 C360.3 369.3 355.4 363.5 356.4 362.5 C357.4 361.5 365.8 363.7 367.6 364.0 M351.0 347.4 C350.5 349.0 349.0 353.6 348.2 357.1 C347.4 360.5 345.3 365.4 346.2 368.2 C347.0 370.9 349.9 372.5 353.4 373.5 C357.0 374.5 362.8 373.8 367.6 373.9 C372.4 374.0 379.8 374.0 382.2 374.0 M361.4 330.2 C362.3 332.6 366.2 339.9 367.0 345.1 C367.7 350.2 366.7 356.6 365.7 360.9 C364.8 365.1 362.6 370.2 361.2 370.7 C359.9 371.1 358.3 364.8 357.7 363.6 M459.2 348.3 C459.5 351.6 460.2 361.1 460.7 367.9 C461.3 374.7 461.8 382.3 462.4 389.0 C463.0 395.8 463.7 403.0 464.3 408.7 C465.0 414.4 465.7 419.0 466.4 423.2 C467.1 427.3 467.9 430.5 468.7 433.4 C469.5 436.2 470.7 439.2 471.1 440.3 M459.6 310.5 C459.6 313.4 459.5 321.5 459.7 327.7 C459.9 334.0 460.1 341.5 460.7 348.2 C461.2 354.8 462.0 360.9 463.0 367.7 C464.1 374.4 465.6 381.8 467.0 388.5 C468.3 395.2 470.0 402.3 471.2 407.9 C472.4 413.5 473.8 419.9 474.3 422.3 M420.8 360.0 C420.3 363.6 419.0 375.2 417.9 381.7 C416.7 388.2 415.5 393.7 413.9 398.9 C412.3 404.1 410.7 408.6 408.3 412.7 C405.8 416.8 403.5 419.9 399.1 423.7 C394.7 427.4 388.3 431.2 381.6 435.2 C374.9 439.1 365.5 443.6 358.9 447.2 C352.3 450.8 345.0 455.1 342.2 456.6 M422.3 372.2 C421.8 375.4 420.1 385.5 419.0 391.5 C417.9 397.4 417.2 402.7 415.7 407.9 C414.1 413.0 412.9 417.6 409.9 422.5 C406.9 427.3 403.3 432.0 397.7 437.0 C392.1 441.9 383.4 447.5 376.4 452.1 C369.5 456.7 359.3 462.6 355.9 464.7 M416.4 381.3 C415.2 384.0 412.2 393.0 409.6 397.5 C406.9 402.1 403.6 405.7 400.5 408.6 C397.3 411.6 394.8 412.6 390.5 415.3 C386.3 418.0 377.5 423.2 374.9 424.7 M453.7 322.9 C453.5 325.8 453.0 333.1 452.4 340.1 C451.8 347.0 451.0 356.8 449.9 364.9 C448.9 373.1 447.4 381.8 446.0 388.9 C444.7 396.1 443.7 401.3 442.0 407.6 C440.2 413.9 438.8 420.3 435.6 426.8 C432.3 433.3 424.8 443.4 422.7 446.7 M433.4 362.1 C432.8 365.9 431.3 378.1 429.9 384.8 C428.6 391.5 427.3 396.9 425.4 402.5 C423.5 408.0 421.6 413.2 418.5 418.0 C415.4 422.8 412.1 427.0 406.9 431.3 C401.6 435.5 394.3 439.6 387.1 443.7 C379.8 447.7 370.2 452.0 363.4 455.4 C356.7 458.8 349.3 462.7 346.5 464.2 M372.6 434.5 C374.3 432.7 380.9 425.8 382.9 423.4 C385.0 420.9 384.2 417.1 384.9 419.9 C385.6 422.7 387.0 432.8 386.9 440.2 C386.8 447.6 386.8 458.8 384.3 464.4 C381.9 470.0 376.4 471.6 372.4 473.7 C368.5 475.8 362.7 476.3 360.7 476.9 M385.1 419.4 C385.3 420.7 386.5 421.5 386.5 427.2 C386.4 432.9 386.3 447.0 384.9 453.8 C383.4 460.5 381.2 464.7 377.8 467.7 C374.5 470.6 366.8 470.8 364.6 471.4 M341.6 444.3 C344.7 442.5 355.1 436.7 360.3 433.3 C365.6 429.9 369.3 427.2 373.0 423.9 C376.7 420.7 379.3 413.3 382.7 413.8 C386.0 414.3 391.5 420.0 393.1 426.9 C394.7 433.7 394.0 447.0 392.2 454.9 C390.4 462.8 386.6 470.2 382.2 474.2 C377.9 478.1 368.8 477.9 366.1 478.6 M482.9 395.9 C485.8 395.0 496.1 390.8 500.6 390.5 C505.2 390.2 507.4 391.0 510.1 394.0 C512.8 397.0 515.9 403.4 516.7 408.4 C517.6 413.4 517.2 419.3 515.3 423.8 C513.4 428.2 511.0 433.5 505.4 435.2 C499.9 436.8 485.9 433.8 482.0 433.5 M294.1 403.3 C296.0 404.9 302.0 409.0 305.2 412.6 C308.5 416.2 311.1 420.0 313.6 425.0 C316.1 430.0 318.1 437.0 320.0 442.6 C321.8 448.3 323.9 456.2 324.7 458.9 M271.8 393.0 C274.0 394.6 280.6 399.6 284.9 402.5 C289.1 405.4 293.7 407.6 297.3 410.5 C300.9 413.4 304.0 415.8 306.6 419.8 C309.1 423.9 310.9 429.3 312.4 434.8 C313.9 440.3 314.9 447.6 315.8 452.8 C316.7 458.0 317.5 463.9 317.8 466.1 M275.8 378.8 C277.4 380.7 282.0 386.6 285.6 390.0 C289.3 393.4 293.7 396.0 297.7 399.2 C301.8 402.3 306.3 405.0 309.9 408.9 C313.5 412.9 316.7 417.4 319.1 422.9 C321.5 428.4 323.4 438.5 324.2 441.7 M271.8 325.2 C273.9 327.3 279.8 333.7 284.1 337.4 C288.3 341.2 292.6 344.1 297.4 347.6 C302.2 351.1 307.7 354.8 312.8 358.2 C317.9 361.6 323.2 365.2 328.0 367.8 C332.7 370.4 336.7 372.6 341.2 373.9 C345.8 375.3 352.8 375.7 355.1 376.1 M290.4 342.8 C292.7 344.6 299.4 350.3 304.6 353.4 C309.8 356.5 316.4 359.2 321.7 361.4 C327.0 363.5 332.0 365.1 336.5 366.5 C341.0 367.9 346.6 369.1 348.7 369.6 M299.6 344.9 C301.8 347.0 308.6 353.5 313.3 357.5 C317.9 361.5 322.8 365.8 327.4 368.9 C332.0 371.9 336.3 374.3 340.9 375.8 C345.5 377.2 350.8 377.2 355.1 377.4 C359.5 377.5 365.0 376.6 366.9 376.4 M279.4 330.0 C281.5 331.9 287.2 337.8 291.6 341.4 C296.1 344.9 301.0 348.1 306.1 351.3 C311.1 354.6 317.0 358.1 322.1 360.7 C327.1 363.4 331.8 365.7 336.3 367.1 C340.7 368.5 344.5 368.9 348.7 369.3 C352.9 369.6 357.5 369.2 361.2 369.1 C364.9 369.0 369.3 368.7 370.9 368.7 M206.8 427.3 C207.7 430.0 210.2 437.5 211.9 443.4 C213.5 449.3 215.4 456.4 216.7 462.9 C218.1 469.4 219.4 476.2 219.9 482.3 C220.4 488.4 220.4 493.1 219.8 499.2 C219.1 505.2 217.4 512.4 216.1 518.5 C214.8 524.7 212.8 533.1 212.1 536.1 M203.8 398.6 C204.7 400.4 207.2 405.5 209.2 409.7 C211.2 413.9 214.0 418.8 215.8 424.0 C217.7 429.1 219.0 434.6 220.4 440.8 C221.7 446.9 223.3 457.7 223.8 461.0 M223.7 450.2 C224.2 453.7 225.7 464.5 226.4 471.3 C227.0 478.0 228.0 484.3 227.9 490.8 C227.7 497.3 226.8 504.0 225.5 510.4 C224.1 516.9 221.7 524.4 219.7 529.8 C217.6 535.2 214.5 540.7 213.4 542.9 M429.0 460.6 C433.0 459.6 445.2 456.4 453.5 454.8 C461.7 453.3 470.0 452.0 478.5 451.2 C487.0 450.4 496.8 448.8 504.5 450.0 C512.2 451.1 519.4 454.0 524.7 458.2 C530.0 462.4 534.0 468.7 536.4 475.1 C538.9 481.5 538.8 493.1 539.3 496.7 M504.6 449.6 C508.0 451.0 519.7 453.5 525.1 457.8 C530.4 462.0 534.2 468.5 536.6 475.0 C539.1 481.5 539.8 488.9 539.5 496.7 C539.2 504.4 535.6 517.3 534.8 521.5" fill="none" stroke="#7a7a7a" stroke-width="2.2399999999999998" stroke-linecap="round" stroke-linejoin="round"/><path d="M227.1 236.0 C230.1 240.9 238.4 255.2 244.8 265.5 C251.2 275.8 262.0 292.5 265.5 297.9 M20.6 300.0 C18.2 303.4 7.4 316.0 5.9 320.6 C4.4 325.3 2.9 326.0 11.8 328.0 C20.6 330.1 44.7 330.2 59.0 333.0 C73.3 335.8 87.5 340.5 97.3 344.8 C107.2 349.2 113.0 354.4 118.0 359.0 C123.0 363.6 125.9 370.1 127.4 372.3 M0.0 506.5 C1.5 496.7 1.5 463.2 8.8 447.5 C16.2 431.8 31.0 421.4 44.2 412.1 C57.5 402.8 72.3 396.9 88.5 391.4 C104.7 386.0 124.9 380.6 141.6 379.6 C158.3 378.7 174.0 381.1 188.8 385.5 C203.5 390.0 223.2 402.8 230.1 406.2 M103.2 382.6 C103.2 384.6 102.5 392.9 103.2 394.4 C104.0 395.9 106.9 391.9 107.7 391.4 M126.8 406.2 C133.2 403.7 152.4 391.9 165.2 391.4 C178.0 391.0 195.2 396.4 203.5 403.2 C211.9 410.1 214.8 421.4 215.3 432.7 C215.8 444.1 211.9 457.8 206.5 471.1 C201.1 484.4 190.8 497.6 182.9 512.4 C175.0 527.1 163.2 551.7 159.3 559.6 M177.0 412.1 C174.0 414.6 163.2 420.5 159.3 426.8 C155.4 433.2 152.4 447.5 153.4 450.4 C154.4 453.4 160.3 448.0 165.2 444.5 C170.1 441.1 175.0 432.7 182.9 429.8 C190.8 426.8 207.5 427.3 212.4 426.8 M188.8 453.4 C196.7 451.4 223.2 445.0 236.0 441.6 C248.8 438.2 253.2 436.7 265.5 432.7 C277.8 428.8 302.4 420.5 309.7 418.0 M0.0 482.9 C0.5 491.7 1.0 521.2 2.9 536.0 C4.9 550.7 7.4 561.1 11.8 571.4 C16.2 581.7 26.5 593.5 29.5 597.9 M70.8 509.4 C73.7 513.4 83.6 524.7 88.5 533.0 C93.4 541.4 96.6 550.0 100.3 559.6 C104.0 569.2 108.9 585.4 110.6 590.6 M129.8 536.0 C132.7 540.9 145.0 555.2 147.5 565.5 C150.0 575.8 145.0 592.5 144.5 597.9 M100.3 527.1 C108.2 525.2 132.7 521.7 147.5 515.3 C162.2 508.9 176.0 497.1 188.8 488.8 C201.6 480.4 218.3 469.1 224.2 465.2 M159.3 482.9 C167.2 481.4 188.8 473.1 206.5 474.0 C224.2 475.0 250.2 479.4 265.5 488.8 C280.7 498.1 285.6 524.2 297.9 530.1 C310.2 536.0 325.0 528.1 339.2 524.2 C353.5 520.3 376.1 509.4 383.5 506.5 M256.6 305.9 C257.1 312.8 253.2 333.4 259.6 347.2 C266.0 361.0 286.1 375.7 295.0 388.5 C303.8 401.3 307.8 412.1 312.7 423.9 C317.6 435.7 322.5 453.4 324.5 459.3 M295.0 541.9 C304.8 538.9 336.5 528.6 354.0 524.2 C371.5 519.8 392.3 516.8 400.0 515.3 M354.0 359.0 C358.4 360.5 372.9 367.4 380.5 367.8 C388.2 368.3 396.8 362.9 400.0 361.9 M324.5 503.5 C331.9 502.1 356.1 494.7 368.7 494.7 C381.3 494.7 394.8 502.1 400.0 503.5 M368.7 403.2 C370.7 405.2 379.1 411.6 380.5 415.0 C382.0 418.5 378.1 422.4 377.6 423.9 M367.8 300.0 C366.4 305.4 361.5 322.6 359.0 332.4 C356.5 342.3 350.6 352.6 353.1 359.0 C355.6 365.4 370.3 368.8 373.7 370.8 M459.3 300.0 C459.7 308.4 460.7 333.9 461.7 350.1 C462.6 366.4 463.6 384.1 465.2 397.3 C466.8 410.6 470.1 424.4 471.1 429.8 M518.3 412.1 C517.3 415.0 514.4 425.4 512.4 429.8 C510.4 434.2 510.4 437.4 506.5 438.6 C502.6 439.9 494.2 437.9 488.8 437.2 C483.4 436.4 476.5 434.7 474.0 434.2 M335.4 453.4 C346.7 454.4 379.6 459.5 403.2 459.3 C426.8 459.0 458.3 452.7 477.0 451.9 C495.7 451.2 508.9 454.4 515.3 454.9 M420.9 474.0 C432.7 472.6 473.5 464.7 491.7 465.2 C509.9 465.7 522.2 471.1 530.1 477.0 C538.0 482.9 539.4 491.7 538.9 500.6 C538.4 509.4 529.1 525.2 527.1 530.1 M300.0 530.1 C314.7 526.2 359.0 512.9 388.5 506.5 C418.0 500.1 462.2 494.2 477.0 491.7 M338.3 538.9 C351.6 533.5 392.9 513.9 418.0 506.5 C443.1 499.1 477.0 496.7 488.8 494.7 M326.5 503.5 C341.8 500.1 394.9 487.3 418.0 482.9 C441.1 478.5 457.3 478.0 465.2 477.0 M347.2 527.1 C354.1 525.7 374.2 522.2 388.5 518.3 C402.8 514.4 418.0 506.5 432.7 503.5 C447.5 500.6 469.6 501.1 477.0 500.6 M494.7 533.0 C496.7 530.6 503.0 522.7 506.5 518.3 C509.9 513.9 513.9 508.5 515.3 506.5 M418.0 359.0 C418.5 361.9 419.5 372.3 420.9 376.7 C422.4 381.1 424.1 383.3 426.8 385.5 C429.5 387.8 435.4 389.2 437.2 390.0 M300.0 338.3 C304.9 341.8 319.7 352.6 329.5 359.0 C339.3 365.4 354.1 373.7 359.0 376.7 M300.0 388.5 C304.9 388.0 317.7 383.1 329.5 385.5 C341.3 388.0 361.5 396.9 370.8 403.2 C380.1 409.6 382.6 415.5 385.5 423.9 C388.5 432.3 388.0 448.5 388.5 453.4 M367.8 404.7 C369.8 406.9 376.2 416.5 379.6 418.0 C383.1 419.5 386.5 416.0 388.5 413.6 C390.5 411.1 391.0 405.0 391.4 403.2 M471.1 435.7 C474.0 435.2 482.9 432.5 488.8 432.7 C494.7 433.0 503.5 436.4 506.5 437.2 M392.7 283.6 C394.6 285.1 399.4 290.4 403.8 292.5 C408.2 294.5 416.7 295.2 419.3 295.8 M390.5 305.8 C392.4 307.4 397.9 313.7 401.6 315.7 C405.3 317.7 410.8 317.6 412.7 317.9 M381.7 519.8 C388.6 516.8 410.5 506.4 423.1 501.8 C435.8 497.3 447.3 494.4 457.6 492.6 C467.9 490.8 476.2 491.6 484.9 491.1 C493.5 490.5 505.5 489.5 509.6 489.1 M380.8 517.7 C387.6 514.4 409.1 503.4 421.4 497.5 C433.6 491.6 444.5 486.1 454.3 482.2 C464.1 478.3 471.9 476.3 480.2 474.1 C488.5 471.9 496.6 470.7 504.2 469.2 C511.8 467.8 522.2 466.1 525.8 465.5 M427.2 512.0 C432.7 510.1 450.4 503.6 460.2 500.7 C470.0 497.9 477.7 496.8 485.9 494.9 C494.2 493.0 502.2 491.3 509.7 489.4 C517.1 487.6 527.1 484.7 530.6 483.8 M344.4 511.6 C348.0 511.2 358.6 510.0 366.1 508.9 C373.5 507.8 381.3 506.6 389.1 505.0 C396.8 503.4 404.7 501.3 412.6 499.1 C420.5 496.9 429.3 494.2 436.6 492.0 C444.0 489.8 450.9 487.7 456.7 486.0 C462.6 484.2 467.4 482.9 471.9 481.7 C476.3 480.4 480.3 479.3 483.5 478.5 C486.8 477.6 490.1 476.7 491.4 476.4 M389.1 505.3 C393.1 504.4 405.0 502.3 413.0 500.2 C421.0 498.2 429.7 495.3 437.0 493.0 C444.3 490.6 451.0 488.1 456.8 486.2 C462.6 484.2 467.3 482.5 471.7 481.2 C476.1 479.8 480.1 478.7 483.4 478.1 C486.7 477.4 490.3 477.4 491.7 477.3 M209.9 440.0 C212.4 439.4 219.5 437.7 224.8 436.3 C230.2 435.0 236.2 433.4 241.9 431.9 C247.5 430.4 253.3 428.8 258.5 427.4 C263.8 425.9 268.3 424.5 273.4 423.0 C278.4 421.5 283.8 419.9 289.0 418.3 C294.2 416.8 299.6 415.1 304.4 413.7 C309.2 412.3 313.9 410.9 317.8 409.8 C321.6 408.8 325.7 407.8 327.2 407.4 M211.2 444.9 C213.7 444.1 220.7 442.0 226.0 440.4 C231.3 438.9 237.3 437.1 242.9 435.5 C248.5 433.9 254.3 432.3 259.5 430.8 C264.8 429.3 269.3 428.0 274.4 426.6 C279.5 425.1 284.9 423.6 290.1 422.0 C295.3 420.5 300.8 418.9 305.5 417.4 C310.3 416.0 316.6 414.0 318.8 413.3 M367.1 328.6 C367.2 331.4 368.4 340.1 367.5 345.1 C366.5 350.0 363.5 354.7 361.4 358.4 C359.4 362.1 356.4 365.8 355.1 367.3 C353.7 368.8 352.7 367.3 353.6 367.6 C354.4 367.8 356.7 368.4 360.3 368.8 C363.9 369.1 372.8 369.7 375.3 369.9 M464.7 378.0 C465.2 381.5 466.8 392.5 467.6 398.8 C468.4 405.2 468.9 411.2 469.3 416.2 C469.8 421.1 470.0 424.9 470.3 428.4 C470.7 431.9 471.1 434.7 471.5 437.1 C472.0 439.4 472.9 441.7 473.2 442.6 M468.7 398.9 C472.6 397.0 485.8 389.6 492.3 387.6 C498.7 385.6 503.2 385.3 507.6 387.0 C511.9 388.7 515.9 392.9 518.4 397.9 C520.8 402.8 523.0 410.7 522.5 416.7 C521.9 422.8 519.8 430.3 515.2 434.4 C510.7 438.5 498.3 440.1 495.0 441.2 M483.0 509.1 C483.9 507.9 486.7 504.3 488.5 502.1 C490.2 499.8 492.1 497.5 493.6 495.6 C495.1 493.7 496.3 492.3 497.6 490.7 C498.8 489.1 500.0 487.7 501.0 486.2 C502.1 484.8 503.1 483.4 504.0 482.2 C504.8 480.9 505.9 479.3 506.3 478.8 M481.5 496.5 C482.5 495.5 485.5 492.2 487.2 490.5 C488.9 488.7 490.4 487.4 492.0 486.1 C493.5 484.7 495.0 483.5 496.4 482.4 C497.8 481.2 499.2 480.2 500.4 479.2 C501.6 478.2 502.7 477.3 503.7 476.6 C504.6 475.8 505.6 475.0 506.0 474.6 M255.3 365.5 C256.7 367.6 260.9 374.0 263.9 378.3 C266.8 382.7 269.9 387.5 273.2 391.7 C276.6 395.9 280.6 399.8 284.1 403.5 C287.6 407.1 291.5 410.2 294.4 413.4 C297.3 416.7 300.1 421.2 301.3 422.8 M466.2 454.1 C470.5 453.6 483.5 451.3 491.7 451.1 C500.0 451.0 509.0 450.5 515.5 453.1 C522.0 455.7 527.2 461.2 530.8 466.6 C534.3 471.9 535.9 482.2 536.9 485.3" fill="none" stroke="#7a7a7a" stroke-width="3.2" stroke-linecap="round" stroke-linejoin="round"/><path d="M0.0 46.6 C6.1 44.2 20.2 35.5 36.9 32.4 C53.6 29.4 73.0 24.8 100.3 28.0 C127.6 31.2 175.5 44.7 200.6 51.6 C225.7 58.5 238.9 63.2 250.7 69.3 C262.5 75.5 265.6 81.5 271.4 88.5 C277.2 95.5 283.2 107.7 285.5 111.5 M10.3 163.7 C14.0 166.9 27.3 175.8 32.4 182.9 C37.6 190.0 41.3 196.7 41.3 206.5 C41.3 216.3 36.4 231.8 32.4 241.9 C28.5 252.0 20.2 262.8 17.7 267.0 M230.1 423.9 C238.4 420.5 264.5 409.1 280.2 403.2 C296.0 397.3 309.2 390.0 324.5 388.5 C339.7 387.0 363.8 393.4 371.7 394.4 M460.8 403.8 C464.5 402.3 475.8 397.2 482.9 394.4 C490.0 391.6 498.6 386.5 503.5 387.0 C508.5 387.5 509.9 393.2 512.4 397.3 C514.8 401.5 517.3 409.6 518.3 412.1 M512.4 397.3 L521.2 418.0 M491.7 474.0 C493.7 477.0 500.1 486.3 503.5 491.7 C507.0 497.1 510.9 504.0 512.4 506.5 M506.5 545.4 L538.9 531.6 M359.0 521.2 C365.4 518.8 382.6 512.9 397.3 506.5 C412.1 500.1 439.1 486.8 447.5 482.9 M409.1 503.5 C415.5 502.1 435.2 496.7 447.5 494.7 C459.8 492.7 477.0 492.2 482.9 491.7 M471.1 518.3 C474.0 515.8 482.9 508.5 488.8 503.5 C494.7 498.6 503.5 491.2 506.5 488.8 M397.3 314.7 C398.3 315.3 400.8 318.0 403.2 318.3 C405.7 318.5 410.6 316.6 412.1 316.2 M364.9 373.7 C368.3 373.0 381.1 370.6 385.5 369.3 C390.0 368.1 390.5 366.9 391.4 366.4 M343.0 502.4 C346.5 501.7 357.0 500.1 364.1 498.3 C371.3 496.6 378.5 494.4 385.7 491.8 C392.9 489.2 400.0 485.9 407.4 482.8 C414.8 479.7 426.5 474.8 430.3 473.2 M271.0 405.7 C274.0 404.6 283.2 401.4 289.3 399.3 C295.3 397.1 301.3 394.8 307.2 392.6 C313.1 390.5 318.9 388.3 324.4 386.5 C329.9 384.7 337.6 382.7 340.3 382.0 M233.9 421.3 C236.8 420.3 245.1 417.4 251.5 415.5 C257.9 413.5 265.7 411.2 272.3 409.6 C278.9 408.0 284.8 406.9 291.0 405.7 C297.3 404.6 303.6 403.6 309.6 402.5 C315.7 401.4 324.4 399.7 327.3 399.2 M474.8 519.8 C475.5 519.2 477.2 517.5 478.8 515.9 C480.3 514.2 482.2 512.0 484.1 509.9 C486.0 507.8 488.1 505.4 489.9 503.2 C491.8 501.1 493.8 498.9 495.5 497.2 C497.2 495.4 498.6 494.1 500.0 492.7 C501.5 491.4 503.0 490.1 504.4 489.0 C505.8 487.9 507.2 486.9 508.5 486.0 C509.8 485.1 511.5 484.0 512.1 483.6" fill="none" stroke="#7a7a7a" stroke-width="4.4799999999999995" stroke-linecap="round" stroke-linejoin="round"/><path d="M292.1 186.0 L329.7 177.1 L323.8 163.9 L331.9 158.0 L393.1 160.2 L450.6 164.6 L461.2 175.7 L450.6 199.3 L428.5 204.4 L439.6 219.9 L440.3 233.2 L406.4 241.3 L393.1 230.2 L376.9 225.1 L309.0 237.6 L289.1 193.4 Z" fill="#7c7c7c" fill-opacity=".3"/><path d="M331.9 158.3 L393.1 160.2 L430.0 165.6 L419.6 174.5 L382.8 173.0 L357.7 178.6 L348.1 171.2 Z" fill="#6c6c6c" fill-opacity=".2"/><path d="M348.8 154.3 L354.7 143.2 L361.4 147.6 L366.5 149.1 L375.4 139.5 L387.2 134.4 L393.8 132.9 L390.1 138.8 L394.6 144.7 L399.0 146.9 L402.7 145.4 L404.2 149.1 L413.7 147.6 L422.6 147.6 L431.4 150.6 L439.6 145.9 L441.0 153.5 L444.7 156.5 L453.6 145.0 L454.3 158.7 L458.0 155.8 L461.7 163.9 L461.2 175.7 L456.5 188.9 L450.6 199.3 L428.5 204.4 L413.7 196.3" fill="none" stroke="#222" stroke-width="3.74" stroke-linecap="round" stroke-linejoin="round"/><path d="M331.9 158.3 C335.7 158.1 347.5 156.9 354.7 157.2 C362.0 157.6 369.0 159.7 375.4 160.2 C381.8 160.7 386.7 160.1 393.1 160.2 C399.5 160.3 407.6 159.7 413.7 160.6 C419.9 161.5 425.1 164.6 430.0 165.6 C434.9 166.7 439.8 167.3 443.2 167.1 C446.7 166.9 449.4 165.0 450.6 164.6" fill="none" stroke="#222" stroke-width="3.74" stroke-linecap="round" stroke-linejoin="round"/><path d="M331.9 158.3 C330.8 159.0 326.8 161.2 325.2 162.4 C323.7 163.6 323.0 164.2 322.6 165.6 C322.2 167.1 322.1 169.8 323.0 171.2 C324.0 172.7 327.3 173.7 328.2 174.2" fill="none" stroke="#222" stroke-width="3.5200000000000005" stroke-linecap="round" stroke-linejoin="round"/><path d="M323.0 165.6 C324.6 165.5 329.1 164.6 332.6 164.8 C336.2 165.0 340.6 165.8 344.4 166.8 C348.2 167.8 353.6 170.0 355.5 170.7" fill="none" stroke="#222" stroke-width="6.6000000000000005" stroke-linecap="round" stroke-linejoin="round"/><path d="M292.1 186.0 C293.4 185.6 297.1 184.5 300.2 183.8 C303.2 183.0 307.3 182.3 310.5 181.6 C313.7 180.8 316.2 180.1 319.3 179.4 C322.5 178.6 328.0 177.5 329.7 177.1" fill="none" stroke="#222" stroke-width="3.74" stroke-linecap="round" stroke-linejoin="round"/><path d="M292.1 186.0 C291.6 187.2 289.5 190.4 289.1 193.4 C288.7 196.3 288.9 200.3 289.8 203.7 C290.8 207.1 293.5 211.1 295.0 214.0 C296.5 217.0 297.3 218.9 298.7 221.4 C300.1 223.9 301.4 226.1 303.1 228.8 C304.8 231.5 308.0 236.1 309.0 237.6" fill="none" stroke="#222" stroke-width="4.18" stroke-linecap="round" stroke-linejoin="round"/><path d="M309.0 237.6 C311.7 237.1 318.1 236.1 325.2 234.7 C332.4 233.2 343.2 230.4 351.8 228.8 C360.4 227.2 372.0 227.8 376.9 225.1 C381.8 222.4 379.1 213.8 381.3 212.5 C383.5 211.2 388.1 215.7 390.1 217.3 C392.2 218.8 392.8 221.0 393.4 221.7" fill="none" stroke="#222" stroke-width="4.18" stroke-linecap="round" stroke-linejoin="round"/><path d="M295.7 212.5 C298.2 212.4 305.8 211.4 310.5 211.7 C315.2 211.9 319.8 213.9 323.8 214.0 C327.8 214.1 333.1 211.0 334.4 212.3 C335.7 213.5 333.4 219.2 331.4 221.4 C329.5 223.6 326.1 224.2 322.6 225.2 C319.1 226.3 313.7 227.0 310.5 227.6 C307.3 228.2 304.4 228.8 303.1 229.1" fill="none" stroke="#222" stroke-width="3.5200000000000005" stroke-linecap="round" stroke-linejoin="round"/><path d="M303.1 215.5 L307.0 223.2 L310.5 214.0 L314.9 221.7 L318.8 215.5 L323.2 221.7 L327.0 217.0 L331.4 215.5" fill="none" stroke="#222" stroke-width="3.08" stroke-linecap="round" stroke-linejoin="round"/><path d="M300.2 183.8 L303.1 191.9 L290.1 196.3" fill="none" stroke="#222" stroke-width="3.3000000000000003" stroke-linecap="round" stroke-linejoin="round"/><path d="M312.7 181.9 L315.8 190.4 L303.1 191.9" fill="none" stroke="#222" stroke-width="3.3000000000000003" stroke-linecap="round" stroke-linejoin="round"/><path d="M315.8 190.4 L329.7 188.2" fill="none" stroke="#222" stroke-width="3.08" stroke-linecap="round" stroke-linejoin="round"/><path d="M290.1 196.3 C291.1 196.6 294.3 196.8 295.7 197.8 C297.2 198.8 298.7 200.7 298.7 202.2 C298.7 203.7 296.2 205.9 295.7 206.6" fill="none" stroke="#222" stroke-width="2.8600000000000003" stroke-linecap="round" stroke-linejoin="round"/><path d="M295.7 221.4 L301.6 218.4 L305.3 224.3" fill="none" stroke="#222" stroke-width="2.8600000000000003" stroke-linecap="round" stroke-linejoin="round"/><path d="M335.9 180.1 C336.2 179.4 336.6 176.6 337.8 175.7 C339.0 174.7 341.2 174.1 342.9 174.5 C344.7 174.9 347.0 176.2 348.1 177.9 C349.2 179.6 349.8 182.6 349.6 184.5 C349.3 186.5 348.1 188.7 346.6 189.7 C345.2 190.7 342.5 191.2 340.7 190.7 C339.0 190.2 337.0 187.4 336.3 186.7 Z" fill="none" stroke="#222" stroke-width="3.5200000000000005" stroke-linecap="round" stroke-linejoin="round"/><path d="M340.3 177.1 C340.4 178.9 340.3 186.2 341.2 187.8 C342.1 189.3 344.7 188.3 345.6 186.6 C346.5 184.9 346.3 179.0 346.5 177.4 Z" fill="none" stroke="#222" stroke-width="3.3000000000000003" stroke-linecap="round" stroke-linejoin="round"/><path d="M332.6 175.7 C332.5 177.1 331.5 181.8 331.9 184.5 C332.3 187.2 333.0 190.3 334.8 191.9 C336.7 193.5 341.6 193.7 342.9 194.1" fill="none" stroke="#222" stroke-width="3.08" stroke-linecap="round" stroke-linejoin="round"/><path d="M310.5 198.5 C311.5 198.5 315.8 197.0 316.4 198.1 C317.0 199.1 315.0 203.9 314.2 204.9 C313.4 205.9 312.1 204.1 311.7 204.0 Z" fill="none" stroke="#222" stroke-width="3.5200000000000005" stroke-linecap="round" stroke-linejoin="round"/><path d="M321.6 199.3 C323.0 199.3 329.3 198.5 330.4 199.6 C331.6 200.7 329.8 205.0 328.5 205.9 C327.2 206.8 323.6 205.3 322.6 205.2 Z" fill="none" stroke="#222" stroke-width="3.5200000000000005" stroke-linecap="round" stroke-linejoin="round"/><path d="M337.8 199.3 C339.4 199.1 345.6 197.8 347.4 198.5 C349.2 199.3 349.9 202.6 348.6 203.7 C347.2 204.8 340.8 204.9 339.3 205.2 Z" fill="none" stroke="#222" stroke-width="3.5200000000000005" stroke-linecap="round" stroke-linejoin="round"/><path d="M353.3 193.4 C354.3 193.2 357.9 191.7 359.2 192.6 C360.4 193.6 361.4 197.8 360.6 199.3 C359.9 200.7 355.7 201.1 354.7 201.5 Z" fill="none" stroke="#222" stroke-width="3.5200000000000005" stroke-linecap="round" stroke-linejoin="round"/><path d="M363.6 191.9 C364.7 191.8 369.3 190.7 370.2 191.6 C371.2 192.5 370.0 196.5 369.2 197.5 C368.4 198.5 366.0 197.7 365.4 197.8 Z" fill="none" stroke="#222" stroke-width="3.5200000000000005" stroke-linecap="round" stroke-linejoin="round"/><path d="M363.6 209.0 C364.6 208.5 367.0 206.3 369.5 206.1 C372.0 205.8 375.4 207.9 378.3 207.5 C381.3 207.1 385.0 205.1 387.2 203.7 C389.4 202.3 390.6 200.0 391.3 199.3" fill="none" stroke="#222" stroke-width="3.74" stroke-linecap="round" stroke-linejoin="round"/><path d="M393.4 230.5 L413.7 221.7 L439.6 220.2 L440.6 233.5 L422.9 237.0 L406.7 241.5 Z" fill="none" stroke="#222" stroke-width="3.9600000000000004" stroke-linecap="round" stroke-linejoin="round"/><path d="M401.9 228.8 C402.9 229.1 406.1 231.0 407.8 230.5 C409.6 230.0 411.8 226.6 412.6 225.8" fill="none" stroke="#222" stroke-width="3.5200000000000005" stroke-linecap="round" stroke-linejoin="round"/><path d="M410.8 233.5 L419.9 228.8" fill="none" stroke="#222" stroke-width="3.08" stroke-linecap="round" stroke-linejoin="round"/><path d="M422.6 230.2 L431.4 228.8" fill="none" stroke="#222" stroke-width="2.64" stroke-linecap="round" stroke-linejoin="round"/><path d="M427.0 234.7 L435.9 224.3" fill="none" stroke="#222" stroke-width="2.64" stroke-linecap="round" stroke-linejoin="round"/><path d="M403.4 186.0 C404.6 185.1 407.6 181.5 410.8 180.4 C414.0 179.3 418.4 178.9 422.6 179.4 C426.8 179.8 432.2 181.2 435.9 183.0 C439.6 184.9 442.9 188.2 444.7 190.4 C446.5 192.6 448.2 195.8 446.5 196.3 C444.8 196.9 438.9 194.8 434.4 193.7 C429.9 192.5 422.1 190.0 419.6 189.2 Z" fill="none" stroke="#222" stroke-width="3.3000000000000003" stroke-linecap="round" stroke-linejoin="round"/><path d="M406.4 185.3 C408.8 185.2 416.0 184.0 421.1 184.8 C426.3 185.7 433.4 188.7 437.3 190.4 C441.3 192.1 443.5 194.4 444.7 195.1" fill="none" stroke="#222" stroke-width="2.64" stroke-linecap="round" stroke-linejoin="round"/><path d="M422.6 180.1 L426.3 185.3" fill="none" stroke="#222" stroke-width="2.4200000000000004" stroke-linecap="round" stroke-linejoin="round"/><path d="M430.0 181.9 L432.9 187.5" fill="none" stroke="#222" stroke-width="2.4200000000000004" stroke-linecap="round" stroke-linejoin="round"/><path d="M437.3 184.8 L438.8 190.4" fill="none" stroke="#222" stroke-width="2.4200000000000004" stroke-linecap="round" stroke-linejoin="round"/><path d="M399.0 193.4 C401.0 193.9 407.4 194.4 410.8 196.3 C414.2 198.3 417.6 202.0 419.6 205.2 C421.7 208.4 423.9 214.0 422.9 215.5 C421.9 217.0 417.0 216.0 413.7 214.0 C410.5 212.1 405.1 205.4 403.4 203.7 Z" fill="none" stroke="#222" stroke-width="3.3000000000000003" stroke-linecap="round" stroke-linejoin="round"/><path d="M401.2 195.1 C402.8 196.6 407.5 200.5 410.8 203.7 C414.1 206.8 419.4 212.3 421.1 214.0" fill="none" stroke="#222" stroke-width="2.64" stroke-linecap="round" stroke-linejoin="round"/><path d="M406.4 197.8 L405.6 203.7" fill="none" stroke="#222" stroke-width="2.4200000000000004" stroke-linecap="round" stroke-linejoin="round"/><path d="M412.3 200.7 L410.8 208.1" fill="none" stroke="#222" stroke-width="2.4200000000000004" stroke-linecap="round" stroke-linejoin="round"/><path d="M417.4 206.6 L416.0 213.3" fill="none" stroke="#222" stroke-width="2.4200000000000004" stroke-linecap="round" stroke-linejoin="round"/><path d="M390.1 186.0 C390.6 187.7 391.1 192.9 393.1 196.3 C395.1 199.8 398.5 203.5 401.9 206.6 C405.4 209.8 410.3 213.0 413.7 215.5 C417.2 218.0 421.1 220.4 422.6 221.4" fill="none" stroke="#222" stroke-width="3.3000000000000003" stroke-linecap="round" stroke-linejoin="round"/><path d="M393.7 187.8 L389.6 188.7 L391.8 191.9 L388.2 190.0 L387.2 193.6 L386.2 190.0 L382.6 191.9 L384.7 188.7 L380.7 187.8 L384.7 186.9 L382.6 183.6 L386.2 185.6 L387.2 181.9 L388.2 185.6 L391.8 183.6 L389.6 186.9 Z" fill="none" stroke="#222" stroke-width="2.4200000000000004" stroke-linecap="round" stroke-linejoin="round"/><path d="M385.4 186.7 C386.0 186.6 388.0 185.6 388.7 186.0 C389.3 186.4 389.8 188.6 389.4 189.2 C389.0 189.9 386.6 189.6 386.0 189.7 Z" fill="none" stroke="#222" stroke-width="2.8600000000000003" stroke-linecap="round" stroke-linejoin="round"/><path d="M378.3 185.3 L382.8 183.0 L384.2 178.6" fill="none" stroke="#222" stroke-width="2.2" stroke-linecap="round" stroke-linejoin="round"/><path d="M393.1 183.0 L399.0 181.9 L401.2 179.4" fill="none" stroke="#222" stroke-width="2.2" stroke-linecap="round" stroke-linejoin="round"/><path d="M408.6 264.9 C408.4 262.8 406.7 255.7 407.5 252.4 C408.4 249.1 411.5 246.5 413.7 245.0 C416.0 243.5 419.8 242.3 421.1 243.5 C422.5 244.7 422.6 249.4 421.9 252.4 C421.1 255.3 417.6 259.7 416.7 261.2 Z" fill="none" stroke="#222" stroke-width="3.3000000000000003" stroke-linecap="round" stroke-linejoin="round"/><path d="M424.8 264.9 C424.4 263.1 422.2 257.4 422.6 253.8 C423.0 250.3 425.3 245.8 427.0 243.8 C428.7 241.8 431.4 241.1 432.9 242.0 C434.4 243.0 436.1 246.8 435.9 249.7 C435.6 252.7 432.2 258.1 431.4 259.7 Z" fill="none" stroke="#222" stroke-width="3.3000000000000003" stroke-linecap="round" stroke-linejoin="round"/><path d="M409.3 263.4 L420.4 245.0" fill="none" stroke="#222" stroke-width="2.4200000000000004" stroke-linecap="round" stroke-linejoin="round"/><path d="M425.5 263.4 L432.2 243.5" fill="none" stroke="#222" stroke-width="2.4200000000000004" stroke-linecap="round" stroke-linejoin="round"/><path d="M408.8 256.2 L412.1 258.8 L416.2 259.1" fill="none" stroke="#222" stroke-width="1.9800000000000002" stroke-linecap="round" stroke-linejoin="round"/><path d="M424.5 255.2 L427.2 258.5 L430.7 257.6" fill="none" stroke="#222" stroke-width="1.9800000000000002" stroke-linecap="round" stroke-linejoin="round"/><path d="M411.1 252.5 L414.3 255.1 L418.4 255.4" fill="none" stroke="#222" stroke-width="1.9800000000000002" stroke-linecap="round" stroke-linejoin="round"/><path d="M425.9 251.2 L428.5 254.5 L432.1 253.6" fill="none" stroke="#222" stroke-width="1.9800000000000002" stroke-linecap="round" stroke-linejoin="round"/><path d="M413.3 248.8 L416.5 251.4 L420.6 251.7" fill="none" stroke="#222" stroke-width="1.9800000000000002" stroke-linecap="round" stroke-linejoin="round"/><path d="M427.2 247.2 L429.9 250.5 L433.4 249.6" fill="none" stroke="#222" stroke-width="1.9800000000000002" stroke-linecap="round" stroke-linejoin="round"/><path d="M422.9 236.4 L419.6 243.8" fill="none" stroke="#222" stroke-width="2.8600000000000003" stroke-linecap="round" stroke-linejoin="round"/><path d="M428.8 237.0 L430.0 242.9" fill="none" stroke="#222" stroke-width="2.8600000000000003" stroke-linecap="round" stroke-linejoin="round"/><path d="M350.3 158.3 L348.1 171.2" fill="none" stroke="#222" stroke-width="3.5200000000000005" stroke-linecap="round" stroke-linejoin="round"/><path d="M348.1 171.2 L357.7 178.6" fill="none" stroke="#222" stroke-width="3.5200000000000005" stroke-linecap="round" stroke-linejoin="round"/><path d="M363.6 159.7 L363.6 173.0" fill="none" stroke="#222" stroke-width="3.5200000000000005" stroke-linecap="round" stroke-linejoin="round"/><path d="M378.3 161.2 L369.5 174.5" fill="none" stroke="#222" stroke-width="3.5200000000000005" stroke-linecap="round" stroke-linejoin="round"/><path d="M393.1 162.4 L382.8 173.0" fill="none" stroke="#222" stroke-width="3.5200000000000005" stroke-linecap="round" stroke-linejoin="round"/><path d="M413.7 162.7 L401.9 174.5" fill="none" stroke="#222" stroke-width="3.5200000000000005" stroke-linecap="round" stroke-linejoin="round"/><path d="M428.5 166.5 L419.6 174.5" fill="none" stroke="#222" stroke-width="3.5200000000000005" stroke-linecap="round" stroke-linejoin="round"/><path d="M331.9 162.4 L350.3 161.8" fill="none" stroke="#222" stroke-width="2.8600000000000003" stroke-linecap="round" stroke-linejoin="round"/><path d="M357.7 178.6 C359.7 177.9 365.3 175.4 369.5 174.5 C373.7 173.6 379.3 172.8 382.8 173.0 C386.2 173.2 388.9 175.2 390.1 175.7" fill="none" stroke="#222" stroke-width="2.8600000000000003" stroke-linecap="round" stroke-linejoin="round"/><path d="M381.3 162.4 C382.3 164.9 385.7 173.2 387.2 177.1 C388.7 181.1 389.9 184.8 390.4 186.3" fill="none" stroke="#222" stroke-width="2.8600000000000003" stroke-linecap="round" stroke-linejoin="round"/><path d="M310.5 169.8 L316.4 171.5" fill="none" stroke="#222" stroke-width="2.4200000000000004" stroke-linecap="round" stroke-linejoin="round"/><path d="M309.8 174.9 L317.1 174.5" fill="none" stroke="#222" stroke-width="2.4200000000000004" stroke-linecap="round" stroke-linejoin="round"/><path d="M312.7 177.4 L317.9 176.4" fill="none" stroke="#222" stroke-width="2.4200000000000004" stroke-linecap="round" stroke-linejoin="round"/><path d="M372.4 179.4 C373.2 179.2 376.4 178.2 376.9 178.6 C377.4 179.0 375.6 181.3 375.4 181.9 Z" fill="none" stroke="#222" stroke-width="2.4200000000000004" stroke-linecap="round" stroke-linejoin="round"/><path d="M366.5 156.5 C369.5 155.8 377.9 153.1 384.2 152.1 C390.6 151.1 398.5 150.5 404.9 150.6 C411.3 150.7 417.7 151.6 422.6 152.8 C427.5 154.0 432.4 157.1 434.4 158.0" fill="none" stroke="#222" stroke-width="2.2" stroke-linecap="round" stroke-linejoin="round"/><path d="M434.4 158.0 C435.9 158.6 440.5 161.2 443.2 161.7 C445.9 162.2 449.4 161.0 450.6 160.9" fill="none" stroke="#222" stroke-width="2.64" stroke-linecap="round" stroke-linejoin="round"/></g></svg></div>
<div style="left:1633px;top:302px;width:284px;height:4px;background:repeating-conic-gradient(#2d2d2d 0 25%,#1e1e1e 0 50%) 0 0/4px 4px"></div>
<div style="left:1695px;top:193px;width:222px;height:44px;background:#1f1f1f"></div>
<svg style="left:1710px;top:208px;" width="14" height="14" viewBox="0 0 14 14"><circle cx="7" cy="7" r="6.2" fill="#ff0000"/></svg>
<div class="t" style="left:1739.2px;top:207.3px;font-size:12.5px;line-height:12.5px;color:#ffffff;letter-spacing:-0.56px;font-weight:bold;">1:00:02</div>
<svg style="left:1840px;top:199px;" width="32" height="32" viewBox="0 0 32 32"><circle cx="16" cy="16" r="15" fill="#a62fd0"/><rect x="11" y="11" width="10" height="10" fill="#fff"/></svg>
<svg style="left:1879px;top:200px;" width="30" height="30" viewBox="0 0 30 30"><circle cx="15" cy="15" r="14.5" fill="#343434"/><rect x="12" y="7.5" width="6" height="10" rx="2.6" fill="none" stroke="#e8e8e8" stroke-width="1.2"/><path d="M9.6 14 a5.4 5.4 0 0 0 10.8 0 M15 19.6 v3 M11.6 22.8 h6.8" fill="none" stroke="#e8e8e8" stroke-width="1.2"/><path d="M8 6.5 l15 17" stroke="#e8e8e8" stroke-width="1.2"/></svg>
<div style="left:1633px;top:305px;width:284px;height:1px;background:#14304c"></div>
<div style="left:1633px;top:306px;width:284px;height:1px;background:#6f9cc6"></div>
<div style="left:1633px;top:307px;width:284px;height:20px;background:#393738"></div>
<div class="t" style="left:1746.5px;top:312.3px;font-size:11.5px;line-height:11.5px;color:#e0e0e0;letter-spacing:-0.56px;">Layer</div>
<svg style="left:1886px;top:311px;" width="11" height="11" viewBox="0 0 11 11"><path d="M5.2 3.6 H1.6 V9.6 H9.2 V6.6 M5.2 6.2 L10 1.4 M6.8 1 H10.4 V4.6" fill="none" stroke="#bebebe" stroke-width="1.25"/></svg>
<svg style="left:1903px;top:311px;" width="10" height="10" viewBox="0 0 10 10"><path d="M1.4 1.4 l7.2 7.2 M8.6 1.4 l-7.2 7.2" stroke="#c9c9c9" stroke-width="2.7"/></svg>
<div style="left:1633px;top:328px;width:284px;height:632px;background:#252525"></div>
<div class="t" style="left:1638.7px;top:336.0px;font-size:11.5px;line-height:11.5px;color:#e0e0e0;letter-spacing:-0.46px;">Opacity</div>
<div style="left:1710px;top:334px;width:163px;height:15px;background:#fff;border:1px solid #dcdcdc"></div>
<div style="left:1711px;top:335px;width:50px;height:13px;background:linear-gradient(90deg,#86caf8,#5eaee8)"></div>
<div class="t" style="left:1878.5px;top:335.5px;font-size:12px;line-height:12px;color:#e0e0e0;letter-spacing:-0.38px;">32 %</div>
<div class="t" style="left:1638.7px;top:361.4px;font-size:11.0px;line-height:11.0px;color:#e0e0e0;letter-spacing:-0.48px;">Blending</div>
<div style="left:1712px;top:356px;width:198px;height:21px;background:#4a4849;border-radius:3px"></div>
<div class="t" style="left:1714.6px;top:361.4px;font-size:11.0px;line-height:11.0px;color:#e0e0e0;letter-spacing:-0.49px;">Normal</div>
<svg style="left:1898px;top:364px;" width="8" height="6" viewBox="0 0 8 6"><path d="M0 .5 h7 l-3.5 4 z" fill="#bdbdbd"/></svg>
<svg style="left:1642px;top:387px;" width="11" height="11" viewBox="0 0 11 11"><rect x=".5" y=".5" width="10" height="10" fill="none" stroke="#e6e6e6"/></svg>
<div class="t" style="left:1658.4px;top:387.0px;font-size:12px;line-height:12px;color:#e0e0e0;letter-spacing:-0.55px;">Protect Alpha</div>
<svg style="left:1736px;top:387px;" width="11" height="11" viewBox="0 0 11 11"><rect x=".5" y=".5" width="10" height="10" fill="none" stroke="#e6e6e6"/></svg>
<div class="t" style="left:1752.5px;top:387.5px;font-size:11.5px;line-height:11.5px;color:#e0e0e0;letter-spacing:-0.67px;">Clipping</div>
<svg style="left:1828px;top:387px;" width="11" height="11" viewBox="0 0 11 11"><rect x=".5" y=".5" width="10" height="10" fill="none" stroke="#e6e6e6"/></svg>
<div class="t" style="left:1844.4px;top:387.9px;font-size:11.0px;line-height:11.0px;color:#e0e0e0;letter-spacing:-0.68px;">Lock</div>
<div style="left:1636px;top:406px;width:259px;height:518px;background:#4a4849;border-top:1px solid #222"></div>
<div style="left:1636px;top:407px;width:258px;height:40px;background:#5f5f5f;border-bottom:1px solid #262626"></div>
<svg style="left:1639px;top:420px;" width="12" height="12" viewBox="0 0 12 12"><circle cx="6" cy="6" r="5.1" fill="#c6c6c6"/><circle cx="6" cy="6" r="2.7" fill="#ececec"/></svg>
<div style="left:1670px;top:414px;width:34px;height:25px;background-color:#fff;background-image:linear-gradient(45deg,#e0e0e0 25%,transparent 25%,transparent 75%,#e0e0e0 75%),linear-gradient(45deg,#e0e0e0 25%,transparent 25%,transparent 75%,#e0e0e0 75%);background-size:8px 8px;background-position:0 0,4px 4px;overflow:hidden"></div>
<div class="t" style="left:1721.5px;top:419.6px;font-size:13px;line-height:13px;color:#f6f6f6;letter-spacing:-0.19px;">pierka accessories</div>
<div style="left:1636px;top:447px;width:258px;height:40px;background:#5f5f5f;border-bottom:1px solid #262626"></div>
<div style="left:1670px;top:454px;width:34px;height:25px;background-color:#fff;background-image:linear-gradient(45deg,#e0e0e0 25%,transparent 25%,transparent 75%,#e0e0e0 75%),linear-gradient(45deg,#e0e0e0 25%,transparent 25%,transparent 75%,#e0e0e0 75%);background-size:8px 8px;background-position:0 0,4px 4px;overflow:hidden"></div>
<div class="t" style="left:1721.5px;top:459.6px;font-size:13px;line-height:13px;color:#f6f6f6;letter-spacing:-0.17px;">dolna celust</div>
<div style="left:1636px;top:487px;width:258px;height:40px;background:#5f5f5f;border-bottom:1px solid #262626"></div>
<svg style="left:1639px;top:500px;" width="12" height="12" viewBox="0 0 12 12"><circle cx="6" cy="6" r="5.1" fill="#c6c6c6"/><circle cx="6" cy="6" r="2.7" fill="#ececec"/></svg>
<div style="left:1670px;top:494px;width:34px;height:25px;background-color:#fff;background-image:linear-gradient(45deg,#e0e0e0 25%,transparent 25%,transparent 75%,#e0e0e0 75%),linear-gradient(45deg,#e0e0e0 25%,transparent 25%,transparent 75%,#e0e0e0 75%);background-size:8px 8px;background-position:0 0,4px 4px;overflow:hidden"></div>
<div class="t" style="left:1721.5px;top:499.6px;font-size:13px;line-height:13px;color:#f6f6f6;letter-spacing:-0.18px;">oko rohy ucho snurka</div>
<div style="left:1636px;top:527px;width:258px;height:40px;background:#5f5f5f;border-bottom:1px solid #262626"></div>
<div style="left:1655px;top:527px;width:239px;height:39px;background:#4f9bd5"></div>
<svg style="left:1639px;top:540px;" width="12" height="12" viewBox="0 0 12 12"><circle cx="6" cy="6" r="5.1" fill="#c6c6c6"/><circle cx="6" cy="6" r="2.7" fill="#ececec"/></svg>
<div style="left:1670px;top:534px;width:34px;height:25px;background-color:#fff;background-image:linear-gradient(45deg,#e0e0e0 25%,transparent 25%,transparent 75%,#e0e0e0 75%),linear-gradient(45deg,#e0e0e0 25%,transparent 25%,transparent 75%,#e0e0e0 75%);background-size:8px 8px;background-position:0 0,4px 4px;overflow:hidden"><svg style="left:0;top:0" width="34" height="25" viewBox="0 0 801 600"><g stroke-width="6"><g opacity=".8"><path d="M302.4 118.0 C296.2 125.9 277.0 147.5 265.5 165.2 C253.9 182.9 238.4 214.4 233.0 224.2 M236.0 193.2 C238.4 191.5 246.8 186.1 250.7 182.9 C254.7 179.7 258.1 175.5 259.6 174.0 M227.1 236.0 L236.0 238.9 M253.7 253.7 C256.6 253.2 266.2 252.9 271.4 250.7 C276.5 248.5 284.2 238.4 284.7 240.4 C285.2 242.4 277.5 255.4 274.3 262.5 C271.1 269.7 267.0 279.7 265.5 283.2 M35.4 271.4 C35.2 273.8 34.9 281.4 33.9 286.1 C32.9 290.9 30.2 297.7 29.5 300.0 M295.0 261.1 C297.9 264.7 307.8 276.7 312.7 283.2 C317.6 289.7 322.5 297.2 324.5 300.0 M359.9 259.6 C360.9 263.0 365.3 273.5 365.8 280.2 C366.3 287.0 363.3 296.7 362.8 300.0 M380.5 265.5 L377.6 300.0 M106.2 369.3 C99.3 374.0 77.2 385.8 64.9 397.3 C52.6 408.9 39.8 425.9 32.4 438.6 C25.1 451.4 22.6 468.1 20.6 474.0 M103.2 450.4 C107.2 444.1 114.6 421.4 126.8 412.1 C139.1 402.8 163.7 394.4 177.0 394.4 C190.3 394.4 200.6 404.2 206.5 412.1 C212.4 420.0 211.4 436.7 212.4 441.6 M67.8 516.8 L97.3 533.0 M123.9 538.9 C130.8 536.5 151.4 532.5 165.2 524.2 C179.0 515.8 199.6 494.7 206.5 488.8 M165.2 488.8 C169.1 486.8 181.9 480.9 188.8 477.0 C195.7 473.1 204.0 469.1 206.5 465.2 C208.9 461.3 204.0 455.4 203.5 453.4 M182.9 547.8 C186.8 550.7 200.1 557.1 206.5 565.5 C212.9 573.8 218.8 592.5 221.2 597.9 M156.3 562.5 C159.8 559.6 169.6 554.2 177.0 544.8 C184.4 535.5 193.7 519.8 200.6 506.5 C207.5 493.2 215.3 472.1 218.3 465.2 M253.7 350.1 C255.7 351.6 262.0 358.5 265.5 359.0 C268.9 359.5 271.4 351.1 274.3 353.1 C277.3 355.1 281.7 367.8 283.2 370.8 M262.5 308.8 C266.0 310.3 275.8 310.8 283.2 317.7 C290.6 324.6 296.0 340.8 306.8 350.1 C317.6 359.5 341.2 369.8 348.1 373.7 M215.3 488.8 C228.6 487.8 267.0 482.4 295.0 482.9 C323.0 483.4 368.7 490.3 383.5 491.7 M224.2 465.2 C229.1 469.1 241.9 483.9 253.7 488.8 C265.5 493.7 278.3 494.7 295.0 494.7 C311.7 494.7 336.5 487.8 354.0 488.8 C371.5 489.8 392.3 498.6 400.0 500.6 M218.3 482.9 C226.2 486.8 252.7 499.6 265.5 506.5 C278.3 513.4 290.1 521.2 295.0 524.2 M94.4 491.7 C96.4 491.2 102.3 491.2 106.2 488.8 C110.1 486.3 117.0 476.0 118.0 477.0 C119.0 478.0 115.5 490.3 112.1 494.7 C108.7 499.1 99.8 502.1 97.3 503.5 M103.2 482.9 C105.2 484.4 116.0 489.3 115.0 491.7 C114.1 494.2 100.3 496.7 97.3 497.6 M265.5 441.6 C266.5 445.5 270.6 458.8 271.4 465.2 C272.1 471.6 270.2 477.5 269.9 479.9 M280.2 459.3 L286.1 477.0 M300.9 465.2 C300.4 471.1 298.4 491.7 297.9 500.6 C297.4 509.4 297.9 515.3 297.9 518.3 M315.6 441.6 C316.6 445.5 322.0 458.3 321.5 465.2 C321.0 472.1 318.1 479.0 312.7 482.9 C307.3 486.8 293.0 487.8 289.1 488.8 M188.8 550.7 C191.7 552.2 201.6 555.2 206.5 559.6 C211.4 564.0 216.3 574.3 218.3 577.3 M333.3 338.3 C334.3 341.8 334.8 352.6 339.2 359.0 C343.7 365.4 356.4 373.7 359.9 376.7 M339.2 447.5 C344.6 445.0 361.6 435.7 371.7 432.7 C381.8 429.8 395.3 430.3 400.0 429.8 M373.7 300.0 C372.8 304.4 369.6 317.7 367.8 326.5 C366.1 335.4 364.2 348.7 363.4 353.1 M382.6 300.0 C381.6 304.9 382.6 318.7 376.7 329.5 C370.8 340.3 352.1 359.0 347.2 364.9 M453.4 305.9 C453.9 314.7 455.1 342.8 456.3 359.0 C457.6 375.2 460.0 395.9 460.8 403.2 M447.5 338.3 C446.0 344.2 441.1 362.9 438.6 373.7 C436.2 384.6 432.7 390.0 432.7 403.2 C432.7 416.5 437.7 445.0 438.6 453.4 M426.8 317.7 C425.4 322.1 422.9 334.4 418.0 344.2 C413.1 354.1 404.7 366.9 397.3 376.7 C390.0 386.5 377.7 398.8 373.7 403.2 M518.3 429.8 L521.2 438.6 M300.0 488.8 C305.9 489.3 323.1 489.3 335.4 491.7 C347.7 494.2 367.4 501.6 373.7 503.5 M329.5 506.5 C339.3 504.5 369.8 497.6 388.5 494.7 C407.2 491.7 432.7 489.8 441.6 488.8 M506.5 530.1 L515.3 518.3 M398.8 394.4 C399.1 393.4 399.1 390.0 400.3 388.5 C401.5 387.0 404.3 385.3 406.2 385.5 C408.1 385.8 410.8 387.8 411.5 390.0 C412.2 392.2 411.9 396.9 410.6 398.8 C409.3 400.8 405.8 402.5 403.8 401.8 C401.9 401.0 399.7 395.6 398.8 394.4 M403.8 393.8 C404.3 393.5 406.1 391.8 406.8 392.0 C407.5 392.2 407.8 394.5 408.0 395.0 M426.8 356.0 C427.3 359.0 427.8 368.8 429.8 373.7 C431.8 378.7 437.2 383.6 438.6 385.5 M335.4 450.4 C339.3 447.5 350.6 435.2 359.0 432.7 C367.4 430.3 381.1 435.2 385.5 435.7 M314.7 429.8 C315.7 432.7 319.2 442.1 320.6 447.5 C322.1 452.9 323.1 459.8 323.6 462.2 M323.6 397.3 C327.0 396.4 336.4 391.9 344.2 391.4 C352.1 391.0 366.4 393.9 370.8 394.4 M308.8 388.5 C310.3 392.4 315.2 405.7 317.7 412.1 C320.2 418.5 322.6 424.4 323.6 426.8 M418.0 438.6 L423.9 447.5 M530.1 465.2 C531.1 468.1 534.3 477.5 536.0 482.9 C537.7 488.3 539.7 495.2 540.4 497.6 M347.2 335.4 L359.0 367.8 M329.5 329.5 L341.3 353.1 M300.0 308.8 C302.9 313.3 310.3 326.1 317.7 335.4 C325.1 344.7 336.9 357.8 344.2 364.9 C351.6 372.0 359.0 376.0 361.9 378.2 M302.0 118.8 C298.7 122.7 289.1 134.1 282.1 142.0 C275.1 150.0 263.7 162.3 260.0 166.4 M275.5 100.0 L286.5 111.1 M260.0 252.7 C262.2 251.9 269.4 250.1 273.3 248.2 C277.1 246.4 283.2 239.0 283.2 241.6 C283.2 244.2 276.4 256.0 273.3 263.7 C270.1 271.5 265.9 284.0 264.4 288.1 M260.0 294.7 C262.2 297.3 269.6 305.1 273.3 310.2 C277.0 315.2 280.6 322.5 282.1 325.0 M459.1 197.3 C460.6 198.5 466.7 199.6 468.0 204.0 C469.3 208.4 467.2 217.6 466.9 223.9 C466.5 230.2 463.7 235.9 465.8 241.6 C467.8 247.3 476.8 255.4 479.0 258.2 M445.8 259.3 L465.8 257.1 M472.4 263.7 C469.1 267.0 455.1 277.0 452.5 283.6 C449.9 290.3 455.8 296.6 456.9 303.5 C458.0 310.4 458.7 321.4 459.1 325.0 M414.9 270.8 L428.1 268.6 M364.0 241.6 C365.8 247.5 374.7 263.3 375.0 277.0 C375.4 290.6 367.7 315.7 366.2 323.5 M359.6 243.8 C360.3 250.1 364.4 273.3 364.0 281.4 C363.6 289.5 358.5 290.6 357.3 292.5 M392.7 237.2 C392.4 243.8 392.7 262.6 390.5 277.0 C388.3 291.4 381.3 315.7 379.5 323.5 M383.9 263.7 C383.2 269.6 380.9 288.9 379.5 299.1 C378.0 309.3 375.8 320.7 375.0 325.0 M434.8 270.4 C434.2 275.1 432.6 290.0 431.5 299.1 C430.4 308.2 428.7 320.7 428.1 325.0 M452.5 210.6 C451.0 212.8 445.8 219.5 443.6 223.9 C441.4 228.3 439.9 235.0 439.2 237.2 M372.8 263.7 C373.9 263.9 377.3 265.2 379.5 264.8 C381.7 264.5 385.0 262.1 386.1 261.5 M370.6 215.0 C370.3 217.3 367.7 223.9 368.4 228.3 C369.1 232.7 373.9 239.4 375.0 241.6 M320.7 528.7 C327.0 526.9 345.5 522.3 358.6 517.9 C371.7 513.6 385.9 507.6 399.2 502.5 C412.6 497.4 427.2 491.3 438.7 487.4 C450.1 483.4 459.2 481.1 468.1 478.7 C477.1 476.2 484.4 474.6 492.4 472.5 C500.3 470.5 511.8 467.5 515.7 466.5 M417.9 488.9 C423.6 486.6 441.9 478.4 452.1 475.3 C462.3 472.2 470.4 471.1 479.1 470.3 C487.9 469.4 496.4 470.1 504.5 470.3 C512.5 470.5 523.5 471.2 527.4 471.3 M295.0 545.6 C299.8 544.6 312.5 542.8 323.7 540.0 C334.9 537.2 349.2 533.6 362.4 528.7 C375.5 523.8 389.6 516.8 402.6 510.6 C415.6 504.4 429.3 496.9 440.2 491.6 C451.1 486.3 459.6 482.4 468.2 478.8 C476.7 475.2 483.8 472.4 491.6 469.8 C499.4 467.2 510.9 464.2 514.8 463.1 M405.1 516.7 C411.5 513.9 432.1 504.2 443.2 499.8 C454.3 495.4 462.7 492.6 471.5 490.5 C480.4 488.4 488.2 487.8 496.4 487.1 C504.6 486.5 513.9 486.6 521.0 486.7 C528.1 486.7 535.9 487.3 538.9 487.5 M436.0 480.2 C440.8 477.8 456.1 470.8 464.5 466.0 C472.9 461.2 479.1 455.6 486.5 451.5 C494.0 447.4 502.5 443.5 509.1 441.4 C515.7 439.4 523.5 439.7 526.3 439.3 M427.9 513.6 C433.6 512.5 452.2 508.7 462.1 506.7 C472.1 504.7 479.6 503.6 487.7 501.5 C495.9 499.4 503.6 496.3 510.9 494.1 C518.3 491.8 528.2 489.1 531.7 488.1 M396.1 487.2 C400.0 485.9 411.9 482.1 419.5 479.6 C427.1 477.0 435.2 473.9 441.8 471.7 C448.4 469.4 454.0 467.5 459.2 465.9 C464.3 464.3 468.8 463.0 472.7 461.9 C476.6 460.9 480.9 459.9 482.5 459.5 M251.5 495.4 C254.0 496.9 261.4 501.1 266.7 504.8 C272.0 508.4 277.6 513.1 283.3 517.1 C289.0 521.1 294.8 525.5 301.2 528.8 C307.6 532.1 314.9 534.9 321.7 536.9 C328.5 538.9 336.2 540.0 341.9 540.8 C347.6 541.6 353.5 541.5 355.8 541.6 M236.5 490.4 C238.8 491.6 245.5 495.5 250.5 498.0 C255.5 500.5 260.7 503.0 266.5 505.4 C272.2 507.7 278.7 510.2 284.9 512.4 C291.2 514.6 297.4 516.6 304.0 518.4 C310.6 520.3 317.7 521.9 324.4 523.6 C331.0 525.3 338.6 527.1 344.0 528.9 C349.5 530.6 355.0 533.1 357.2 534.0 M251.9 470.5 C254.7 470.9 262.7 472.3 268.7 473.1 C274.7 473.8 281.5 474.4 287.9 475.1 C294.2 475.7 300.8 476.3 306.8 476.9 C312.7 477.6 317.6 478.1 323.5 479.2 C329.5 480.3 336.6 481.9 342.5 483.5 C348.5 485.1 356.6 487.8 359.4 488.7 M226.0 461.8 C227.8 462.6 233.0 464.7 237.2 466.3 C241.5 468.0 246.4 469.9 251.4 471.9 C256.3 473.8 261.4 475.7 266.9 477.9 C272.4 480.1 278.4 482.6 284.3 484.9 C290.2 487.1 296.3 489.5 302.1 491.5 C308.0 493.5 313.3 495.1 319.5 496.7 C325.7 498.3 333.1 499.8 339.3 501.1 C345.5 502.5 353.7 504.1 356.6 504.6 M217.4 502.1 C219.6 502.7 226.1 504.7 231.0 505.8 C235.9 506.9 241.4 507.1 246.8 508.6 C252.1 510.1 257.4 511.9 262.9 514.9 C268.4 517.9 274.1 522.4 280.0 526.5 C285.9 530.6 295.2 537.5 298.2 539.7 M248.1 504.9 C250.5 506.7 257.1 512.6 262.5 516.0 C267.9 519.4 274.1 522.9 280.5 525.2 C286.9 527.4 293.9 528.7 300.9 529.7 C308.0 530.7 315.8 530.5 322.8 531.3 C329.8 532.0 339.7 533.8 343.1 534.3 M277.8 489.9 C281.4 489.8 292.3 489.6 299.8 489.3 C307.2 489.0 314.7 488.2 322.4 487.9 C330.1 487.5 337.7 487.1 346.2 487.3 C354.7 487.5 365.1 488.4 373.6 489.2 C382.0 490.0 393.0 491.6 396.9 492.1 M278.1 496.2 C281.8 496.1 292.8 495.4 300.2 495.4 C307.6 495.3 314.9 495.6 322.3 496.1 C329.7 496.5 336.5 497.4 344.6 498.3 C352.7 499.1 362.6 500.6 370.9 501.4 C379.2 502.2 390.5 503.0 394.4 503.3 M256.7 480.2 C260.1 480.2 270.1 480.4 277.2 480.3 C284.2 480.2 291.5 479.7 299.1 479.6 C306.6 479.5 314.5 479.1 322.5 479.4 C330.5 479.8 338.4 480.5 347.1 481.7 C355.7 482.8 365.8 484.9 374.1 486.5 C382.5 488.1 393.3 490.3 397.2 491.1 M267.1 482.5 C270.6 482.4 280.7 481.8 288.0 481.5 C295.3 481.2 303.0 481.0 310.7 481.0 C318.4 481.0 325.9 481.0 334.3 481.5 C342.6 481.9 351.8 482.9 360.7 483.6 C369.5 484.3 379.8 485.3 387.4 485.6 C395.0 486.0 403.0 485.7 406.2 485.7 M211.6 494.4 C213.9 494.6 219.9 495.6 225.6 495.8 C231.4 496.0 239.0 496.2 245.9 495.8 C252.9 495.4 260.3 494.5 267.4 493.3 C274.5 492.2 281.3 490.2 288.6 488.9 C295.8 487.6 307.2 485.9 310.9 485.3 M251.5 415.5 C254.8 414.0 265.0 409.3 271.4 406.8 C277.7 404.3 283.5 402.4 289.6 400.5 C295.7 398.6 301.9 397.1 307.9 395.5 C313.9 393.8 322.5 391.5 325.4 390.7 M199.2 441.9 C200.9 441.1 205.0 438.8 209.1 437.1 C213.1 435.3 218.3 433.2 223.5 431.5 C228.7 429.7 234.7 427.9 240.3 426.5 C245.9 425.0 251.9 423.8 257.2 422.6 C262.5 421.4 269.7 419.8 272.2 419.3 M345.2 306.4 C346.2 308.1 349.1 312.4 351.3 316.4 C353.6 320.5 356.7 326.1 358.7 330.9 C360.6 335.6 362.9 340.5 363.1 344.9 C363.3 349.4 361.4 353.8 359.8 357.4 C358.3 361.1 355.0 364.6 353.7 366.6 C352.4 368.5 351.0 368.3 352.1 369.0 C353.1 369.7 358.8 370.5 360.2 370.8 M365.9 352.6 C365.3 355.0 363.5 363.8 362.8 366.7 C362.0 369.6 362.4 370.7 361.4 370.0 C360.3 369.3 355.4 363.5 356.4 362.5 C357.4 361.5 365.8 363.7 367.6 364.0 M351.0 347.4 C350.5 349.0 349.0 353.6 348.2 357.1 C347.4 360.5 345.3 365.4 346.2 368.2 C347.0 370.9 349.9 372.5 353.4 373.5 C357.0 374.5 362.8 373.8 367.6 373.9 C372.4 374.0 379.8 374.0 382.2 374.0 M361.4 330.2 C362.3 332.6 366.2 339.9 367.0 345.1 C367.7 350.2 366.7 356.6 365.7 360.9 C364.8 365.1 362.6 370.2 361.2 370.7 C359.9 371.1 358.3 364.8 357.7 363.6 M459.2 348.3 C459.5 351.6 460.2 361.1 460.7 367.9 C461.3 374.7 461.8 382.3 462.4 389.0 C463.0 395.8 463.7 403.0 464.3 408.7 C465.0 414.4 465.7 419.0 466.4 423.2 C467.1 427.3 467.9 430.5 468.7 433.4 C469.5 436.2 470.7 439.2 471.1 440.3 M459.6 310.5 C459.6 313.4 459.5 321.5 459.7 327.7 C459.9 334.0 460.1 341.5 460.7 348.2 C461.2 354.8 462.0 360.9 463.0 367.7 C464.1 374.4 465.6 381.8 467.0 388.5 C468.3 395.2 470.0 402.3 471.2 407.9 C472.4 413.5 473.8 419.9 474.3 422.3 M420.8 360.0 C420.3 363.6 419.0 375.2 417.9 381.7 C416.7 388.2 415.5 393.7 413.9 398.9 C412.3 404.1 410.7 408.6 408.3 412.7 C405.8 416.8 403.5 419.9 399.1 423.7 C394.7 427.4 388.3 431.2 381.6 435.2 C374.9 439.1 365.5 443.6 358.9 447.2 C352.3 450.8 345.0 455.1 342.2 456.6 M422.3 372.2 C421.8 375.4 420.1 385.5 419.0 391.5 C417.9 397.4 417.2 402.7 415.7 407.9 C414.1 413.0 412.9 417.6 409.9 422.5 C406.9 427.3 403.3 432.0 397.7 437.0 C392.1 441.9 383.4 447.5 376.4 452.1 C369.5 456.7 359.3 462.6 355.9 464.7 M416.4 381.3 C415.2 384.0 412.2 393.0 409.6 397.5 C406.9 402.1 403.6 405.7 400.5 408.6 C397.3 411.6 394.8 412.6 390.5 415.3 C386.3 418.0 377.5 423.2 374.9 424.7 M453.7 322.9 C453.5 325.8 453.0 333.1 452.4 340.1 C451.8 347.0 451.0 356.8 449.9 364.9 C448.9 373.1 447.4 381.8 446.0 388.9 C444.7 396.1 443.7 401.3 442.0 407.6 C440.2 413.9 438.8 420.3 435.6 426.8 C432.3 433.3 424.8 443.4 422.7 446.7 M433.4 362.1 C432.8 365.9 431.3 378.1 429.9 384.8 C428.6 391.5 427.3 396.9 425.4 402.5 C423.5 408.0 421.6 413.2 418.5 418.0 C415.4 422.8 412.1 427.0 406.9 431.3 C401.6 435.5 394.3 439.6 387.1 443.7 C379.8 447.7 370.2 452.0 363.4 455.4 C356.7 458.8 349.3 462.7 346.5 464.2 M372.6 434.5 C374.3 432.7 380.9 425.8 382.9 423.4 C385.0 420.9 384.2 417.1 384.9 419.9 C385.6 422.7 387.0 432.8 386.9 440.2 C386.8 447.6 386.8 458.8 384.3 464.4 C381.9 470.0 376.4 471.6 372.4 473.7 C368.5 475.8 362.7 476.3 360.7 476.9 M385.1 419.4 C385.3 420.7 386.5 421.5 386.5 427.2 C386.4 432.9 386.3 447.0 384.9 453.8 C383.4 460.5 381.2 464.7 377.8 467.7 C374.5 470.6 366.8 470.8 364.6 471.4 M341.6 444.3 C344.7 442.5 355.1 436.7 360.3 433.3 C365.6 429.9 369.3 427.2 373.0 423.9 C376.7 420.7 379.3 413.3 382.7 413.8 C386.0 414.3 391.5 420.0 393.1 426.9 C394.7 433.7 394.0 447.0 392.2 454.9 C390.4 462.8 386.6 470.2 382.2 474.2 C377.9 478.1 368.8 477.9 366.1 478.6 M482.9 395.9 C485.8 395.0 496.1 390.8 500.6 390.5 C505.2 390.2 507.4 391.0 510.1 394.0 C512.8 397.0 515.9 403.4 516.7 408.4 C517.6 413.4 517.2 419.3 515.3 423.8 C513.4 428.2 511.0 433.5 505.4 435.2 C499.9 436.8 485.9 433.8 482.0 433.5 M294.1 403.3 C296.0 404.9 302.0 409.0 305.2 412.6 C308.5 416.2 311.1 420.0 313.6 425.0 C316.1 430.0 318.1 437.0 320.0 442.6 C321.8 448.3 323.9 456.2 324.7 458.9 M271.8 393.0 C274.0 394.6 280.6 399.6 284.9 402.5 C289.1 405.4 293.7 407.6 297.3 410.5 C300.9 413.4 304.0 415.8 306.6 419.8 C309.1 423.9 310.9 429.3 312.4 434.8 C313.9 440.3 314.9 447.6 315.8 452.8 C316.7 458.0 317.5 463.9 317.8 466.1 M275.8 378.8 C277.4 380.7 282.0 386.6 285.6 390.0 C289.3 393.4 293.7 396.0 297.7 399.2 C301.8 402.3 306.3 405.0 309.9 408.9 C313.5 412.9 316.7 417.4 319.1 422.9 C321.5 428.4 323.4 438.5 324.2 441.7 M271.8 325.2 C273.9 327.3 279.8 333.7 284.1 337.4 C288.3 341.2 292.6 344.1 297.4 347.6 C302.2 351.1 307.7 354.8 312.8 358.2 C317.9 361.6 323.2 365.2 328.0 367.8 C332.7 370.4 336.7 372.6 341.2 373.9 C345.8 375.3 352.8 375.7 355.1 376.1 M290.4 342.8 C292.7 344.6 299.4 350.3 304.6 353.4 C309.8 356.5 316.4 359.2 321.7 361.4 C327.0 363.5 332.0 365.1 336.5 366.5 C341.0 367.9 346.6 369.1 348.7 369.6 M299.6 344.9 C301.8 347.0 308.6 353.5 313.3 357.5 C317.9 361.5 322.8 365.8 327.4 368.9 C332.0 371.9 336.3 374.3 340.9 375.8 C345.5 377.2 350.8 377.2 355.1 377.4 C359.5 377.5 365.0 376.6 366.9 376.4 M279.4 330.0 C281.5 331.9 287.2 337.8 291.6 341.4 C296.1 344.9 301.0 348.1 306.1 351.3 C311.1 354.6 317.0 358.1 322.1 360.7 C327.1 363.4 331.8 365.7 336.3 367.1 C340.7 368.5 344.5 368.9 348.7 369.3 C352.9 369.6 357.5 369.2 361.2 369.1 C364.9 369.0 369.3 368.7 370.9 368.7 M206.8 427.3 C207.7 430.0 210.2 437.5 211.9 443.4 C213.5 449.3 215.4 456.4 216.7 462.9 C218.1 469.4 219.4 476.2 219.9 482.3 C220.4 488.4 220.4 493.1 219.8 499.2 C219.1 505.2 217.4 512.4 216.1 518.5 C214.8 524.7 212.8 533.1 212.1 536.1 M203.8 398.6 C204.7 400.4 207.2 405.5 209.2 409.7 C211.2 413.9 214.0 418.8 215.8 424.0 C217.7 429.1 219.0 434.6 220.4 440.8 C221.7 446.9 223.3 457.7 223.8 461.0 M223.7 450.2 C224.2 453.7 225.7 464.5 226.4 471.3 C227.0 478.0 228.0 484.3 227.9 490.8 C227.7 497.3 226.8 504.0 225.5 510.4 C224.1 516.9 221.7 524.4 219.7 529.8 C217.6 535.2 214.5 540.7 213.4 542.9 M429.0 460.6 C433.0 459.6 445.2 456.4 453.5 454.8 C461.7 453.3 470.0 452.0 478.5 451.2 C487.0 450.4 496.8 448.8 504.5 450.0 C512.2 451.1 519.4 454.0 524.7 458.2 C530.0 462.4 534.0 468.7 536.4 475.1 C538.9 481.5 538.8 493.1 539.3 496.7 M504.6 449.6 C508.0 451.0 519.7 453.5 525.1 457.8 C530.4 462.0 534.2 468.5 536.6 475.0 C539.1 481.5 539.8 488.9 539.5 496.7 C539.2 504.4 535.6 517.3 534.8 521.5" fill="none" stroke="#555" stroke-width="3.36" stroke-linecap="round" stroke-linejoin="round"/><path d="M227.1 236.0 C230.1 240.9 238.4 255.2 244.8 265.5 C251.2 275.8 262.0 292.5 265.5 297.9 M20.6 300.0 C18.2 303.4 7.4 316.0 5.9 320.6 C4.4 325.3 2.9 326.0 11.8 328.0 C20.6 330.1 44.7 330.2 59.0 333.0 C73.3 335.8 87.5 340.5 97.3 344.8 C107.2 349.2 113.0 354.4 118.0 359.0 C123.0 363.6 125.9 370.1 127.4 372.3 M0.0 506.5 C1.5 496.7 1.5 463.2 8.8 447.5 C16.2 431.8 31.0 421.4 44.2 412.1 C57.5 402.8 72.3 396.9 88.5 391.4 C104.7 386.0 124.9 380.6 141.6 379.6 C158.3 378.7 174.0 381.1 188.8 385.5 C203.5 390.0 223.2 402.8 230.1 406.2 M103.2 382.6 C103.2 384.6 102.5 392.9 103.2 394.4 C104.0 395.9 106.9 391.9 107.7 391.4 M126.8 406.2 C133.2 403.7 152.4 391.9 165.2 391.4 C178.0 391.0 195.2 396.4 203.5 403.2 C211.9 410.1 214.8 421.4 215.3 432.7 C215.8 444.1 211.9 457.8 206.5 471.1 C201.1 484.4 190.8 497.6 182.9 512.4 C175.0 527.1 163.2 551.7 159.3 559.6 M177.0 412.1 C174.0 414.6 163.2 420.5 159.3 426.8 C155.4 433.2 152.4 447.5 153.4 450.4 C154.4 453.4 160.3 448.0 165.2 444.5 C170.1 441.1 175.0 432.7 182.9 429.8 C190.8 426.8 207.5 427.3 212.4 426.8 M188.8 453.4 C196.7 451.4 223.2 445.0 236.0 441.6 C248.8 438.2 253.2 436.7 265.5 432.7 C277.8 428.8 302.4 420.5 309.7 418.0 M0.0 482.9 C0.5 491.7 1.0 521.2 2.9 536.0 C4.9 550.7 7.4 561.1 11.8 571.4 C16.2 581.7 26.5 593.5 29.5 597.9 M70.8 509.4 C73.7 513.4 83.6 524.7 88.5 533.0 C93.4 541.4 96.6 550.0 100.3 559.6 C104.0 569.2 108.9 585.4 110.6 590.6 M129.8 536.0 C132.7 540.9 145.0 555.2 147.5 565.5 C150.0 575.8 145.0 592.5 144.5 597.9 M100.3 527.1 C108.2 525.2 132.7 521.7 147.5 515.3 C162.2 508.9 176.0 497.1 188.8 488.8 C201.6 480.4 218.3 469.1 224.2 465.2 M159.3 482.9 C167.2 481.4 188.8 473.1 206.5 474.0 C224.2 475.0 250.2 479.4 265.5 488.8 C280.7 498.1 285.6 524.2 297.9 530.1 C310.2 536.0 325.0 528.1 339.2 524.2 C353.5 520.3 376.1 509.4 383.5 506.5 M256.6 305.9 C257.1 312.8 253.2 333.4 259.6 347.2 C266.0 361.0 286.1 375.7 295.0 388.5 C303.8 401.3 307.8 412.1 312.7 423.9 C317.6 435.7 322.5 453.4 324.5 459.3 M295.0 541.9 C304.8 538.9 336.5 528.6 354.0 524.2 C371.5 519.8 392.3 516.8 400.0 515.3 M354.0 359.0 C358.4 360.5 372.9 367.4 380.5 367.8 C388.2 368.3 396.8 362.9 400.0 361.9 M324.5 503.5 C331.9 502.1 356.1 494.7 368.7 494.7 C381.3 494.7 394.8 502.1 400.0 503.5 M368.7 403.2 C370.7 405.2 379.1 411.6 380.5 415.0 C382.0 418.5 378.1 422.4 377.6 423.9 M367.8 300.0 C366.4 305.4 361.5 322.6 359.0 332.4 C356.5 342.3 350.6 352.6 353.1 359.0 C355.6 365.4 370.3 368.8 373.7 370.8 M459.3 300.0 C459.7 308.4 460.7 333.9 461.7 350.1 C462.6 366.4 463.6 384.1 465.2 397.3 C466.8 410.6 470.1 424.4 471.1 429.8 M518.3 412.1 C517.3 415.0 514.4 425.4 512.4 429.8 C510.4 434.2 510.4 437.4 506.5 438.6 C502.6 439.9 494.2 437.9 488.8 437.2 C483.4 436.4 476.5 434.7 474.0 434.2 M335.4 453.4 C346.7 454.4 379.6 459.5 403.2 459.3 C426.8 459.0 458.3 452.7 477.0 451.9 C495.7 451.2 508.9 454.4 515.3 454.9 M420.9 474.0 C432.7 472.6 473.5 464.7 491.7 465.2 C509.9 465.7 522.2 471.1 530.1 477.0 C538.0 482.9 539.4 491.7 538.9 500.6 C538.4 509.4 529.1 525.2 527.1 530.1 M300.0 530.1 C314.7 526.2 359.0 512.9 388.5 506.5 C418.0 500.1 462.2 494.2 477.0 491.7 M338.3 538.9 C351.6 533.5 392.9 513.9 418.0 506.5 C443.1 499.1 477.0 496.7 488.8 494.7 M326.5 503.5 C341.8 500.1 394.9 487.3 418.0 482.9 C441.1 478.5 457.3 478.0 465.2 477.0 M347.2 527.1 C354.1 525.7 374.2 522.2 388.5 518.3 C402.8 514.4 418.0 506.5 432.7 503.5 C447.5 500.6 469.6 501.1 477.0 500.6 M494.7 533.0 C496.7 530.6 503.0 522.7 506.5 518.3 C509.9 513.9 513.9 508.5 515.3 506.5 M418.0 359.0 C418.5 361.9 419.5 372.3 420.9 376.7 C422.4 381.1 424.1 383.3 426.8 385.5 C429.5 387.8 435.4 389.2 437.2 390.0 M300.0 338.3 C304.9 341.8 319.7 352.6 329.5 359.0 C339.3 365.4 354.1 373.7 359.0 376.7 M300.0 388.5 C304.9 388.0 317.7 383.1 329.5 385.5 C341.3 388.0 361.5 396.9 370.8 403.2 C380.1 409.6 382.6 415.5 385.5 423.9 C388.5 432.3 388.0 448.5 388.5 453.4 M367.8 404.7 C369.8 406.9 376.2 416.5 379.6 418.0 C383.1 419.5 386.5 416.0 388.5 413.6 C390.5 411.1 391.0 405.0 391.4 403.2 M471.1 435.7 C474.0 435.2 482.9 432.5 488.8 432.7 C494.7 433.0 503.5 436.4 506.5 437.2 M392.7 283.6 C394.6 285.1 399.4 290.4 403.8 292.5 C408.2 294.5 416.7 295.2 419.3 295.8 M390.5 305.8 C392.4 307.4 397.9 313.7 401.6 315.7 C405.3 317.7 410.8 317.6 412.7 317.9 M381.7 519.8 C388.6 516.8 410.5 506.4 423.1 501.8 C435.8 497.3 447.3 494.4 457.6 492.6 C467.9 490.8 476.2 491.6 484.9 491.1 C493.5 490.5 505.5 489.5 509.6 489.1 M380.8 517.7 C387.6 514.4 409.1 503.4 421.4 497.5 C433.6 491.6 444.5 486.1 454.3 482.2 C464.1 478.3 471.9 476.3 480.2 474.1 C488.5 471.9 496.6 470.7 504.2 469.2 C511.8 467.8 522.2 466.1 525.8 465.5 M427.2 512.0 C432.7 510.1 450.4 503.6 460.2 500.7 C470.0 497.9 477.7 496.8 485.9 494.9 C494.2 493.0 502.2 491.3 509.7 489.4 C517.1 487.6 527.1 484.7 530.6 483.8 M344.4 511.6 C348.0 511.2 358.6 510.0 366.1 508.9 C373.5 507.8 381.3 506.6 389.1 505.0 C396.8 503.4 404.7 501.3 412.6 499.1 C420.5 496.9 429.3 494.2 436.6 492.0 C444.0 489.8 450.9 487.7 456.7 486.0 C462.6 484.2 467.4 482.9 471.9 481.7 C476.3 480.4 480.3 479.3 483.5 478.5 C486.8 477.6 490.1 476.7 491.4 476.4 M389.1 505.3 C393.1 504.4 405.0 502.3 413.0 500.2 C421.0 498.2 429.7 495.3 437.0 493.0 C444.3 490.6 451.0 488.1 456.8 486.2 C462.6 484.2 467.3 482.5 471.7 481.2 C476.1 479.8 480.1 478.7 483.4 478.1 C486.7 477.4 490.3 477.4 491.7 477.3 M209.9 440.0 C212.4 439.4 219.5 437.7 224.8 436.3 C230.2 435.0 236.2 433.4 241.9 431.9 C247.5 430.4 253.3 428.8 258.5 427.4 C263.8 425.9 268.3 424.5 273.4 423.0 C278.4 421.5 283.8 419.9 289.0 418.3 C294.2 416.8 299.6 415.1 304.4 413.7 C309.2 412.3 313.9 410.9 317.8 409.8 C321.6 408.8 325.7 407.8 327.2 407.4 M211.2 444.9 C213.7 444.1 220.7 442.0 226.0 440.4 C231.3 438.9 237.3 437.1 242.9 435.5 C248.5 433.9 254.3 432.3 259.5 430.8 C264.8 429.3 269.3 428.0 274.4 426.6 C279.5 425.1 284.9 423.6 290.1 422.0 C295.3 420.5 300.8 418.9 305.5 417.4 C310.3 416.0 316.6 414.0 318.8 413.3 M367.1 328.6 C367.2 331.4 368.4 340.1 367.5 345.1 C366.5 350.0 363.5 354.7 361.4 358.4 C359.4 362.1 356.4 365.8 355.1 367.3 C353.7 368.8 352.7 367.3 353.6 367.6 C354.4 367.8 356.7 368.4 360.3 368.8 C363.9 369.1 372.8 369.7 375.3 369.9 M464.7 378.0 C465.2 381.5 466.8 392.5 467.6 398.8 C468.4 405.2 468.9 411.2 469.3 416.2 C469.8 421.1 470.0 424.9 470.3 428.4 C470.7 431.9 471.1 434.7 471.5 437.1 C472.0 439.4 472.9 441.7 473.2 442.6 M468.7 398.9 C472.6 397.0 485.8 389.6 492.3 387.6 C498.7 385.6 503.2 385.3 507.6 387.0 C511.9 388.7 515.9 392.9 518.4 397.9 C520.8 402.8 523.0 410.7 522.5 416.7 C521.9 422.8 519.8 430.3 515.2 434.4 C510.7 438.5 498.3 440.1 495.0 441.2 M483.0 509.1 C483.9 507.9 486.7 504.3 488.5 502.1 C490.2 499.8 492.1 497.5 493.6 495.6 C495.1 493.7 496.3 492.3 497.6 490.7 C498.8 489.1 500.0 487.7 501.0 486.2 C502.1 484.8 503.1 483.4 504.0 482.2 C504.8 480.9 505.9 479.3 506.3 478.8 M481.5 496.5 C482.5 495.5 485.5 492.2 487.2 490.5 C488.9 488.7 490.4 487.4 492.0 486.1 C493.5 484.7 495.0 483.5 496.4 482.4 C497.8 481.2 499.2 480.2 500.4 479.2 C501.6 478.2 502.7 477.3 503.7 476.6 C504.6 475.8 505.6 475.0 506.0 474.6 M255.3 365.5 C256.7 367.6 260.9 374.0 263.9 378.3 C266.8 382.7 269.9 387.5 273.2 391.7 C276.6 395.9 280.6 399.8 284.1 403.5 C287.6 407.1 291.5 410.2 294.4 413.4 C297.3 416.7 300.1 421.2 301.3 422.8 M466.2 454.1 C470.5 453.6 483.5 451.3 491.7 451.1 C500.0 451.0 509.0 450.5 515.5 453.1 C522.0 455.7 527.2 461.2 530.8 466.6 C534.3 471.9 535.9 482.2 536.9 485.3" fill="none" stroke="#555" stroke-width="4.8" stroke-linecap="round" stroke-linejoin="round"/><path d="M0.0 46.6 C6.1 44.2 20.2 35.5 36.9 32.4 C53.6 29.4 73.0 24.8 100.3 28.0 C127.6 31.2 175.5 44.7 200.6 51.6 C225.7 58.5 238.9 63.2 250.7 69.3 C262.5 75.5 265.6 81.5 271.4 88.5 C277.2 95.5 283.2 107.7 285.5 111.5 M10.3 163.7 C14.0 166.9 27.3 175.8 32.4 182.9 C37.6 190.0 41.3 196.7 41.3 206.5 C41.3 216.3 36.4 231.8 32.4 241.9 C28.5 252.0 20.2 262.8 17.7 267.0 M230.1 423.9 C238.4 420.5 264.5 409.1 280.2 403.2 C296.0 397.3 309.2 390.0 324.5 388.5 C339.7 387.0 363.8 393.4 371.7 394.4 M460.8 403.8 C464.5 402.3 475.8 397.2 482.9 394.4 C490.0 391.6 498.6 386.5 503.5 387.0 C508.5 387.5 509.9 393.2 512.4 397.3 C514.8 401.5 517.3 409.6 518.3 412.1 M512.4 397.3 L521.2 418.0 M491.7 474.0 C493.7 477.0 500.1 486.3 503.5 491.7 C507.0 497.1 510.9 504.0 512.4 506.5 M506.5 545.4 L538.9 531.6 M359.0 521.2 C365.4 518.8 382.6 512.9 397.3 506.5 C412.1 500.1 439.1 486.8 447.5 482.9 M409.1 503.5 C415.5 502.1 435.2 496.7 447.5 494.7 C459.8 492.7 477.0 492.2 482.9 491.7 M471.1 518.3 C474.0 515.8 482.9 508.5 488.8 503.5 C494.7 498.6 503.5 491.2 506.5 488.8 M397.3 314.7 C398.3 315.3 400.8 318.0 403.2 318.3 C405.7 318.5 410.6 316.6 412.1 316.2 M364.9 373.7 C368.3 373.0 381.1 370.6 385.5 369.3 C390.0 368.1 390.5 366.9 391.4 366.4 M343.0 502.4 C346.5 501.7 357.0 500.1 364.1 498.3 C371.3 496.6 378.5 494.4 385.7 491.8 C392.9 489.2 400.0 485.9 407.4 482.8 C414.8 479.7 426.5 474.8 430.3 473.2 M271.0 405.7 C274.0 404.6 283.2 401.4 289.3 399.3 C295.3 397.1 301.3 394.8 307.2 392.6 C313.1 390.5 318.9 388.3 324.4 386.5 C329.9 384.7 337.6 382.7 340.3 382.0 M233.9 421.3 C236.8 420.3 245.1 417.4 251.5 415.5 C257.9 413.5 265.7 411.2 272.3 409.6 C278.9 408.0 284.8 406.9 291.0 405.7 C297.3 404.6 303.6 403.6 309.6 402.5 C315.7 401.4 324.4 399.7 327.3 399.2 M474.8 519.8 C475.5 519.2 477.2 517.5 478.8 515.9 C480.3 514.2 482.2 512.0 484.1 509.9 C486.0 507.8 488.1 505.4 489.9 503.2 C491.8 501.1 493.8 498.9 495.5 497.2 C497.2 495.4 498.6 494.1 500.0 492.7 C501.5 491.4 503.0 490.1 504.4 489.0 C505.8 487.9 507.2 486.9 508.5 486.0 C509.8 485.1 511.5 484.0 512.1 483.6" fill="none" stroke="#555" stroke-width="6.72" stroke-linecap="round" stroke-linejoin="round"/></g></g></svg></div>
<div class="t" style="left:1721.5px;top:539.2px;font-size:13.5px;line-height:13.5px;color:#f6f6f6;letter-spacing:0.37px;font-weight:bold;">nacrt</div>
<svg style="left:1873px;top:538px;" width="18" height="18" viewBox="0 0 18 18"><path d="M14.52 8.04 L16.95 8.12 L16.95 9.88 L14.52 9.96 L13.58 12.22 L15.24 14.00 L14.00 15.24 L12.22 13.58 L9.96 14.52 L9.88 16.95 L8.12 16.95 L8.04 14.52 L5.78 13.58 L4.00 15.24 L2.76 14.00 L4.42 12.22 L3.48 9.96 L1.05 9.88 L1.05 8.12 L3.48 8.04 L4.42 5.78 L2.76 4.00 L4.00 2.76 L5.78 4.42 L8.04 3.48 L8.12 1.05 L9.88 1.05 L9.96 3.48 L12.22 4.42 L14.00 2.76 L15.24 4.00 L13.58 5.78Z" fill="#ffffff" stroke="#ffffff" stroke-width="0.6" stroke-linejoin="round"/><circle cx="9" cy="9" r="2.2" fill="#4f9bd5"/></svg>
<div style="left:1636px;top:567px;width:258px;height:40px;background:#5f5f5f;border-bottom:1px solid #262626"></div>
<svg style="left:1639px;top:580px;" width="12" height="12" viewBox="0 0 12 12"><circle cx="6" cy="6" r="5.1" fill="#c6c6c6"/><circle cx="6" cy="6" r="2.7" fill="#ececec"/></svg>
<div style="left:1670px;top:574px;width:34px;height:25px;background-color:#fff;background-image:linear-gradient(45deg,#e0e0e0 25%,transparent 25%,transparent 75%,#e0e0e0 75%),linear-gradient(45deg,#e0e0e0 25%,transparent 25%,transparent 75%,#e0e0e0 75%);background-size:8px 8px;background-position:0 0,4px 4px;overflow:hidden"><svg style="left:0;top:0" width="34" height="25" viewBox="0 0 801 600"><g stroke-width="6"><g opacity=".8"><path d="M302.4 118.0 C296.2 125.9 277.0 147.5 265.5 165.2 C253.9 182.9 238.4 214.4 233.0 224.2 M236.0 193.2 C238.4 191.5 246.8 186.1 250.7 182.9 C254.7 179.7 258.1 175.5 259.6 174.0 M227.1 236.0 L236.0 238.9 M253.7 253.7 C256.6 253.2 266.2 252.9 271.4 250.7 C276.5 248.5 284.2 238.4 284.7 240.4 C285.2 242.4 277.5 255.4 274.3 262.5 C271.1 269.7 267.0 279.7 265.5 283.2 M35.4 271.4 C35.2 273.8 34.9 281.4 33.9 286.1 C32.9 290.9 30.2 297.7 29.5 300.0 M295.0 261.1 C297.9 264.7 307.8 276.7 312.7 283.2 C317.6 289.7 322.5 297.2 324.5 300.0 M359.9 259.6 C360.9 263.0 365.3 273.5 365.8 280.2 C366.3 287.0 363.3 296.7 362.8 300.0 M380.5 265.5 L377.6 300.0 M106.2 369.3 C99.3 374.0 77.2 385.8 64.9 397.3 C52.6 408.9 39.8 425.9 32.4 438.6 C25.1 451.4 22.6 468.1 20.6 474.0 M103.2 450.4 C107.2 444.1 114.6 421.4 126.8 412.1 C139.1 402.8 163.7 394.4 177.0 394.4 C190.3 394.4 200.6 404.2 206.5 412.1 C212.4 420.0 211.4 436.7 212.4 441.6 M67.8 516.8 L97.3 533.0 M123.9 538.9 C130.8 536.5 151.4 532.5 165.2 524.2 C179.0 515.8 199.6 494.7 206.5 488.8 M165.2 488.8 C169.1 486.8 181.9 480.9 188.8 477.0 C195.7 473.1 204.0 469.1 206.5 465.2 C208.9 461.3 204.0 455.4 203.5 453.4 M182.9 547.8 C186.8 550.7 200.1 557.1 206.5 565.5 C212.9 573.8 218.8 592.5 221.2 597.9 M156.3 562.5 C159.8 559.6 169.6 554.2 177.0 544.8 C184.4 535.5 193.7 519.8 200.6 506.5 C207.5 493.2 215.3 472.1 218.3 465.2 M253.7 350.1 C255.7 351.6 262.0 358.5 265.5 359.0 C268.9 359.5 271.4 351.1 274.3 353.1 C277.3 355.1 281.7 367.8 283.2 370.8 M262.5 308.8 C266.0 310.3 275.8 310.8 283.2 317.7 C290.6 324.6 296.0 340.8 306.8 350.1 C317.6 359.5 341.2 369.8 348.1 373.7 M215.3 488.8 C228.6 487.8 267.0 482.4 295.0 482.9 C323.0 483.4 368.7 490.3 383.5 491.7 M224.2 465.2 C229.1 469.1 241.9 483.9 253.7 488.8 C265.5 493.7 278.3 494.7 295.0 494.7 C311.7 494.7 336.5 487.8 354.0 488.8 C371.5 489.8 392.3 498.6 400.0 500.6 M218.3 482.9 C226.2 486.8 252.7 499.6 265.5 506.5 C278.3 513.4 290.1 521.2 295.0 524.2 M94.4 491.7 C96.4 491.2 102.3 491.2 106.2 488.8 C110.1 486.3 117.0 476.0 118.0 477.0 C119.0 478.0 115.5 490.3 112.1 494.7 C108.7 499.1 99.8 502.1 97.3 503.5 M103.2 482.9 C105.2 484.4 116.0 489.3 115.0 491.7 C114.1 494.2 100.3 496.7 97.3 497.6 M265.5 441.6 C266.5 445.5 270.6 458.8 271.4 465.2 C272.1 471.6 270.2 477.5 269.9 479.9 M280.2 459.3 L286.1 477.0 M300.9 465.2 C300.4 471.1 298.4 491.7 297.9 500.6 C297.4 509.4 297.9 515.3 297.9 518.3 M315.6 441.6 C316.6 445.5 322.0 458.3 321.5 465.2 C321.0 472.1 318.1 479.0 312.7 482.9 C307.3 486.8 293.0 487.8 289.1 488.8 M188.8 550.7 C191.7 552.2 201.6 555.2 206.5 559.6 C211.4 564.0 216.3 574.3 218.3 577.3 M333.3 338.3 C334.3 341.8 334.8 352.6 339.2 359.0 C343.7 365.4 356.4 373.7 359.9 376.7 M339.2 447.5 C344.6 445.0 361.6 435.7 371.7 432.7 C381.8 429.8 395.3 430.3 400.0 429.8 M373.7 300.0 C372.8 304.4 369.6 317.7 367.8 326.5 C366.1 335.4 364.2 348.7 363.4 353.1 M382.6 300.0 C381.6 304.9 382.6 318.7 376.7 329.5 C370.8 340.3 352.1 359.0 347.2 364.9 M453.4 305.9 C453.9 314.7 455.1 342.8 456.3 359.0 C457.6 375.2 460.0 395.9 460.8 403.2 M447.5 338.3 C446.0 344.2 441.1 362.9 438.6 373.7 C436.2 384.6 432.7 390.0 432.7 403.2 C432.7 416.5 437.7 445.0 438.6 453.4 M426.8 317.7 C425.4 322.1 422.9 334.4 418.0 344.2 C413.1 354.1 404.7 366.9 397.3 376.7 C390.0 386.5 377.7 398.8 373.7 403.2 M518.3 429.8 L521.2 438.6 M300.0 488.8 C305.9 489.3 323.1 489.3 335.4 491.7 C347.7 494.2 367.4 501.6 373.7 503.5 M329.5 506.5 C339.3 504.5 369.8 497.6 388.5 494.7 C407.2 491.7 432.7 489.8 441.6 488.8 M506.5 530.1 L515.3 518.3 M398.8 394.4 C399.1 393.4 399.1 390.0 400.3 388.5 C401.5 387.0 404.3 385.3 406.2 385.5 C408.1 385.8 410.8 387.8 411.5 390.0 C412.2 392.2 411.9 396.9 410.6 398.8 C409.3 400.8 405.8 402.5 403.8 401.8 C401.9 401.0 399.7 395.6 398.8 394.4 M403.8 393.8 C404.3 393.5 406.1 391.8 406.8 392.0 C407.5 392.2 407.8 394.5 408.0 395.0 M426.8 356.0 C427.3 359.0 427.8 368.8 429.8 373.7 C431.8 378.7 437.2 383.6 438.6 385.5 M335.4 450.4 C339.3 447.5 350.6 435.2 359.0 432.7 C367.4 430.3 381.1 435.2 385.5 435.7 M314.7 429.8 C315.7 432.7 319.2 442.1 320.6 447.5 C322.1 452.9 323.1 459.8 323.6 462.2 M323.6 397.3 C327.0 396.4 336.4 391.9 344.2 391.4 C352.1 391.0 366.4 393.9 370.8 394.4 M308.8 388.5 C310.3 392.4 315.2 405.7 317.7 412.1 C320.2 418.5 322.6 424.4 323.6 426.8 M418.0 438.6 L423.9 447.5 M530.1 465.2 C531.1 468.1 534.3 477.5 536.0 482.9 C537.7 488.3 539.7 495.2 540.4 497.6 M347.2 335.4 L359.0 367.8 M329.5 329.5 L341.3 353.1 M300.0 308.8 C302.9 313.3 310.3 326.1 317.7 335.4 C325.1 344.7 336.9 357.8 344.2 364.9 C351.6 372.0 359.0 376.0 361.9 378.2 M302.0 118.8 C298.7 122.7 289.1 134.1 282.1 142.0 C275.1 150.0 263.7 162.3 260.0 166.4 M275.5 100.0 L286.5 111.1 M260.0 252.7 C262.2 251.9 269.4 250.1 273.3 248.2 C277.1 246.4 283.2 239.0 283.2 241.6 C283.2 244.2 276.4 256.0 273.3 263.7 C270.1 271.5 265.9 284.0 264.4 288.1 M260.0 294.7 C262.2 297.3 269.6 305.1 273.3 310.2 C277.0 315.2 280.6 322.5 282.1 325.0 M459.1 197.3 C460.6 198.5 466.7 199.6 468.0 204.0 C469.3 208.4 467.2 217.6 466.9 223.9 C466.5 230.2 463.7 235.9 465.8 241.6 C467.8 247.3 476.8 255.4 479.0 258.2 M445.8 259.3 L465.8 257.1 M472.4 263.7 C469.1 267.0 455.1 277.0 452.5 283.6 C449.9 290.3 455.8 296.6 456.9 303.5 C458.0 310.4 458.7 321.4 459.1 325.0 M414.9 270.8 L428.1 268.6 M364.0 241.6 C365.8 247.5 374.7 263.3 375.0 277.0 C375.4 290.6 367.7 315.7 366.2 323.5 M359.6 243.8 C360.3 250.1 364.4 273.3 364.0 281.4 C363.6 289.5 358.5 290.6 357.3 292.5 M392.7 237.2 C392.4 243.8 392.7 262.6 390.5 277.0 C388.3 291.4 381.3 315.7 379.5 323.5 M383.9 263.7 C383.2 269.6 380.9 288.9 379.5 299.1 C378.0 309.3 375.8 320.7 375.0 325.0 M434.8 270.4 C434.2 275.1 432.6 290.0 431.5 299.1 C430.4 308.2 428.7 320.7 428.1 325.0 M452.5 210.6 C451.0 212.8 445.8 219.5 443.6 223.9 C441.4 228.3 439.9 235.0 439.2 237.2 M372.8 263.7 C373.9 263.9 377.3 265.2 379.5 264.8 C381.7 264.5 385.0 262.1 386.1 261.5 M370.6 215.0 C370.3 217.3 367.7 223.9 368.4 228.3 C369.1 232.7 373.9 239.4 375.0 241.6 M320.7 528.7 C327.0 526.9 345.5 522.3 358.6 517.9 C371.7 513.6 385.9 507.6 399.2 502.5 C412.6 497.4 427.2 491.3 438.7 487.4 C450.1 483.4 459.2 481.1 468.1 478.7 C477.1 476.2 484.4 474.6 492.4 472.5 C500.3 470.5 511.8 467.5 515.7 466.5 M417.9 488.9 C423.6 486.6 441.9 478.4 452.1 475.3 C462.3 472.2 470.4 471.1 479.1 470.3 C487.9 469.4 496.4 470.1 504.5 470.3 C512.5 470.5 523.5 471.2 527.4 471.3 M295.0 545.6 C299.8 544.6 312.5 542.8 323.7 540.0 C334.9 537.2 349.2 533.6 362.4 528.7 C375.5 523.8 389.6 516.8 402.6 510.6 C415.6 504.4 429.3 496.9 440.2 491.6 C451.1 486.3 459.6 482.4 468.2 478.8 C476.7 475.2 483.8 472.4 491.6 469.8 C499.4 467.2 510.9 464.2 514.8 463.1 M405.1 516.7 C411.5 513.9 432.1 504.2 443.2 499.8 C454.3 495.4 462.7 492.6 471.5 490.5 C480.4 488.4 488.2 487.8 496.4 487.1 C504.6 486.5 513.9 486.6 521.0 486.7 C528.1 486.7 535.9 487.3 538.9 487.5 M436.0 480.2 C440.8 477.8 456.1 470.8 464.5 466.0 C472.9 461.2 479.1 455.6 486.5 451.5 C494.0 447.4 502.5 443.5 509.1 441.4 C515.7 439.4 523.5 439.7 526.3 439.3 M427.9 513.6 C433.6 512.5 452.2 508.7 462.1 506.7 C472.1 504.7 479.6 503.6 487.7 501.5 C495.9 499.4 503.6 496.3 510.9 494.1 C518.3 491.8 528.2 489.1 531.7 488.1 M396.1 487.2 C400.0 485.9 411.9 482.1 419.5 479.6 C427.1 477.0 435.2 473.9 441.8 471.7 C448.4 469.4 454.0 467.5 459.2 465.9 C464.3 464.3 468.8 463.0 472.7 461.9 C476.6 460.9 480.9 459.9 482.5 459.5 M251.5 495.4 C254.0 496.9 261.4 501.1 266.7 504.8 C272.0 508.4 277.6 513.1 283.3 517.1 C289.0 521.1 294.8 525.5 301.2 528.8 C307.6 532.1 314.9 534.9 321.7 536.9 C328.5 538.9 336.2 540.0 341.9 540.8 C347.6 541.6 353.5 541.5 355.8 541.6 M236.5 490.4 C238.8 491.6 245.5 495.5 250.5 498.0 C255.5 500.5 260.7 503.0 266.5 505.4 C272.2 507.7 278.7 510.2 284.9 512.4 C291.2 514.6 297.4 516.6 304.0 518.4 C310.6 520.3 317.7 521.9 324.4 523.6 C331.0 525.3 338.6 527.1 344.0 528.9 C349.5 530.6 355.0 533.1 357.2 534.0 M251.9 470.5 C254.7 470.9 262.7 472.3 268.7 473.1 C274.7 473.8 281.5 474.4 287.9 475.1 C294.2 475.7 300.8 476.3 306.8 476.9 C312.7 477.6 317.6 478.1 323.5 479.2 C329.5 480.3 336.6 481.9 342.5 483.5 C348.5 485.1 356.6 487.8 359.4 488.7 M226.0 461.8 C227.8 462.6 233.0 464.7 237.2 466.3 C241.5 468.0 246.4 469.9 251.4 471.9 C256.3 473.8 261.4 475.7 266.9 477.9 C272.4 480.1 278.4 482.6 284.3 484.9 C290.2 487.1 296.3 489.5 302.1 491.5 C308.0 493.5 313.3 495.1 319.5 496.7 C325.7 498.3 333.1 499.8 339.3 501.1 C345.5 502.5 353.7 504.1 356.6 504.6 M217.4 502.1 C219.6 502.7 226.1 504.7 231.0 505.8 C235.9 506.9 241.4 507.1 246.8 508.6 C252.1 510.1 257.4 511.9 262.9 514.9 C268.4 517.9 274.1 522.4 280.0 526.5 C285.9 530.6 295.2 537.5 298.2 539.7 M248.1 504.9 C250.5 506.7 257.1 512.6 262.5 516.0 C267.9 519.4 274.1 522.9 280.5 525.2 C286.9 527.4 293.9 528.7 300.9 529.7 C308.0 530.7 315.8 530.5 322.8 531.3 C329.8 532.0 339.7 533.8 343.1 534.3 M277.8 489.9 C281.4 489.8 292.3 489.6 299.8 489.3 C307.2 489.0 314.7 488.2 322.4 487.9 C330.1 487.5 337.7 487.1 346.2 487.3 C354.7 487.5 365.1 488.4 373.6 489.2 C382.0 490.0 393.0 491.6 396.9 492.1 M278.1 496.2 C281.8 496.1 292.8 495.4 300.2 495.4 C307.6 495.3 314.9 495.6 322.3 496.1 C329.7 496.5 336.5 497.4 344.6 498.3 C352.7 499.1 362.6 500.6 370.9 501.4 C379.2 502.2 390.5 503.0 394.4 503.3 M256.7 480.2 C260.1 480.2 270.1 480.4 277.2 480.3 C284.2 480.2 291.5 479.7 299.1 479.6 C306.6 479.5 314.5 479.1 322.5 479.4 C330.5 479.8 338.4 480.5 347.1 481.7 C355.7 482.8 365.8 484.9 374.1 486.5 C382.5 488.1 393.3 490.3 397.2 491.1 M267.1 482.5 C270.6 482.4 280.7 481.8 288.0 481.5 C295.3 481.2 303.0 481.0 310.7 481.0 C318.4 481.0 325.9 481.0 334.3 481.5 C342.6 481.9 351.8 482.9 360.7 483.6 C369.5 484.3 379.8 485.3 387.4 485.6 C395.0 486.0 403.0 485.7 406.2 485.7 M211.6 494.4 C213.9 494.6 219.9 495.6 225.6 495.8 C231.4 496.0 239.0 496.2 245.9 495.8 C252.9 495.4 260.3 494.5 267.4 493.3 C274.5 492.2 281.3 490.2 288.6 488.9 C295.8 487.6 307.2 485.9 310.9 485.3 M251.5 415.5 C254.8 414.0 265.0 409.3 271.4 406.8 C277.7 404.3 283.5 402.4 289.6 400.5 C295.7 398.6 301.9 397.1 307.9 395.5 C313.9 393.8 322.5 391.5 325.4 390.7 M199.2 441.9 C200.9 441.1 205.0 438.8 209.1 437.1 C213.1 435.3 218.3 433.2 223.5 431.5 C228.7 429.7 234.7 427.9 240.3 426.5 C245.9 425.0 251.9 423.8 257.2 422.6 C262.5 421.4 269.7 419.8 272.2 419.3 M345.2 306.4 C346.2 308.1 349.1 312.4 351.3 316.4 C353.6 320.5 356.7 326.1 358.7 330.9 C360.6 335.6 362.9 340.5 363.1 344.9 C363.3 349.4 361.4 353.8 359.8 357.4 C358.3 361.1 355.0 364.6 353.7 366.6 C352.4 368.5 351.0 368.3 352.1 369.0 C353.1 369.7 358.8 370.5 360.2 370.8 M365.9 352.6 C365.3 355.0 363.5 363.8 362.8 366.7 C362.0 369.6 362.4 370.7 361.4 370.0 C360.3 369.3 355.4 363.5 356.4 362.5 C357.4 361.5 365.8 363.7 367.6 364.0 M351.0 347.4 C350.5 349.0 349.0 353.6 348.2 357.1 C347.4 360.5 345.3 365.4 346.2 368.2 C347.0 370.9 349.9 372.5 353.4 373.5 C357.0 374.5 362.8 373.8 367.6 373.9 C372.4 374.0 379.8 374.0 382.2 374.0 M361.4 330.2 C362.3 332.6 366.2 339.9 367.0 345.1 C367.7 350.2 366.7 356.6 365.7 360.9 C364.8 365.1 362.6 370.2 361.2 370.7 C359.9 371.1 358.3 364.8 357.7 363.6 M459.2 348.3 C459.5 351.6 460.2 361.1 460.7 367.9 C461.3 374.7 461.8 382.3 462.4 389.0 C463.0 395.8 463.7 403.0 464.3 408.7 C465.0 414.4 465.7 419.0 466.4 423.2 C467.1 427.3 467.9 430.5 468.7 433.4 C469.5 436.2 470.7 439.2 471.1 440.3 M459.6 310.5 C459.6 313.4 459.5 321.5 459.7 327.7 C459.9 334.0 460.1 341.5 460.7 348.2 C461.2 354.8 462.0 360.9 463.0 367.7 C464.1 374.4 465.6 381.8 467.0 388.5 C468.3 395.2 470.0 402.3 471.2 407.9 C472.4 413.5 473.8 419.9 474.3 422.3 M420.8 360.0 C420.3 363.6 419.0 375.2 417.9 381.7 C416.7 388.2 415.5 393.7 413.9 398.9 C412.3 404.1 410.7 408.6 408.3 412.7 C405.8 416.8 403.5 419.9 399.1 423.7 C394.7 427.4 388.3 431.2 381.6 435.2 C374.9 439.1 365.5 443.6 358.9 447.2 C352.3 450.8 345.0 455.1 342.2 456.6 M422.3 372.2 C421.8 375.4 420.1 385.5 419.0 391.5 C417.9 397.4 417.2 402.7 415.7 407.9 C414.1 413.0 412.9 417.6 409.9 422.5 C406.9 427.3 403.3 432.0 397.7 437.0 C392.1 441.9 383.4 447.5 376.4 452.1 C369.5 456.7 359.3 462.6 355.9 464.7 M416.4 381.3 C415.2 384.0 412.2 393.0 409.6 397.5 C406.9 402.1 403.6 405.7 400.5 408.6 C397.3 411.6 394.8 412.6 390.5 415.3 C386.3 418.0 377.5 423.2 374.9 424.7 M453.7 322.9 C453.5 325.8 453.0 333.1 452.4 340.1 C451.8 347.0 451.0 356.8 449.9 364.9 C448.9 373.1 447.4 381.8 446.0 388.9 C444.7 396.1 443.7 401.3 442.0 407.6 C440.2 413.9 438.8 420.3 435.6 426.8 C432.3 433.3 424.8 443.4 422.7 446.7 M433.4 362.1 C432.8 365.9 431.3 378.1 429.9 384.8 C428.6 391.5 427.3 396.9 425.4 402.5 C423.5 408.0 421.6 413.2 418.5 418.0 C415.4 422.8 412.1 427.0 406.9 431.3 C401.6 435.5 394.3 439.6 387.1 443.7 C379.8 447.7 370.2 452.0 363.4 455.4 C356.7 458.8 349.3 462.7 346.5 464.2 M372.6 434.5 C374.3 432.7 380.9 425.8 382.9 423.4 C385.0 420.9 384.2 417.1 384.9 419.9 C385.6 422.7 387.0 432.8 386.9 440.2 C386.8 447.6 386.8 458.8 384.3 464.4 C381.9 470.0 376.4 471.6 372.4 473.7 C368.5 475.8 362.7 476.3 360.7 476.9 M385.1 419.4 C385.3 420.7 386.5 421.5 386.5 427.2 C386.4 432.9 386.3 447.0 384.9 453.8 C383.4 460.5 381.2 464.7 377.8 467.7 C374.5 470.6 366.8 470.8 364.6 471.4 M341.6 444.3 C344.7 442.5 355.1 436.7 360.3 433.3 C365.6 429.9 369.3 427.2 373.0 423.9 C376.7 420.7 379.3 413.3 382.7 413.8 C386.0 414.3 391.5 420.0 393.1 426.9 C394.7 433.7 394.0 447.0 392.2 454.9 C390.4 462.8 386.6 470.2 382.2 474.2 C377.9 478.1 368.8 477.9 366.1 478.6 M482.9 395.9 C485.8 395.0 496.1 390.8 500.6 390.5 C505.2 390.2 507.4 391.0 510.1 394.0 C512.8 397.0 515.9 403.4 516.7 408.4 C517.6 413.4 517.2 419.3 515.3 423.8 C513.4 428.2 511.0 433.5 505.4 435.2 C499.9 436.8 485.9 433.8 482.0 433.5 M294.1 403.3 C296.0 404.9 302.0 409.0 305.2 412.6 C308.5 416.2 311.1 420.0 313.6 425.0 C316.1 430.0 318.1 437.0 320.0 442.6 C321.8 448.3 323.9 456.2 324.7 458.9 M271.8 393.0 C274.0 394.6 280.6 399.6 284.9 402.5 C289.1 405.4 293.7 407.6 297.3 410.5 C300.9 413.4 304.0 415.8 306.6 419.8 C309.1 423.9 310.9 429.3 312.4 434.8 C313.9 440.3 314.9 447.6 315.8 452.8 C316.7 458.0 317.5 463.9 317.8 466.1 M275.8 378.8 C277.4 380.7 282.0 386.6 285.6 390.0 C289.3 393.4 293.7 396.0 297.7 399.2 C301.8 402.3 306.3 405.0 309.9 408.9 C313.5 412.9 316.7 417.4 319.1 422.9 C321.5 428.4 323.4 438.5 324.2 441.7 M271.8 325.2 C273.9 327.3 279.8 333.7 284.1 337.4 C288.3 341.2 292.6 344.1 297.4 347.6 C302.2 351.1 307.7 354.8 312.8 358.2 C317.9 361.6 323.2 365.2 328.0 367.8 C332.7 370.4 336.7 372.6 341.2 373.9 C345.8 375.3 352.8 375.7 355.1 376.1 M290.4 342.8 C292.7 344.6 299.4 350.3 304.6 353.4 C309.8 356.5 316.4 359.2 321.7 361.4 C327.0 363.5 332.0 365.1 336.5 366.5 C341.0 367.9 346.6 369.1 348.7 369.6 M299.6 344.9 C301.8 347.0 308.6 353.5 313.3 357.5 C317.9 361.5 322.8 365.8 327.4 368.9 C332.0 371.9 336.3 374.3 340.9 375.8 C345.5 377.2 350.8 377.2 355.1 377.4 C359.5 377.5 365.0 376.6 366.9 376.4 M279.4 330.0 C281.5 331.9 287.2 337.8 291.6 341.4 C296.1 344.9 301.0 348.1 306.1 351.3 C311.1 354.6 317.0 358.1 322.1 360.7 C327.1 363.4 331.8 365.7 336.3 367.1 C340.7 368.5 344.5 368.9 348.7 369.3 C352.9 369.6 357.5 369.2 361.2 369.1 C364.9 369.0 369.3 368.7 370.9 368.7 M206.8 427.3 C207.7 430.0 210.2 437.5 211.9 443.4 C213.5 449.3 215.4 456.4 216.7 462.9 C218.1 469.4 219.4 476.2 219.9 482.3 C220.4 488.4 220.4 493.1 219.8 499.2 C219.1 505.2 217.4 512.4 216.1 518.5 C214.8 524.7 212.8 533.1 212.1 536.1 M203.8 398.6 C204.7 400.4 207.2 405.5 209.2 409.7 C211.2 413.9 214.0 418.8 215.8 424.0 C217.7 429.1 219.0 434.6 220.4 440.8 C221.7 446.9 223.3 457.7 223.8 461.0 M223.7 450.2 C224.2 453.7 225.7 464.5 226.4 471.3 C227.0 478.0 228.0 484.3 227.9 490.8 C227.7 497.3 226.8 504.0 225.5 510.4 C224.1 516.9 221.7 524.4 219.7 529.8 C217.6 535.2 214.5 540.7 213.4 542.9 M429.0 460.6 C433.0 459.6 445.2 456.4 453.5 454.8 C461.7 453.3 470.0 452.0 478.5 451.2 C487.0 450.4 496.8 448.8 504.5 450.0 C512.2 451.1 519.4 454.0 524.7 458.2 C530.0 462.4 534.0 468.7 536.4 475.1 C538.9 481.5 538.8 493.1 539.3 496.7 M504.6 449.6 C508.0 451.0 519.7 453.5 525.1 457.8 C530.4 462.0 534.2 468.5 536.6 475.0 C539.1 481.5 539.8 488.9 539.5 496.7 C539.2 504.4 535.6 517.3 534.8 521.5" fill="none" stroke="#555" stroke-width="3.36" stroke-linecap="round" stroke-linejoin="round"/><path d="M227.1 236.0 C230.1 240.9 238.4 255.2 244.8 265.5 C251.2 275.8 262.0 292.5 265.5 297.9 M20.6 300.0 C18.2 303.4 7.4 316.0 5.9 320.6 C4.4 325.3 2.9 326.0 11.8 328.0 C20.6 330.1 44.7 330.2 59.0 333.0 C73.3 335.8 87.5 340.5 97.3 344.8 C107.2 349.2 113.0 354.4 118.0 359.0 C123.0 363.6 125.9 370.1 127.4 372.3 M0.0 506.5 C1.5 496.7 1.5 463.2 8.8 447.5 C16.2 431.8 31.0 421.4 44.2 412.1 C57.5 402.8 72.3 396.9 88.5 391.4 C104.7 386.0 124.9 380.6 141.6 379.6 C158.3 378.7 174.0 381.1 188.8 385.5 C203.5 390.0 223.2 402.8 230.1 406.2 M103.2 382.6 C103.2 384.6 102.5 392.9 103.2 394.4 C104.0 395.9 106.9 391.9 107.7 391.4 M126.8 406.2 C133.2 403.7 152.4 391.9 165.2 391.4 C178.0 391.0 195.2 396.4 203.5 403.2 C211.9 410.1 214.8 421.4 215.3 432.7 C215.8 444.1 211.9 457.8 206.5 471.1 C201.1 484.4 190.8 497.6 182.9 512.4 C175.0 527.1 163.2 551.7 159.3 559.6 M177.0 412.1 C174.0 414.6 163.2 420.5 159.3 426.8 C155.4 433.2 152.4 447.5 153.4 450.4 C154.4 453.4 160.3 448.0 165.2 444.5 C170.1 441.1 175.0 432.7 182.9 429.8 C190.8 426.8 207.5 427.3 212.4 426.8 M188.8 453.4 C196.7 451.4 223.2 445.0 236.0 441.6 C248.8 438.2 253.2 436.7 265.5 432.7 C277.8 428.8 302.4 420.5 309.7 418.0 M0.0 482.9 C0.5 491.7 1.0 521.2 2.9 536.0 C4.9 550.7 7.4 561.1 11.8 571.4 C16.2 581.7 26.5 593.5 29.5 597.9 M70.8 509.4 C73.7 513.4 83.6 524.7 88.5 533.0 C93.4 541.4 96.6 550.0 100.3 559.6 C104.0 569.2 108.9 585.4 110.6 590.6 M129.8 536.0 C132.7 540.9 145.0 555.2 147.5 565.5 C150.0 575.8 145.0 592.5 144.5 597.9 M100.3 527.1 C108.2 525.2 132.7 521.7 147.5 515.3 C162.2 508.9 176.0 497.1 188.8 488.8 C201.6 480.4 218.3 469.1 224.2 465.2 M159.3 482.9 C167.2 481.4 188.8 473.1 206.5 474.0 C224.2 475.0 250.2 479.4 265.5 488.8 C280.7 498.1 285.6 524.2 297.9 530.1 C310.2 536.0 325.0 528.1 339.2 524.2 C353.5 520.3 376.1 509.4 383.5 506.5 M256.6 305.9 C257.1 312.8 253.2 333.4 259.6 347.2 C266.0 361.0 286.1 375.7 295.0 388.5 C303.8 401.3 307.8 412.1 312.7 423.9 C317.6 435.7 322.5 453.4 324.5 459.3 M295.0 541.9 C304.8 538.9 336.5 528.6 354.0 524.2 C371.5 519.8 392.3 516.8 400.0 515.3 M354.0 359.0 C358.4 360.5 372.9 367.4 380.5 367.8 C388.2 368.3 396.8 362.9 400.0 361.9 M324.5 503.5 C331.9 502.1 356.1 494.7 368.7 494.7 C381.3 494.7 394.8 502.1 400.0 503.5 M368.7 403.2 C370.7 405.2 379.1 411.6 380.5 415.0 C382.0 418.5 378.1 422.4 377.6 423.9 M367.8 300.0 C366.4 305.4 361.5 322.6 359.0 332.4 C356.5 342.3 350.6 352.6 353.1 359.0 C355.6 365.4 370.3 368.8 373.7 370.8 M459.3 300.0 C459.7 308.4 460.7 333.9 461.7 350.1 C462.6 366.4 463.6 384.1 465.2 397.3 C466.8 410.6 470.1 424.4 471.1 429.8 M518.3 412.1 C517.3 415.0 514.4 425.4 512.4 429.8 C510.4 434.2 510.4 437.4 506.5 438.6 C502.6 439.9 494.2 437.9 488.8 437.2 C483.4 436.4 476.5 434.7 474.0 434.2 M335.4 453.4 C346.7 454.4 379.6 459.5 403.2 459.3 C426.8 459.0 458.3 452.7 477.0 451.9 C495.7 451.2 508.9 454.4 515.3 454.9 M420.9 474.0 C432.7 472.6 473.5 464.7 491.7 465.2 C509.9 465.7 522.2 471.1 530.1 477.0 C538.0 482.9 539.4 491.7 538.9 500.6 C538.4 509.4 529.1 525.2 527.1 530.1 M300.0 530.1 C314.7 526.2 359.0 512.9 388.5 506.5 C418.0 500.1 462.2 494.2 477.0 491.7 M338.3 538.9 C351.6 533.5 392.9 513.9 418.0 506.5 C443.1 499.1 477.0 496.7 488.8 494.7 M326.5 503.5 C341.8 500.1 394.9 487.3 418.0 482.9 C441.1 478.5 457.3 478.0 465.2 477.0 M347.2 527.1 C354.1 525.7 374.2 522.2 388.5 518.3 C402.8 514.4 418.0 506.5 432.7 503.5 C447.5 500.6 469.6 501.1 477.0 500.6 M494.7 533.0 C496.7 530.6 503.0 522.7 506.5 518.3 C509.9 513.9 513.9 508.5 515.3 506.5 M418.0 359.0 C418.5 361.9 419.5 372.3 420.9 376.7 C422.4 381.1 424.1 383.3 426.8 385.5 C429.5 387.8 435.4 389.2 437.2 390.0 M300.0 338.3 C304.9 341.8 319.7 352.6 329.5 359.0 C339.3 365.4 354.1 373.7 359.0 376.7 M300.0 388.5 C304.9 388.0 317.7 383.1 329.5 385.5 C341.3 388.0 361.5 396.9 370.8 403.2 C380.1 409.6 382.6 415.5 385.5 423.9 C388.5 432.3 388.0 448.5 388.5 453.4 M367.8 404.7 C369.8 406.9 376.2 416.5 379.6 418.0 C383.1 419.5 386.5 416.0 388.5 413.6 C390.5 411.1 391.0 405.0 391.4 403.2 M471.1 435.7 C474.0 435.2 482.9 432.5 488.8 432.7 C494.7 433.0 503.5 436.4 506.5 437.2 M392.7 283.6 C394.6 285.1 399.4 290.4 403.8 292.5 C408.2 294.5 416.7 295.2 419.3 295.8 M390.5 305.8 C392.4 307.4 397.9 313.7 401.6 315.7 C405.3 317.7 410.8 317.6 412.7 317.9 M381.7 519.8 C388.6 516.8 410.5 506.4 423.1 501.8 C435.8 497.3 447.3 494.4 457.6 492.6 C467.9 490.8 476.2 491.6 484.9 491.1 C493.5 490.5 505.5 489.5 509.6 489.1 M380.8 517.7 C387.6 514.4 409.1 503.4 421.4 497.5 C433.6 491.6 444.5 486.1 454.3 482.2 C464.1 478.3 471.9 476.3 480.2 474.1 C488.5 471.9 496.6 470.7 504.2 469.2 C511.8 467.8 522.2 466.1 525.8 465.5 M427.2 512.0 C432.7 510.1 450.4 503.6 460.2 500.7 C470.0 497.9 477.7 496.8 485.9 494.9 C494.2 493.0 502.2 491.3 509.7 489.4 C517.1 487.6 527.1 484.7 530.6 483.8 M344.4 511.6 C348.0 511.2 358.6 510.0 366.1 508.9 C373.5 507.8 381.3 506.6 389.1 505.0 C396.8 503.4 404.7 501.3 412.6 499.1 C420.5 496.9 429.3 494.2 436.6 492.0 C444.0 489.8 450.9 487.7 456.7 486.0 C462.6 484.2 467.4 482.9 471.9 481.7 C476.3 480.4 480.3 479.3 483.5 478.5 C486.8 477.6 490.1 476.7 491.4 476.4 M389.1 505.3 C393.1 504.4 405.0 502.3 413.0 500.2 C421.0 498.2 429.7 495.3 437.0 493.0 C444.3 490.6 451.0 488.1 456.8 486.2 C462.6 484.2 467.3 482.5 471.7 481.2 C476.1 479.8 480.1 478.7 483.4 478.1 C486.7 477.4 490.3 477.4 491.7 477.3 M209.9 440.0 C212.4 439.4 219.5 437.7 224.8 436.3 C230.2 435.0 236.2 433.4 241.9 431.9 C247.5 430.4 253.3 428.8 258.5 427.4 C263.8 425.9 268.3 424.5 273.4 423.0 C278.4 421.5 283.8 419.9 289.0 418.3 C294.2 416.8 299.6 415.1 304.4 413.7 C309.2 412.3 313.9 410.9 317.8 409.8 C321.6 408.8 325.7 407.8 327.2 407.4 M211.2 444.9 C213.7 444.1 220.7 442.0 226.0 440.4 C231.3 438.9 237.3 437.1 242.9 435.5 C248.5 433.9 254.3 432.3 259.5 430.8 C264.8 429.3 269.3 428.0 274.4 426.6 C279.5 425.1 284.9 423.6 290.1 422.0 C295.3 420.5 300.8 418.9 305.5 417.4 C310.3 416.0 316.6 414.0 318.8 413.3 M367.1 328.6 C367.2 331.4 368.4 340.1 367.5 345.1 C366.5 350.0 363.5 354.7 361.4 358.4 C359.4 362.1 356.4 365.8 355.1 367.3 C353.7 368.8 352.7 367.3 353.6 367.6 C354.4 367.8 356.7 368.4 360.3 368.8 C363.9 369.1 372.8 369.7 375.3 369.9 M464.7 378.0 C465.2 381.5 466.8 392.5 467.6 398.8 C468.4 405.2 468.9 411.2 469.3 416.2 C469.8 421.1 470.0 424.9 470.3 428.4 C470.7 431.9 471.1 434.7 471.5 437.1 C472.0 439.4 472.9 441.7 473.2 442.6 M468.7 398.9 C472.6 397.0 485.8 389.6 492.3 387.6 C498.7 385.6 503.2 385.3 507.6 387.0 C511.9 388.7 515.9 392.9 518.4 397.9 C520.8 402.8 523.0 410.7 522.5 416.7 C521.9 422.8 519.8 430.3 515.2 434.4 C510.7 438.5 498.3 440.1 495.0 441.2 M483.0 509.1 C483.9 507.9 486.7 504.3 488.5 502.1 C490.2 499.8 492.1 497.5 493.6 495.6 C495.1 493.7 496.3 492.3 497.6 490.7 C498.8 489.1 500.0 487.7 501.0 486.2 C502.1 484.8 503.1 483.4 504.0 482.2 C504.8 480.9 505.9 479.3 506.3 478.8 M481.5 496.5 C482.5 495.5 485.5 492.2 487.2 490.5 C488.9 488.7 490.4 487.4 492.0 486.1 C493.5 484.7 495.0 483.5 496.4 482.4 C497.8 481.2 499.2 480.2 500.4 479.2 C501.6 478.2 502.7 477.3 503.7 476.6 C504.6 475.8 505.6 475.0 506.0 474.6 M255.3 365.5 C256.7 367.6 260.9 374.0 263.9 378.3 C266.8 382.7 269.9 387.5 273.2 391.7 C276.6 395.9 280.6 399.8 284.1 403.5 C287.6 407.1 291.5 410.2 294.4 413.4 C297.3 416.7 300.1 421.2 301.3 422.8 M466.2 454.1 C470.5 453.6 483.5 451.3 491.7 451.1 C500.0 451.0 509.0 450.5 515.5 453.1 C522.0 455.7 527.2 461.2 530.8 466.6 C534.3 471.9 535.9 482.2 536.9 485.3" fill="none" stroke="#555" stroke-width="4.8" stroke-linecap="round" stroke-linejoin="round"/><path d="M0.0 46.6 C6.1 44.2 20.2 35.5 36.9 32.4 C53.6 29.4 73.0 24.8 100.3 28.0 C127.6 31.2 175.5 44.7 200.6 51.6 C225.7 58.5 238.9 63.2 250.7 69.3 C262.5 75.5 265.6 81.5 271.4 88.5 C277.2 95.5 283.2 107.7 285.5 111.5 M10.3 163.7 C14.0 166.9 27.3 175.8 32.4 182.9 C37.6 190.0 41.3 196.7 41.3 206.5 C41.3 216.3 36.4 231.8 32.4 241.9 C28.5 252.0 20.2 262.8 17.7 267.0 M230.1 423.9 C238.4 420.5 264.5 409.1 280.2 403.2 C296.0 397.3 309.2 390.0 324.5 388.5 C339.7 387.0 363.8 393.4 371.7 394.4 M460.8 403.8 C464.5 402.3 475.8 397.2 482.9 394.4 C490.0 391.6 498.6 386.5 503.5 387.0 C508.5 387.5 509.9 393.2 512.4 397.3 C514.8 401.5 517.3 409.6 518.3 412.1 M512.4 397.3 L521.2 418.0 M491.7 474.0 C493.7 477.0 500.1 486.3 503.5 491.7 C507.0 497.1 510.9 504.0 512.4 506.5 M506.5 545.4 L538.9 531.6 M359.0 521.2 C365.4 518.8 382.6 512.9 397.3 506.5 C412.1 500.1 439.1 486.8 447.5 482.9 M409.1 503.5 C415.5 502.1 435.2 496.7 447.5 494.7 C459.8 492.7 477.0 492.2 482.9 491.7 M471.1 518.3 C474.0 515.8 482.9 508.5 488.8 503.5 C494.7 498.6 503.5 491.2 506.5 488.8 M397.3 314.7 C398.3 315.3 400.8 318.0 403.2 318.3 C405.7 318.5 410.6 316.6 412.1 316.2 M364.9 373.7 C368.3 373.0 381.1 370.6 385.5 369.3 C390.0 368.1 390.5 366.9 391.4 366.4 M343.0 502.4 C346.5 501.7 357.0 500.1 364.1 498.3 C371.3 496.6 378.5 494.4 385.7 491.8 C392.9 489.2 400.0 485.9 407.4 482.8 C414.8 479.7 426.5 474.8 430.3 473.2 M271.0 405.7 C274.0 404.6 283.2 401.4 289.3 399.3 C295.3 397.1 301.3 394.8 307.2 392.6 C313.1 390.5 318.9 388.3 324.4 386.5 C329.9 384.7 337.6 382.7 340.3 382.0 M233.9 421.3 C236.8 420.3 245.1 417.4 251.5 415.5 C257.9 413.5 265.7 411.2 272.3 409.6 C278.9 408.0 284.8 406.9 291.0 405.7 C297.3 404.6 303.6 403.6 309.6 402.5 C315.7 401.4 324.4 399.7 327.3 399.2 M474.8 519.8 C475.5 519.2 477.2 517.5 478.8 515.9 C480.3 514.2 482.2 512.0 484.1 509.9 C486.0 507.8 488.1 505.4 489.9 503.2 C491.8 501.1 493.8 498.9 495.5 497.2 C497.2 495.4 498.6 494.1 500.0 492.7 C501.5 491.4 503.0 490.1 504.4 489.0 C505.8 487.9 507.2 486.9 508.5 486.0 C509.8 485.1 511.5 484.0 512.1 483.6" fill="none" stroke="#555" stroke-width="6.72" stroke-linecap="round" stroke-linejoin="round"/></g></g></svg></div>
<div class="t" style="left:1721.5px;top:579.6px;font-size:13px;line-height:13px;color:#f6f6f6;letter-spacing:-0.49px;">Layer4</div>
<div style="left:1897px;top:407px;width:19px;height:517px;background:#252525"></div>
<svg style="left:1902.5px;top:408.5px;" width="8" height="7" viewBox="0 0 8 7"><path d="M4 0 L8 7 H0 Z" fill="#aaaaaa"/></svg>
<svg style="left:1902.5px;top:915.5px;" width="8" height="7" viewBox="0 0 8 7"><path d="M0 0 H8 L4 7 Z" fill="#aaaaaa"/></svg>
<div style="left:1897px;top:418px;width:19px;height:495px;background:linear-gradient(90deg,#424242,#2e2e2e);border-radius:6px"></div>
<div style="left:1897px;top:420px;width:19px;height:486px;background:linear-gradient(90deg,#7e7e7e,#666);border-radius:6px"></div>
<div style="left:1635px;top:923px;width:280px;height:31px;border:1px solid #3a3a3a"></div>
<div class="b kg" style="left:1639px;top:927px;width:23px;height:23px"><svg width="23" height="23" viewBox="0 0 23 23"><path d="M6 4.6 h7 l4 4 v9 h-11 z M13 4.6 v4 h4" fill="none" stroke="#ececec" stroke-width="1.2" /></svg></div>
<div class="b kg" style="left:1666px;top:927px;width:23px;height:23px"><svg width="23" height="23" viewBox="0 0 23 23"><path d="M6 4.6 h7 l4 4 v9 h-11 z M13 4.6 v4 h4" fill="none" stroke="#ececec" stroke-width="1.2" /><text x="11.5" y="16.2" font-size="9" text-anchor="middle" fill="#bfe0c4" font-family="Liberation Sans">8</text></svg></div>
<div class="b kg" style="left:1693px;top:927px;width:23px;height:23px"><svg width="23" height="23" viewBox="0 0 23 23"><path d="M6 4.6 h7 l4 4 v9 h-11 z M13 4.6 v4 h4" fill="none" stroke="#ececec" stroke-width="1.2" /><text x="11.5" y="16.2" font-size="9" text-anchor="middle" fill="#ececec" font-family="Liberation Sans">1</text></svg></div>
<div class="b kg" style="left:1720px;top:927px;width:31px;height:23px"><svg width="31" height="23" viewBox="0 0 31 23"><g transform="translate(-2.5,-1)"><path d="M13 17.5 h-6.5 v-13 h6 l4 4 v4 M12.5 4.5 v4 h4" fill="none" stroke="#ececec" stroke-width="1.1" stroke="#bdbdbd"/></g><path d="M9.5 16 h7 M13 12.5 v7" stroke="#f0f0f0" stroke-width="1.5"/><path d="M20.5 9.5 h7 l-3.5 4.2 z" fill="#f4f4f4"/></svg></div>
<div class="b kg" style="left:1754px;top:927px;width:23px;height:23px"><svg width="23" height="23" viewBox="0 0 23 23"><path d="M4.5 7 a1 1 0 0 1 1 -1 h4 l1.5 1.6 h6.5 a1 1 0 0 1 1 1 v8.4 a1 1 0 0 1 -1 1 h-12 a1 1 0 0 1 -1 -1 z" fill="#ececec"/></svg></div>
<div style="left:1782px;top:932px;width:1px;height:13px;background:#5a5a5a"></div>
<div class="b kg" style="left:1788px;top:927px;width:23px;height:23px"><svg width="23" height="23" viewBox="0 0 23 23"><rect x="8.5" y="5" width="10" height="10" fill="none" stroke="#dcdcdc" stroke-width="1.2"/><rect x="5" y="8.5" width="10" height="10" fill="#4a4a4a" stroke="#dcdcdc" stroke-width="1.2"/></svg></div>
<div class="b kg" style="left:1815px;top:927px;width:23px;height:23px"><svg width="23" height="23" viewBox="0 0 23 23"><rect x="13" y="8.5" width="6" height="5.5" fill="#f0f0f0"/><path d="M4.5 5 h4.5 v4.5 h-4.5z M4.5 13.5 h4.5 v4.5 h-4.5z" fill="none" stroke="#dcdcdc" stroke-width="1"/><path d="M4.5 9.5 l4.5 -4.5 v4.5z M4.5 18 l4.5 -4.5 v4.5z" fill="#dcdcdc"/><path d="M9.6 7.2 l2.4 3.8 l-2.4 4" stroke="#dcdcdc" stroke-width="1" fill="none"/></svg></div>
<div style="left:1843px;top:932px;width:1px;height:13px;background:#5a5a5a"></div>
<div class="b kg" style="left:1849px;top:927px;width:23px;height:23px"><svg width="23" height="23" viewBox="0 0 23 23"><path d="M5 7 h13 M9.5 7 v-2 h4 v2" stroke="#ececec" stroke-width="1.4" fill="none"/><path d="M6.2 8.6 h10.6 v10 h-10.6z" fill="none" stroke="#ececec" stroke-width="1.4"/><path d="M9.3 10 v7.4 M11.5 10 v7.4 M13.7 10 v7.4" stroke="#ececec" stroke-width="1.5"/></svg></div>
<div style="left:1633px;top:955px;width:284px;height:5px;background:repeating-conic-gradient(#2d2d2d 0 25%,#1e1e1e 0 50%) 0 0/4px 4px"></div>
<div style="left:1633px;top:960px;width:284px;height:1px;background:#14304c"></div>
<div style="left:1633px;top:961px;width:284px;height:1px;background:#6f9cc6"></div>
<div style="left:1633px;top:962px;width:284px;height:21px;background:#393738"></div>
<div class="t" style="left:1734.3px;top:966.8px;font-size:12px;line-height:12px;color:#e0e0e0;letter-spacing:-0.68px;">Reference</div>
<svg style="left:1886px;top:966px;" width="11" height="11" viewBox="0 0 11 11"><path d="M5.2 3.6 H1.6 V9.6 H9.2 V6.6 M5.2 6.2 L10 1.4 M6.8 1 H10.4 V4.6" fill="none" stroke="#bebebe" stroke-width="1.25"/></svg>
<svg style="left:1903px;top:966px;" width="10" height="10" viewBox="0 0 10 10"><path d="M1.4 1.4 l7.2 7.2 M8.6 1.4 l-7.2 7.2" stroke="#c9c9c9" stroke-width="2.7"/></svg>
<div style="left:1633px;top:983px;width:284px;height:29px;background:#252525"></div>
<div class="b kg" style="left:1637px;top:986px;width:23px;height:23px"><svg width="23" height="23" viewBox="0 0 23 23"><path d="M7 14 a3.4 3.4 0 0 1 -.2 -6.6 a4.8 4.8 0 0 1 9.2 -.6 a3.7 3.7 0 0 1 .6 7.2 z" fill="#f0f0f0"/><path d="M9.8 11 h3.4 v4.4 h2.6 l-4.3 4.4 l-4.3 -4.4 h2.6 z" fill="#f0f0f0" stroke="#4a4a4a" stroke-width=".9"/></svg></div>
<div class="b kg" style="left:1664px;top:986px;width:23px;height:23px"><svg width="23" height="23" viewBox="0 0 23 23"><path d="M4.5 17 v-10.5 h4.5 l1.5 1.6 h6 v2.4" fill="none" stroke="#d8d8d8" stroke-width="1.3"/><path d="M4.6 17.5 l3 -7 h11.6 l-3 7 z" fill="#e4e4e4"/></svg></div>
<div class="b kd" style="left:1691px;top:986px;width:23px;height:23px"><svg width="23" height="23" viewBox="0 0 23 23"><path d="M7.5 7.5 l8 8 M15.5 7.5 l-8 8" stroke="#f0f0f0" stroke-width="2"/></svg></div>
<div style="left:1719px;top:991px;width:1px;height:13px;background:#5a5a5a"></div>
<div class="b kd" style="left:1725px;top:986px;width:23px;height:23px"><svg width="23" height="23" viewBox="0 0 23 23"><circle cx="10" cy="10" r="5.2" fill="none" stroke="#ececec" stroke-width="1.7"/><path d="M13.8 13.8 l4.6 4.6" stroke="#ececec" stroke-width="2.2" stroke-linecap="round"/><path d="M7.4 10 h5.2 M10 7.4 v5.2" stroke="#ececec" stroke-width="1.6"/></svg></div>
<div class="b kd" style="left:1752px;top:986px;width:23px;height:23px"><svg width="23" height="23" viewBox="0 0 23 23"><rect x="4.6" y="5.6" width="13.8" height="11.8" fill="none" stroke="#e6e6e6" stroke-width="1.1"/><path d="M6.6 7.6 h3.4 l-3.4 3.2z M16.4 7.6 h-3.4 l3.4 3.2z M6.6 15.4 h3.4 l-3.4 -3.2z M16.4 15.4 h-3.4 l3.4 -3.2z" fill="#ececec"/><path d="M8 9 l2.2 1.8 M15 9 l-2.2 1.8 M8 14 l2.2 -1.8 M15 14 l-2.2 -1.8" stroke="#ececec" stroke-width="1"/></svg></div>
<div class="b kd" style="left:1779px;top:986px;width:23px;height:23px"><svg width="23" height="23" viewBox="0 0 23 23"><circle cx="10" cy="10" r="5.2" fill="none" stroke="#ececec" stroke-width="1.7"/><path d="M13.8 13.8 l4.6 4.6" stroke="#ececec" stroke-width="2.2" stroke-linecap="round"/><path d="M7.4 10 h5.2" stroke="#ececec" stroke-width="1.6"/></svg></div>
<div style="left:1807px;top:991px;width:1px;height:13px;background:#5a5a5a"></div>
<div class="b kd" style="left:1813px;top:986px;width:23px;height:23px"><svg width="23" height="23" viewBox="0 0 23 23"><g transform="translate(-1.5,-2) scale(.92)"><path d="M14.6 9.6 l-9 9 l-.9 3.6 l3.6 -.9 l9 -9" fill="none" stroke="#ececec" stroke-width="1.5" stroke-linejoin="round"/><path d="M13.4 8.2 l1.6 -1.6 l1.2 1.2 l2.4 -2.8 c1.2 -1.2 2.8 -1.2 3.8 -.2 c1 1 1 2.6 -.2 3.8 l-2.8 2.4 l1.2 1.2 l-1.6 1.6 z" fill="#ececec" /></g></svg></div>
<div class="b kb" style="left:1840px;top:986px;width:23px;height:23px"><svg width="23" height="23" viewBox="0 0 23 23"><g transform="translate(-.5,-1.2) scale(.9)"><path d="M9.4 23.5 c-1.4 -1.8 -3 -4.4 -5.2 -7 c-1 -1.2 .4 -2.6 1.8 -1.6 l2.4 2 v-10 c0 -1.6 2.2 -1.6 2.2 0 v5.6 h.6 v-7.6 c0 -1.6 2.3 -1.6 2.3 0 v7.6 h.6 v-6.6 c0 -1.6 2.3 -1.6 2.3 0 v6.8 h.6 v-4.6 c0 -1.5 2.2 -1.5 2.2 0 v8.8 c0 3 -1 5 -2 6.6 z" fill="#ececec" /></g></svg></div>
<div style="left:1868px;top:991px;width:1px;height:13px;background:#5a5a5a"></div>
<div class="b kd" style="left:1874px;top:986px;width:23px;height:23px"><svg width="23" height="23" viewBox="0 0 23 23"><path d="M6.6 7 a6.6 6.6 0 1 0 4.9 -2.1" fill="none" stroke="#ececec" stroke-width="1.5"/><path d="M12 2.2 v5.4 l-3.6 -2.7 z" fill="#ececec"/><rect x="8.4" y="8.8" width="6.6" height="5.6" fill="#ececec" transform="rotate(-18 11.7 11.6)"/></svg></div>
<div style="left:1906px;top:986px;width:8px;height:23px;background:#4c4c4c;border-radius:4px"></div>
<div style="left:0px;top:1012px;width:1917px;height:5px;background:#2b2b2b;border-top:1px solid #3a3a3a"></div></div></body></html>
